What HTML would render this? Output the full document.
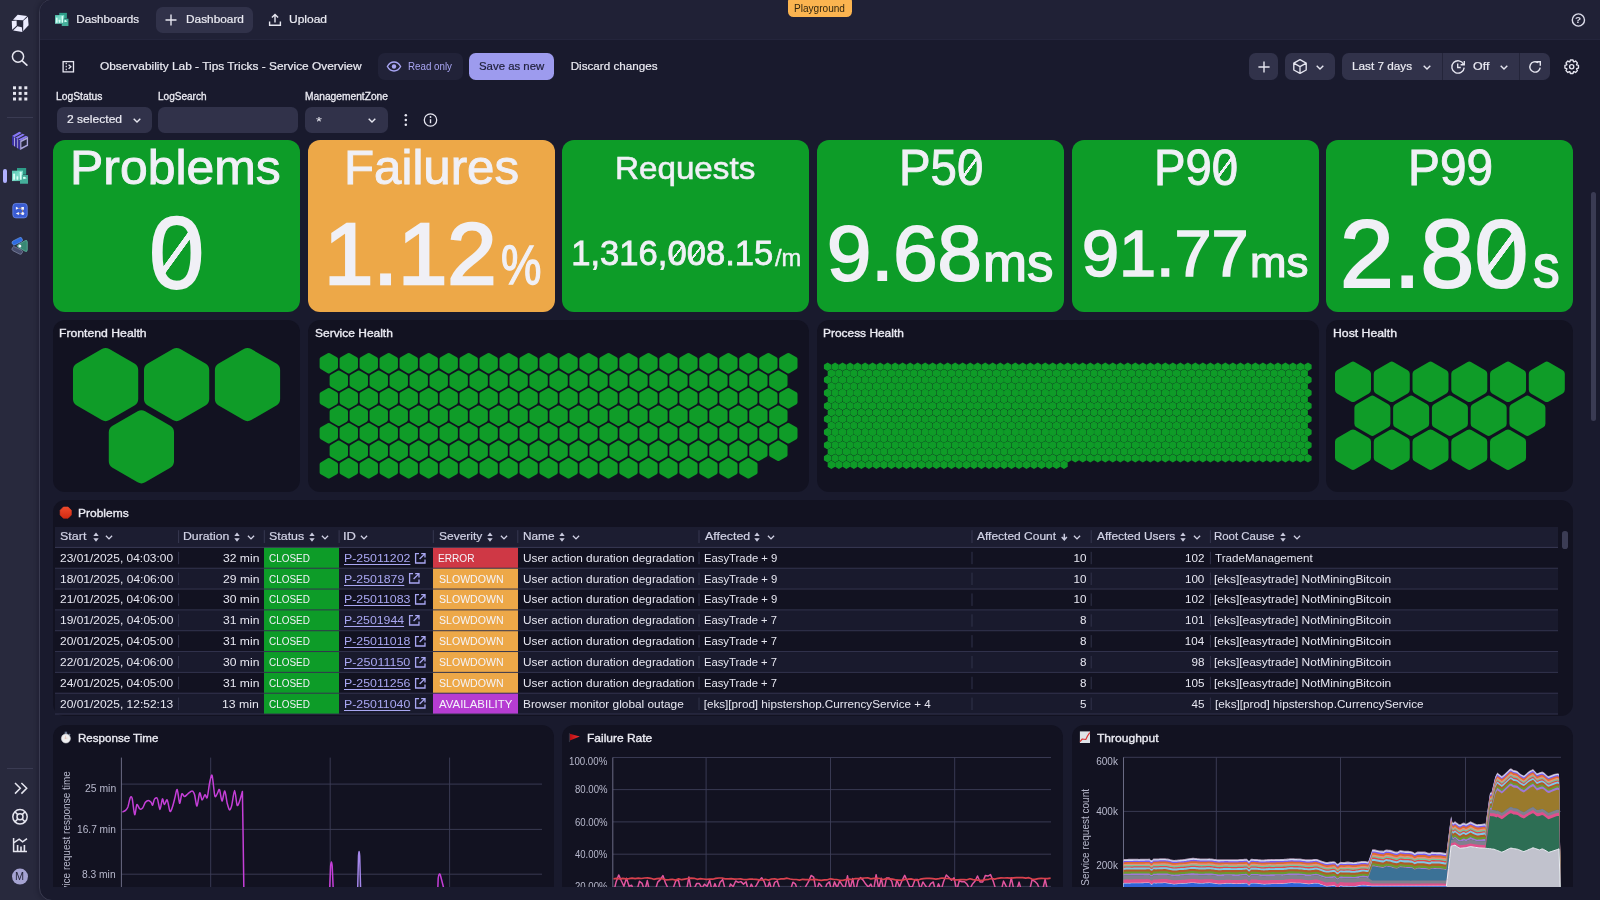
<!DOCTYPE html>
<html lang="en"><head><meta charset="utf-8"><title>Observability Lab - Tips Tricks - Service Overview</title>
<style>
html,body{margin:0;padding:0;}
body{width:1600px;height:900px;overflow:hidden;background:#28293d;font-family:"Liberation Sans", Arial, sans-serif;position:relative;}
#app div,#app svg,.t{position:absolute;}
#app{position:absolute;left:0;top:0;width:1600px;height:900px;overflow:hidden;will-change:transform;}
.t{white-space:pre;transform-origin:0 50%;display:block;text-decoration:none;}
.zs{background:linear-gradient(to bottom right,transparent 43.5%,currentColor 44.5%,currentColor 55.5%,transparent 56.5%);}
svg{overflow:visible;}
</style></head>
<body><div id="app">
<div style="left:39px;top:-1px;width:1570px;height:902px;box-sizing:border-box;border:1px solid #3a3b50;border-radius:13px 0 0 13px;background:#191a2d;overflow:hidden;box-shadow:-1px 0 5px 0 rgba(8,8,24,.30);"><div style="left:0;top:0;width:1570px;height:40px;background:#202136;border-bottom:1px solid #24253c;box-sizing:border-box;"></div></div>
<svg style="left:5.00px;top:8.00px;" width="30.00" height="30.00" viewBox="0 0 900 900"><polygon points="240,350 380,205 665,242 540,370" fill="#ececff" /><polygon points="548,385 688,262 708,520 545,692" fill="#ececff" /><polygon points="203,388 348,378 352,528 215,655" fill="#ececff" /><polygon points="245,672 370,545 505,575 522,718" fill="#ececff" /></svg>
<svg style="left:0.00px;top:40.00px;" width="40.00" height="40.00" viewBox="0 0 40 40"><circle cx="18" cy="16.6" r="5.6" fill="none" stroke="#e6e6f0" stroke-width="1.5"/><path d="M22.2 20.8L26.9 25.2" stroke="#e6e6f0" stroke-width="1.6" stroke-linecap="round"/></svg>
<svg style="left:0.00px;top:0.00px;" width="40.00" height="120.00" viewBox="0 0 40 120"><rect x="13.00" y="86.30" width="3" height="3" fill="#e6e6f0"/><rect x="13.00" y="91.90" width="3" height="3" fill="#e6e6f0"/><rect x="13.00" y="97.50" width="3" height="3" fill="#e6e6f0"/><rect x="18.65" y="86.30" width="3" height="3" fill="#e6e6f0"/><rect x="18.65" y="91.90" width="3" height="3" fill="#e6e6f0"/><rect x="18.65" y="97.50" width="3" height="3" fill="#e6e6f0"/><rect x="24.30" y="86.30" width="3" height="3" fill="#e6e6f0"/><rect x="24.30" y="91.90" width="3" height="3" fill="#e6e6f0"/><rect x="24.30" y="97.50" width="3" height="3" fill="#e6e6f0"/></svg>
<div style="left:7.00px;top:117.00px;width:26.00px;height:1.00px;background:#3a3b52;"></div>
<svg style="left:5.00px;top:126.00px;" width="30.00" height="30.00" viewBox="0 0 900 900"><polygon points="210,300 430,175 500,210 280,335" fill="#8878f6" /><polygon points="210,300 270,332 270,602 213,570" fill="#3b30a6" /><polygon points="270,335 300,350 300,620 270,602" fill="#aaa6da" /><polygon points="305,352 530,230 595,265 370,390" fill="#8878f6" /><polygon points="305,352 365,385 365,657 308,625" fill="#3b30a6" /><polygon points="365,388 398,405 398,675 365,657" fill="#aaa6da" /><polygon points="400,407 625,290 690,325 460,445" fill="#8878f6" /><polygon points="400,407 457,440 457,717 400,682" fill="#3b30a6" /><path d="M455 440L692 325L692 590L455 722Z M492 478L652 398L652 560L492 642Z" fill="#aaa6da" fill-rule="evenodd"/></svg>
<div style="left:3.00px;top:168.60px;width:4.00px;height:14.40px;background:#b0b0ff;border-radius:2px;"></div>
<svg style="left:0.00px;top:161.00px;" width="35.00" height="30.00" viewBox="0 0 1050 900"><defs><linearGradient id="dg" x1="0" y1="0" x2="1" y2="1"><stop offset="0" stop-color="#52c4ae"/><stop offset=".5" stop-color="#7fdccb"/><stop offset="1" stop-color="#3fae98"/></linearGradient></defs><rect x="510" y="210" width="275" height="200" fill="#2e9c88"/><rect x="360" y="290" width="330" height="312" fill="url(#dg)"/><rect x="600" y="420" width="240" height="262" fill="#45ae9a"/><rect x="395" y="375" width="55" height="190" rx="20" fill="#d8fff6"/><rect x="495" y="455" width="55" height="110" rx="20" fill="#d8fff6"/><rect x="595" y="320" width="55" height="245" rx="20" fill="#d8fff6"/><path d="M690 480Q700 465 740 470L800 520L700 548Z" fill="#d0fff4"/></svg>
<svg style="left:5.00px;top:196.00px;" width="30.00" height="65.00" viewBox="0 0 415 900"><rect x="108" y="103" width="200" height="200" rx="42" fill="#3a5cd2" stroke="#6f90f2" stroke-width="10"/><path d="M150 150L192 171L150 192Z" fill="#f4f4ff"/><rect x="226" y="152" width="36" height="38" fill="#f4f4ff"/><path d="M192 220L150 241L192 262Z" fill="#f4f4ff"/><circle cx="245" cy="241" r="21" fill="#f4f4ff"/><path d="M192 171H226M244 190V220M192 241H224" stroke="#f0a030" stroke-width="9" fill="none"/></svg>
<svg style="left:8.00px;top:232.00px;" width="24.00" height="26.00" viewBox="0 0 831 900"><rect x="130" y="245" width="380" height="150" rx="62" fill="#2f6ce0" stroke="#7fb2ff" stroke-width="16" transform="rotate(-27 320 320)"/><rect x="130" y="565" width="380" height="150" rx="62" fill="#474d6c" stroke="#a4acca" stroke-width="16" transform="rotate(27 320 640)"/><path d="M330 452L590 300Q665 262 668 345L668 620Q665 705 590 665L330 512Q290 482 330 452Z" fill="#388874" stroke="#72d2ba" stroke-width="20" stroke-linejoin="round"/><circle cx="410" cy="481" r="52" fill="#f4f4ff"/></svg>
<div style="left:7.00px;top:767.60px;width:26.00px;height:1.00px;background:#3a3b52;"></div>
<svg style="left:0.00px;top:770.00px;" width="40.00" height="130.00" viewBox="0 770 40 130"><path d="M15 783l5.3 5.3L15 793.6M21.4 783l5.3 5.3-5.3 5.3" fill="none" stroke="#e6e6f0" stroke-width="1.5"/><circle cx="20" cy="816.8" r="7.2" fill="none" stroke="#e6e6f0" stroke-width="1.5"/><circle cx="20" cy="816.8" r="3" fill="none" stroke="#e6e6f0" stroke-width="1.5"/><path d="M14.9 811.7l2.9 2.9M25.1 811.7l-2.9 2.9M14.9 821.9l2.9-2.9M25.1 821.9l-2.9-2.9" stroke="#e6e6f0" stroke-width="1.5"/><path d="M13.6 838v13.6H27" fill="none" stroke="#e6e6f0" stroke-width="1.5"/><path d="M14 842.6l5.2-3.4 3.4 2.6 4.4-3.2" fill="none" stroke="#e6e6f0" stroke-width="1.5"/><path d="M17.6 851v-6M21 851v-4.4M24.4 851v-6" stroke="#e6e6f0" stroke-width="1.6"/><circle cx="20" cy="876.6" r="8" fill="#a5a3d2"/></svg>
<span class="t" style="left:15.43px;top:872.40px;font-size:10px;line-height:10px;color:#26263c;transform:scaleX(1.0882);">M</span>
<svg style="left:44.95px;top:7.44px;" width="29.31" height="25.12" viewBox="0 0 1050 900"><defs><linearGradient id="dg2" x1="0" y1="0" x2="1" y2="1"><stop offset="0" stop-color="#52c4ae"/><stop offset=".5" stop-color="#7fdccb"/><stop offset="1" stop-color="#3fae98"/></linearGradient></defs><rect x="510" y="210" width="275" height="200" fill="#2e9c88"/><rect x="360" y="290" width="330" height="312" fill="url(#dg2)"/><rect x="600" y="420" width="240" height="262" fill="#45ae9a"/><rect x="395" y="375" width="55" height="190" rx="20" fill="#d8fff6"/><rect x="495" y="455" width="55" height="110" rx="20" fill="#d8fff6"/><rect x="595" y="320" width="55" height="245" rx="20" fill="#d8fff6"/><path d="M690 480Q700 465 740 470L800 520L700 548Z" fill="#d0fff4"/></svg>
<span class="t" style="left:76.30px;top:13.40px;font-size:11.67px;line-height:11.67px;color:#ebebf3;-webkit-text-stroke:0.2px currentColor;">Dashboards</span>
<div style="left:156.00px;top:6.80px;width:97.20px;height:26.60px;background:#31324a;border-radius:6.7px;"></div>
<svg style="left:164.00px;top:13.00px;" width="14.00" height="14.00" viewBox="0 0 14 14"><path d="M7 1.5v11M1.5 7h11" stroke="#e6e6f0" stroke-width="1.4" fill="none"/></svg>
<span class="t" style="left:185.69px;top:13.40px;font-size:11.67px;line-height:11.67px;color:#ebebf3;transform:scaleX(1.0163);-webkit-text-stroke:0.2px currentColor;">Dashboard</span>
<svg style="left:268.00px;top:12.00px;" width="14.00" height="16.00" viewBox="0 0 14 16"><path d="M7 10.6V2.6M3.9 5.6L7 2.5l3.1 3.1" fill="none" stroke="#e6e6f0" stroke-width="1.4"/><path d="M1.6 9.4v3.9h10.8V9.4" fill="none" stroke="#e6e6f0" stroke-width="1.4"/></svg>
<span class="t" style="left:289.27px;top:13.40px;font-size:11.67px;line-height:11.67px;color:#ebebf3;transform:scaleX(1.0286);-webkit-text-stroke:0.2px currentColor;">Upload</span>
<div style="left:788.00px;top:-4.00px;width:64.00px;height:21.00px;background:#fbb450;border-radius:5.5px;"></div>
<span class="t" style="left:794.39px;top:3.70px;font-size:10px;line-height:10px;color:#33270f;transform:scaleX(1.0075);">Playground</span>
<svg style="left:1570.00px;top:12.00px;" width="17.00" height="17.00" viewBox="0 0 17 17"><circle cx="8.4" cy="8" r="6.1" fill="none" stroke="#dcdcea" stroke-width="1.4"/></svg>
<span class="t" style="left:1575.48px;top:15.30px;font-size:9.5px;line-height:9.5px;color:#dcdcea;font-weight:700;transform:scaleX(1.0612);">?</span>
<svg style="left:61.00px;top:60.00px;" width="14.00" height="14.00" viewBox="0 0 14 14"><rect x="2.1" y="1.600" width="10.400" height="10.300" fill="none" stroke="#e6e6f0" stroke-width="1.3"/><path d="M5.250 2v9.600" stroke="#e6e6f0" stroke-width="1.200" stroke-dasharray="1.500 1.500" stroke-dashoffset="-0.800"/><path d="M7.600 4.700L9.900 6.750 7.600 8.800" fill="none" stroke="#e6e6f0" stroke-width="1.3"/></svg>
<span class="t" style="left:99.69px;top:60.20px;font-size:11.67px;line-height:11.67px;color:#ebebf3;transform:scaleX(1.0196);-webkit-text-stroke:0.2px currentColor;">Observability Lab - Tips Tricks - Service Overview</span>
<div style="left:378.00px;top:53.20px;width:84.50px;height:26.70px;background:#212238;border-radius:6.7px;"></div>
<svg style="left:386.00px;top:59.00px;" width="16.00" height="15.00" viewBox="0 0 16 15"><path d="M1.4 7.5C3 4.4 5.3 3 8 3s5 1.4 6.6 4.5C13 10.600 10.700 12 8 12S3 10.600 1.400 7.500Z" fill="none" stroke="#a9a6f4" stroke-width="1.4"/><circle cx="8" cy="7.500" r="2.2" fill="#a9a6f4"/></svg>
<span class="t" style="left:408.02px;top:62.00px;font-size:10px;line-height:10px;color:#a9a6f4;transform:scaleX(0.9767);">Read only</span>
<div style="left:469.00px;top:53.20px;width:85.00px;height:26.70px;background:#9d9bee;border-radius:6.7px;"></div>
<span class="t" style="left:479.11px;top:60.20px;font-size:11.67px;line-height:11.67px;color:#1e1f38;transform:scaleX(0.9777);-webkit-text-stroke:0.2px currentColor;">Save as new</span>
<span class="t" style="left:570.70px;top:60.20px;font-size:11.67px;line-height:11.67px;color:#ebebf3;-webkit-text-stroke:0.2px currentColor;">Discard changes</span>
<div style="left:1248.50px;top:53.20px;width:29.50px;height:26.70px;background:#31324a;border-radius:6.7px;"></div>
<svg style="left:1256.50px;top:59.70px;" width="14.00" height="14.00" viewBox="0 0 14 14"><path d="M7 1.4v11.2M1.4 7h11.2" stroke="#e6e6f0" stroke-width="1.4" fill="none"/></svg>
<div style="left:1285.00px;top:53.20px;width:50.00px;height:26.70px;background:#31324a;border-radius:6.7px;"></div>
<svg style="left:1292.00px;top:58.00px;" width="16.00" height="17.00" viewBox="0 0 16 17"><path d="M8 1.7L14.200 5.100V12L8 15.400 1.800 12V5.100Z M1.800 5.100L8 8.600L14.200 5.100M8 8.600V15.400" fill="none" stroke="#e6e6f0" stroke-width="1.35" stroke-linejoin="round"/></svg>
<svg style="left:1313.90px;top:60.80px;" width="12.00" height="12.00" viewBox="-6 -6 12 12"><path d="M-3.3 -1.3499999999999999L0 1.95L3.3 -1.3499999999999999" fill="none" stroke="#e6e6f0" stroke-width="1.4"/></svg>
<div style="left:1341.80px;top:53.20px;width:208.00px;height:26.70px;background:#31324a;border-radius:6.7px;"></div>
<div style="left:1441.80px;top:53.20px;width:1.00px;height:26.70px;background:#24253a;"></div>
<div style="left:1519.00px;top:53.20px;width:1.00px;height:26.70px;background:#24253a;"></div>
<span class="t" style="left:1351.69px;top:60.20px;font-size:11.67px;line-height:11.67px;color:#ebebf3;transform:scaleX(1.0078);-webkit-text-stroke:0.2px currentColor;">Last 7 days</span>
<svg style="left:1420.70px;top:60.80px;" width="12.00" height="12.00" viewBox="-6 -6 12 12"><path d="M-3.3 -1.3499999999999999L0 1.95L3.3 -1.3499999999999999" fill="none" stroke="#e6e6f0" stroke-width="1.4"/></svg>
<svg style="left:1450.00px;top:59.00px;" width="16.00" height="16.00" viewBox="0 0 16 16"><path d="M13.6 5.2A6.200 6.200 0 1 0 14.200 8.600" fill="none" stroke="#e6e6f0" stroke-width="1.35"/><path d="M14.300 2v3.700h-3.700" fill="none" stroke="#e6e6f0" stroke-width="1.35"/><path d="M7.700 4.600v3.900h3.100" fill="none" stroke="#e6e6f0" stroke-width="1.35"/></svg>
<span class="t" style="left:1472.57px;top:60.20px;font-size:11.67px;line-height:11.67px;color:#ebebf3;transform:scaleX(1.0666);-webkit-text-stroke:0.2px currentColor;">Off</span>
<svg style="left:1498.00px;top:60.80px;" width="12.00" height="12.00" viewBox="-6 -6 12 12"><path d="M-3.3 -1.3499999999999999L0 1.95L3.3 -1.3499999999999999" fill="none" stroke="#e6e6f0" stroke-width="1.4"/></svg>
<svg style="left:1528.00px;top:59.00px;" width="15.00" height="15.00" viewBox="0 0 15 15"><path d="M12.200 8.600A5.200 5.200 0 1 1 10.100 3.700" fill="none" stroke="#e6e6f0" stroke-width="1.4"/><path d="M8.300 2.700h4v4" fill="none" stroke="#e6e6f0" stroke-width="1.4"/></svg>
<svg style="left:1563.00px;top:58.00px;" width="18.00" height="18.00" viewBox="0 0 18 18"><path d="M7.40 1.97L10.00 1.97L10.52 3.77L10.94 3.94L12.57 3.04L14.41 4.88L13.51 6.51L13.68 6.93L15.48 7.45L15.48 10.05L13.68 10.57L13.51 10.99L14.41 12.62L12.57 14.46L10.94 13.56L10.52 13.73L10.00 15.53L7.40 15.53L6.88 13.73L6.46 13.56L4.83 14.46L2.99 12.62L3.89 10.99L3.72 10.57L1.92 10.05L1.92 7.45L3.72 6.93L3.89 6.51L2.99 4.88L4.83 3.04L6.46 3.94L6.88 3.77Z" fill="none" stroke="#e6e6f0" stroke-width="1.35" stroke-linejoin="round"/><circle cx="8.700" cy="8.750" r="2.100" fill="none" stroke="#e6e6f0" stroke-width="1.35"/></svg>
<span class="t" style="left:56.38px;top:92.40px;font-size:10px;line-height:10px;color:#ebebf3;transform:scaleX(1.0311);-webkit-text-stroke:0.3px currentColor;">LogStatus</span>
<span class="t" style="left:158.00px;top:92.40px;font-size:10px;line-height:10px;color:#ebebf3;transform:scaleX(1.0041);-webkit-text-stroke:0.3px currentColor;">LogSearch</span>
<span class="t" style="left:304.78px;top:92.40px;font-size:10px;line-height:10px;color:#ebebf3;transform:scaleX(1.0225);-webkit-text-stroke:0.3px currentColor;">ManagementZone</span>
<div style="left:57.00px;top:106.60px;width:94.60px;height:26.40px;background:#31324a;border-radius:6.7px;"></div>
<span class="t" style="left:67.08px;top:113.20px;font-size:11.67px;line-height:11.67px;color:#ebebf3;transform:scaleX(1.0365);-webkit-text-stroke:0.2px currentColor;">2 selected</span>
<svg style="left:130.60px;top:114.30px;" width="12.00" height="12.00" viewBox="-6 -6 12 12"><path d="M-3.3 -1.3499999999999999L0 1.95L3.3 -1.3499999999999999" fill="none" stroke="#e6e6f0" stroke-width="1.4"/></svg>
<div style="left:158.30px;top:106.60px;width:140.00px;height:26.40px;background:#31324a;border-radius:6.7px;"></div>
<div style="left:305.00px;top:106.60px;width:82.60px;height:26.40px;background:#31324a;border-radius:6.7px;"></div>
<span class="t" style="left:316.17px;top:115.30px;font-size:13px;line-height:13px;color:#ebebf3;transform:scaleX(1.1702);">*</span>
<svg style="left:366.20px;top:114.30px;" width="12.00" height="12.00" viewBox="-6 -6 12 12"><path d="M-3.3 -1.3499999999999999L0 1.95L3.3 -1.3499999999999999" fill="none" stroke="#e6e6f0" stroke-width="1.4"/></svg>
<svg style="left:400.00px;top:112.00px;" width="12.00" height="17.00" viewBox="0 0 12 17"><circle cx="5.800" cy="3.300" r="1.250" fill="#e6e6f0"/><circle cx="5.800" cy="8" r="1.250" fill="#e6e6f0"/><circle cx="5.800" cy="12.700" r="1.250" fill="#e6e6f0"/></svg>
<svg style="left:422.00px;top:112.00px;" width="17.00" height="17.00" viewBox="0 0 17 17"><circle cx="8.500" cy="8" r="6.200" fill="none" stroke="#e6e6f0" stroke-width="1.3"/><path d="M8.500 7.200v4" stroke="#e6e6f0" stroke-width="1.4"/><circle cx="8.500" cy="5" r=".9" fill="#e6e6f0"/></svg>
<div style="left:53.10px;top:139.80px;width:246.90px;height:172.00px;background:#0d9c28;border-radius:12px;"></div>
<div style="left:308.30px;top:139.80px;width:246.90px;height:172.00px;background:#eda848;border-radius:12px;"></div>
<div style="left:562.40px;top:139.80px;width:246.90px;height:172.00px;background:#0d9c28;border-radius:12px;"></div>
<div style="left:817.30px;top:139.80px;width:246.90px;height:172.00px;background:#0d9c28;border-radius:12px;"></div>
<div style="left:1072.30px;top:139.80px;width:246.90px;height:172.00px;background:#0d9c28;border-radius:12px;"></div>
<div style="left:1326.40px;top:139.80px;width:246.90px;height:172.00px;background:#0d9c28;border-radius:12px;"></div>
<span class="t" style="left:70.35px;top:144.40px;font-size:47.87px;line-height:47.87px;color:#f0f0f6;transform:scaleX(1.0424);-webkit-text-stroke:0.9px currentColor;">Problems</span>
<span class="t" style="left:148.79px;top:202.91px;font-size:101.57px;line-height:101.57px;color:#f0f0f6;transform:scaleX(0.9786);-webkit-text-stroke:1.8px currentColor;">0</span><div class="zs" style="left:161.52px;top:232.56px;width:29.82px;height:40.63px;color:#f0f0f6;"></div>
<span class="t" style="left:344.00px;top:144.11px;font-size:47.6px;line-height:47.6px;color:#f0f0f6;transform:scaleX(1.0342);-webkit-text-stroke:0.9px currentColor;">Failures</span>
<span class="t" style="left:323.96px;top:210.60px;font-size:86.9px;line-height:86.9px;color:#f0f0f6;transform:scaleX(1.0201);-webkit-text-stroke:2.4px currentColor;">1.12</span>
<span class="t" style="left:500.63px;top:236.87px;font-size:56.35px;line-height:56.35px;color:#f0f0f6;transform:scaleX(0.8079);-webkit-text-stroke:1.3px currentColor;">%</span>
<span class="t" style="left:615.41px;top:152.48px;font-size:32.11px;line-height:32.11px;color:#f0f0f6;transform:scaleX(1.0338);-webkit-text-stroke:0.6px currentColor;">Requests</span>
<span class="t" style="left:571.24px;top:236.43px;font-size:34.61px;line-height:34.61px;color:#f0f0f6;-webkit-text-stroke:0.8px currentColor;">1,316,008.15</span><div class="zs" style="left:671.73px;top:246.57px;width:10.37px;height:13.84px;color:#f0f0f6;"></div><div class="zs" style="left:690.95px;top:246.57px;width:10.37px;height:13.84px;color:#f0f0f6;"></div>
<span class="t" style="left:775.20px;top:245.73px;font-size:23.87px;line-height:23.87px;color:#f0f0f6;transform:scaleX(0.9947);-webkit-text-stroke:0.4px currentColor;">/m</span>
<span class="t" style="left:898.65px;top:142.58px;font-size:49.53px;line-height:49.53px;color:#f0f0f6;transform:scaleX(0.9563);-webkit-text-stroke:0.9px currentColor;">P50</span><div class="zs" style="left:962.65px;top:157.58px;width:14.21px;height:19.81px;color:#f0f0f6;"></div>
<span class="t" style="left:827.17px;top:214.38px;font-size:78.33px;line-height:78.33px;color:#f0f0f6;transform:scaleX(1.0151);-webkit-text-stroke:2px currentColor;">9.68</span>
<span class="t" style="left:983.40px;top:238.00px;font-size:51.38px;line-height:51.38px;color:#f0f0f6;transform:scaleX(1.0287);-webkit-text-stroke:1.4px currentColor;">ms</span>
<span class="t" style="left:1153.65px;top:142.58px;font-size:49.53px;line-height:49.53px;color:#f0f0f6;transform:scaleX(0.9551);-webkit-text-stroke:0.9px currentColor;">P90</span><div class="zs" style="left:1217.57px;top:157.58px;width:14.19px;height:19.81px;color:#f0f0f6;"></div>
<span class="t" style="left:1081.98px;top:222.09px;font-size:64.83px;line-height:64.83px;color:#f0f0f6;transform:scaleX(1.0270);-webkit-text-stroke:1.6px currentColor;">91.77</span>
<span class="t" style="left:1250.21px;top:241.69px;font-size:42.31px;line-height:42.31px;color:#f0f0f6;transform:scaleX(1.0356);-webkit-text-stroke:1.1px currentColor;">ms</span>
<span class="t" style="left:1407.61px;top:142.58px;font-size:49.53px;line-height:49.53px;color:#f0f0f6;transform:scaleX(0.9653);-webkit-text-stroke:0.9px currentColor;">P99</span>
<span class="t" style="left:1339.67px;top:205.60px;font-size:95.72px;line-height:95.72px;color:#f0f0f6;transform:scaleX(1.0099);-webkit-text-stroke:2.2px currentColor;">2.80</span><div class="zs" style="left:1486.42px;top:234.44px;width:29.00px;height:38.29px;color:#f0f0f6;"></div>
<span class="t" style="left:1533.17px;top:236.45px;font-size:60.8px;line-height:60.8px;color:#f0f0f6;transform:scaleX(0.8784);-webkit-text-stroke:1.6px currentColor;">s</span>
<div style="left:1591.00px;top:192.00px;width:5.00px;height:229.00px;background:#3a3b53;border-radius:2.5px;"></div>
<div style="left:53.10px;top:320.00px;width:246.90px;height:171.60px;background:#121221;border-radius:12px;"></div>
<div style="left:308.30px;top:320.00px;width:501.00px;height:171.60px;background:#121221;border-radius:12px;"></div>
<div style="left:817.30px;top:320.00px;width:502.00px;height:171.60px;background:#121221;border-radius:12px;"></div>
<div style="left:1326.40px;top:320.00px;width:246.90px;height:171.60px;background:#121221;border-radius:12px;"></div>
<span class="t" style="left:59.36px;top:326.90px;font-size:11.67px;line-height:11.67px;color:#ebebf3;transform:scaleX(1.0477);-webkit-text-stroke:0.35px currentColor;">Frontend Health</span>
<span class="t" style="left:314.79px;top:326.90px;font-size:11.67px;line-height:11.67px;color:#ebebf3;transform:scaleX(1.0269);-webkit-text-stroke:0.35px currentColor;">Service Health</span>
<span class="t" style="left:823.38px;top:326.90px;font-size:11.67px;line-height:11.67px;color:#ebebf3;transform:scaleX(1.0228);-webkit-text-stroke:0.35px currentColor;">Process Health</span>
<span class="t" style="left:1332.65px;top:326.90px;font-size:11.67px;line-height:11.67px;color:#ebebf3;transform:scaleX(1.0509);-webkit-text-stroke:0.35px currentColor;">Host Health</span>
<svg style="left:0.00px;top:0.00px;" width="1600.00" height="900.00" viewBox="0 0 1600 900"><defs><path id="hx1" d="M-3.77 -35.50A7.53 7.53 0 0 1 3.77 -35.50L28.86 -21.01A7.53 7.53 0 0 1 32.62 -14.49L32.62 14.49A7.53 7.53 0 0 1 28.86 21.01L3.77 35.50A7.53 7.53 0 0 1 -3.77 35.50L-28.86 21.01A7.53 7.53 0 0 1 -32.62 14.49L-32.62 -14.49A7.53 7.53 0 0 1 -28.86 -21.01Z"/></defs><g fill="#0f9c28"><use href="#hx1" x="105.60" y="384.60"/><use href="#hx1" x="176.60" y="384.60"/><use href="#hx1" x="247.50" y="384.60"/><use href="#hx1" x="141.40" y="446.80"/></g></svg>
<svg style="left:0.00px;top:0.00px;" width="1600.00" height="900.00" viewBox="0 0 1600 900"><defs><path id="hx2" d="M-1.06 -9.99A2.12 2.12 0 0 1 1.06 -9.99L8.12 -5.91A2.12 2.12 0 0 1 9.18 -4.08L9.18 4.08A2.12 2.12 0 0 1 8.12 5.91L1.06 9.99A2.12 2.12 0 0 1 -1.06 9.99L-8.12 5.91A2.12 2.12 0 0 1 -9.18 4.08L-9.18 -4.08A2.12 2.12 0 0 1 -8.12 -5.91Z"/></defs><g fill="#0f9c28"><use href="#hx2" x="328.80" y="363.20"/><use href="#hx2" x="348.78" y="363.20"/><use href="#hx2" x="368.76" y="363.20"/><use href="#hx2" x="388.74" y="363.20"/><use href="#hx2" x="408.72" y="363.20"/><use href="#hx2" x="428.70" y="363.20"/><use href="#hx2" x="448.68" y="363.20"/><use href="#hx2" x="468.66" y="363.20"/><use href="#hx2" x="488.64" y="363.20"/><use href="#hx2" x="508.62" y="363.20"/><use href="#hx2" x="528.60" y="363.20"/><use href="#hx2" x="548.58" y="363.20"/><use href="#hx2" x="568.56" y="363.20"/><use href="#hx2" x="588.54" y="363.20"/><use href="#hx2" x="608.52" y="363.20"/><use href="#hx2" x="628.50" y="363.20"/><use href="#hx2" x="648.48" y="363.20"/><use href="#hx2" x="668.46" y="363.20"/><use href="#hx2" x="688.44" y="363.20"/><use href="#hx2" x="708.42" y="363.20"/><use href="#hx2" x="728.40" y="363.20"/><use href="#hx2" x="748.38" y="363.20"/><use href="#hx2" x="768.36" y="363.20"/><use href="#hx2" x="788.34" y="363.20"/><use href="#hx2" x="338.80" y="380.72"/><use href="#hx2" x="358.78" y="380.72"/><use href="#hx2" x="378.76" y="380.72"/><use href="#hx2" x="398.74" y="380.72"/><use href="#hx2" x="418.72" y="380.72"/><use href="#hx2" x="438.70" y="380.72"/><use href="#hx2" x="458.68" y="380.72"/><use href="#hx2" x="478.66" y="380.72"/><use href="#hx2" x="498.64" y="380.72"/><use href="#hx2" x="518.62" y="380.72"/><use href="#hx2" x="538.60" y="380.72"/><use href="#hx2" x="558.58" y="380.72"/><use href="#hx2" x="578.56" y="380.72"/><use href="#hx2" x="598.54" y="380.72"/><use href="#hx2" x="618.52" y="380.72"/><use href="#hx2" x="638.50" y="380.72"/><use href="#hx2" x="658.48" y="380.72"/><use href="#hx2" x="678.46" y="380.72"/><use href="#hx2" x="698.44" y="380.72"/><use href="#hx2" x="718.42" y="380.72"/><use href="#hx2" x="738.40" y="380.72"/><use href="#hx2" x="758.38" y="380.72"/><use href="#hx2" x="778.36" y="380.72"/><use href="#hx2" x="328.80" y="398.24"/><use href="#hx2" x="348.78" y="398.24"/><use href="#hx2" x="368.76" y="398.24"/><use href="#hx2" x="388.74" y="398.24"/><use href="#hx2" x="408.72" y="398.24"/><use href="#hx2" x="428.70" y="398.24"/><use href="#hx2" x="448.68" y="398.24"/><use href="#hx2" x="468.66" y="398.24"/><use href="#hx2" x="488.64" y="398.24"/><use href="#hx2" x="508.62" y="398.24"/><use href="#hx2" x="528.60" y="398.24"/><use href="#hx2" x="548.58" y="398.24"/><use href="#hx2" x="568.56" y="398.24"/><use href="#hx2" x="588.54" y="398.24"/><use href="#hx2" x="608.52" y="398.24"/><use href="#hx2" x="628.50" y="398.24"/><use href="#hx2" x="648.48" y="398.24"/><use href="#hx2" x="668.46" y="398.24"/><use href="#hx2" x="688.44" y="398.24"/><use href="#hx2" x="708.42" y="398.24"/><use href="#hx2" x="728.40" y="398.24"/><use href="#hx2" x="748.38" y="398.24"/><use href="#hx2" x="768.36" y="398.24"/><use href="#hx2" x="788.34" y="398.24"/><use href="#hx2" x="338.80" y="415.76"/><use href="#hx2" x="358.78" y="415.76"/><use href="#hx2" x="378.76" y="415.76"/><use href="#hx2" x="398.74" y="415.76"/><use href="#hx2" x="418.72" y="415.76"/><use href="#hx2" x="438.70" y="415.76"/><use href="#hx2" x="458.68" y="415.76"/><use href="#hx2" x="478.66" y="415.76"/><use href="#hx2" x="498.64" y="415.76"/><use href="#hx2" x="518.62" y="415.76"/><use href="#hx2" x="538.60" y="415.76"/><use href="#hx2" x="558.58" y="415.76"/><use href="#hx2" x="578.56" y="415.76"/><use href="#hx2" x="598.54" y="415.76"/><use href="#hx2" x="618.52" y="415.76"/><use href="#hx2" x="638.50" y="415.76"/><use href="#hx2" x="658.48" y="415.76"/><use href="#hx2" x="678.46" y="415.76"/><use href="#hx2" x="698.44" y="415.76"/><use href="#hx2" x="718.42" y="415.76"/><use href="#hx2" x="738.40" y="415.76"/><use href="#hx2" x="758.38" y="415.76"/><use href="#hx2" x="778.36" y="415.76"/><use href="#hx2" x="328.80" y="433.28"/><use href="#hx2" x="348.78" y="433.28"/><use href="#hx2" x="368.76" y="433.28"/><use href="#hx2" x="388.74" y="433.28"/><use href="#hx2" x="408.72" y="433.28"/><use href="#hx2" x="428.70" y="433.28"/><use href="#hx2" x="448.68" y="433.28"/><use href="#hx2" x="468.66" y="433.28"/><use href="#hx2" x="488.64" y="433.28"/><use href="#hx2" x="508.62" y="433.28"/><use href="#hx2" x="528.60" y="433.28"/><use href="#hx2" x="548.58" y="433.28"/><use href="#hx2" x="568.56" y="433.28"/><use href="#hx2" x="588.54" y="433.28"/><use href="#hx2" x="608.52" y="433.28"/><use href="#hx2" x="628.50" y="433.28"/><use href="#hx2" x="648.48" y="433.28"/><use href="#hx2" x="668.46" y="433.28"/><use href="#hx2" x="688.44" y="433.28"/><use href="#hx2" x="708.42" y="433.28"/><use href="#hx2" x="728.40" y="433.28"/><use href="#hx2" x="748.38" y="433.28"/><use href="#hx2" x="768.36" y="433.28"/><use href="#hx2" x="788.34" y="433.28"/><use href="#hx2" x="338.80" y="450.80"/><use href="#hx2" x="358.78" y="450.80"/><use href="#hx2" x="378.76" y="450.80"/><use href="#hx2" x="398.74" y="450.80"/><use href="#hx2" x="418.72" y="450.80"/><use href="#hx2" x="438.70" y="450.80"/><use href="#hx2" x="458.68" y="450.80"/><use href="#hx2" x="478.66" y="450.80"/><use href="#hx2" x="498.64" y="450.80"/><use href="#hx2" x="518.62" y="450.80"/><use href="#hx2" x="538.60" y="450.80"/><use href="#hx2" x="558.58" y="450.80"/><use href="#hx2" x="578.56" y="450.80"/><use href="#hx2" x="598.54" y="450.80"/><use href="#hx2" x="618.52" y="450.80"/><use href="#hx2" x="638.50" y="450.80"/><use href="#hx2" x="658.48" y="450.80"/><use href="#hx2" x="678.46" y="450.80"/><use href="#hx2" x="698.44" y="450.80"/><use href="#hx2" x="718.42" y="450.80"/><use href="#hx2" x="738.40" y="450.80"/><use href="#hx2" x="758.38" y="450.80"/><use href="#hx2" x="778.36" y="450.80"/><use href="#hx2" x="328.80" y="468.32"/><use href="#hx2" x="348.78" y="468.32"/><use href="#hx2" x="368.76" y="468.32"/><use href="#hx2" x="388.74" y="468.32"/><use href="#hx2" x="408.72" y="468.32"/><use href="#hx2" x="428.70" y="468.32"/><use href="#hx2" x="448.68" y="468.32"/><use href="#hx2" x="468.66" y="468.32"/><use href="#hx2" x="488.64" y="468.32"/><use href="#hx2" x="508.62" y="468.32"/><use href="#hx2" x="528.60" y="468.32"/><use href="#hx2" x="548.58" y="468.32"/><use href="#hx2" x="568.56" y="468.32"/><use href="#hx2" x="588.54" y="468.32"/><use href="#hx2" x="608.52" y="468.32"/><use href="#hx2" x="628.50" y="468.32"/><use href="#hx2" x="648.48" y="468.32"/><use href="#hx2" x="668.46" y="468.32"/><use href="#hx2" x="688.44" y="468.32"/><use href="#hx2" x="708.42" y="468.32"/><use href="#hx2" x="728.40" y="468.32"/><use href="#hx2" x="748.38" y="468.32"/></g></svg>
<svg style="left:0.00px;top:0.00px;" width="1600.00" height="900.00" viewBox="0 0 1600 900"><defs><path id="hx3" d="M0.00 -3.37L2.92 -1.69L2.92 1.69L0.00 3.37L-2.92 1.69L-2.92 -1.69Z" stroke-width="1.53" stroke-linejoin="round"/></defs><g fill="#0f9c28" stroke="#0f9c28"><use href="#hx3" x="827.60" y="366.75"/><use href="#hx3" x="835.11" y="366.75"/><use href="#hx3" x="842.61" y="366.75"/><use href="#hx3" x="850.12" y="366.75"/><use href="#hx3" x="857.62" y="366.75"/><use href="#hx3" x="865.12" y="366.75"/><use href="#hx3" x="872.63" y="366.75"/><use href="#hx3" x="880.13" y="366.75"/><use href="#hx3" x="887.64" y="366.75"/><use href="#hx3" x="895.14" y="366.75"/><use href="#hx3" x="902.65" y="366.75"/><use href="#hx3" x="910.15" y="366.75"/><use href="#hx3" x="917.66" y="366.75"/><use href="#hx3" x="925.16" y="366.75"/><use href="#hx3" x="932.67" y="366.75"/><use href="#hx3" x="940.18" y="366.75"/><use href="#hx3" x="947.68" y="366.75"/><use href="#hx3" x="955.19" y="366.75"/><use href="#hx3" x="962.69" y="366.75"/><use href="#hx3" x="970.20" y="366.75"/><use href="#hx3" x="977.70" y="366.75"/><use href="#hx3" x="985.21" y="366.75"/><use href="#hx3" x="992.71" y="366.75"/><use href="#hx3" x="1000.22" y="366.75"/><use href="#hx3" x="1007.72" y="366.75"/><use href="#hx3" x="1015.23" y="366.75"/><use href="#hx3" x="1022.73" y="366.75"/><use href="#hx3" x="1030.24" y="366.75"/><use href="#hx3" x="1037.74" y="366.75"/><use href="#hx3" x="1045.25" y="366.75"/><use href="#hx3" x="1052.75" y="366.75"/><use href="#hx3" x="1060.26" y="366.75"/><use href="#hx3" x="1067.76" y="366.75"/><use href="#hx3" x="1075.27" y="366.75"/><use href="#hx3" x="1082.77" y="366.75"/><use href="#hx3" x="1090.28" y="366.75"/><use href="#hx3" x="1097.78" y="366.75"/><use href="#hx3" x="1105.29" y="366.75"/><use href="#hx3" x="1112.79" y="366.75"/><use href="#hx3" x="1120.30" y="366.75"/><use href="#hx3" x="1127.80" y="366.75"/><use href="#hx3" x="1135.31" y="366.75"/><use href="#hx3" x="1142.81" y="366.75"/><use href="#hx3" x="1150.32" y="366.75"/><use href="#hx3" x="1157.82" y="366.75"/><use href="#hx3" x="1165.33" y="366.75"/><use href="#hx3" x="1172.83" y="366.75"/><use href="#hx3" x="1180.34" y="366.75"/><use href="#hx3" x="1187.84" y="366.75"/><use href="#hx3" x="1195.35" y="366.75"/><use href="#hx3" x="1202.85" y="366.75"/><use href="#hx3" x="1210.36" y="366.75"/><use href="#hx3" x="1217.86" y="366.75"/><use href="#hx3" x="1225.37" y="366.75"/><use href="#hx3" x="1232.87" y="366.75"/><use href="#hx3" x="1240.38" y="366.75"/><use href="#hx3" x="1247.88" y="366.75"/><use href="#hx3" x="1255.38" y="366.75"/><use href="#hx3" x="1262.89" y="366.75"/><use href="#hx3" x="1270.39" y="366.75"/><use href="#hx3" x="1277.90" y="366.75"/><use href="#hx3" x="1285.40" y="366.75"/><use href="#hx3" x="1292.91" y="366.75"/><use href="#hx3" x="1300.41" y="366.75"/><use href="#hx3" x="1307.92" y="366.75"/><use href="#hx3" x="831.35" y="373.29"/><use href="#hx3" x="838.86" y="373.29"/><use href="#hx3" x="846.36" y="373.29"/><use href="#hx3" x="853.87" y="373.29"/><use href="#hx3" x="861.37" y="373.29"/><use href="#hx3" x="868.88" y="373.29"/><use href="#hx3" x="876.38" y="373.29"/><use href="#hx3" x="883.88" y="373.29"/><use href="#hx3" x="891.39" y="373.29"/><use href="#hx3" x="898.89" y="373.29"/><use href="#hx3" x="906.40" y="373.29"/><use href="#hx3" x="913.90" y="373.29"/><use href="#hx3" x="921.41" y="373.29"/><use href="#hx3" x="928.91" y="373.29"/><use href="#hx3" x="936.42" y="373.29"/><use href="#hx3" x="943.93" y="373.29"/><use href="#hx3" x="951.43" y="373.29"/><use href="#hx3" x="958.94" y="373.29"/><use href="#hx3" x="966.44" y="373.29"/><use href="#hx3" x="973.95" y="373.29"/><use href="#hx3" x="981.45" y="373.29"/><use href="#hx3" x="988.96" y="373.29"/><use href="#hx3" x="996.46" y="373.29"/><use href="#hx3" x="1003.97" y="373.29"/><use href="#hx3" x="1011.47" y="373.29"/><use href="#hx3" x="1018.98" y="373.29"/><use href="#hx3" x="1026.48" y="373.29"/><use href="#hx3" x="1033.99" y="373.29"/><use href="#hx3" x="1041.49" y="373.29"/><use href="#hx3" x="1049.00" y="373.29"/><use href="#hx3" x="1056.50" y="373.29"/><use href="#hx3" x="1064.01" y="373.29"/><use href="#hx3" x="1071.51" y="373.29"/><use href="#hx3" x="1079.02" y="373.29"/><use href="#hx3" x="1086.52" y="373.29"/><use href="#hx3" x="1094.03" y="373.29"/><use href="#hx3" x="1101.53" y="373.29"/><use href="#hx3" x="1109.04" y="373.29"/><use href="#hx3" x="1116.54" y="373.29"/><use href="#hx3" x="1124.05" y="373.29"/><use href="#hx3" x="1131.55" y="373.29"/><use href="#hx3" x="1139.06" y="373.29"/><use href="#hx3" x="1146.56" y="373.29"/><use href="#hx3" x="1154.07" y="373.29"/><use href="#hx3" x="1161.57" y="373.29"/><use href="#hx3" x="1169.08" y="373.29"/><use href="#hx3" x="1176.58" y="373.29"/><use href="#hx3" x="1184.09" y="373.29"/><use href="#hx3" x="1191.59" y="373.29"/><use href="#hx3" x="1199.10" y="373.29"/><use href="#hx3" x="1206.60" y="373.29"/><use href="#hx3" x="1214.11" y="373.29"/><use href="#hx3" x="1221.61" y="373.29"/><use href="#hx3" x="1229.12" y="373.29"/><use href="#hx3" x="1236.62" y="373.29"/><use href="#hx3" x="1244.12" y="373.29"/><use href="#hx3" x="1251.63" y="373.29"/><use href="#hx3" x="1259.13" y="373.29"/><use href="#hx3" x="1266.64" y="373.29"/><use href="#hx3" x="1274.14" y="373.29"/><use href="#hx3" x="1281.65" y="373.29"/><use href="#hx3" x="1289.15" y="373.29"/><use href="#hx3" x="1296.66" y="373.29"/><use href="#hx3" x="1304.16" y="373.29"/><use href="#hx3" x="827.60" y="379.82"/><use href="#hx3" x="835.11" y="379.82"/><use href="#hx3" x="842.61" y="379.82"/><use href="#hx3" x="850.12" y="379.82"/><use href="#hx3" x="857.62" y="379.82"/><use href="#hx3" x="865.12" y="379.82"/><use href="#hx3" x="872.63" y="379.82"/><use href="#hx3" x="880.13" y="379.82"/><use href="#hx3" x="887.64" y="379.82"/><use href="#hx3" x="895.14" y="379.82"/><use href="#hx3" x="902.65" y="379.82"/><use href="#hx3" x="910.15" y="379.82"/><use href="#hx3" x="917.66" y="379.82"/><use href="#hx3" x="925.16" y="379.82"/><use href="#hx3" x="932.67" y="379.82"/><use href="#hx3" x="940.18" y="379.82"/><use href="#hx3" x="947.68" y="379.82"/><use href="#hx3" x="955.19" y="379.82"/><use href="#hx3" x="962.69" y="379.82"/><use href="#hx3" x="970.20" y="379.82"/><use href="#hx3" x="977.70" y="379.82"/><use href="#hx3" x="985.21" y="379.82"/><use href="#hx3" x="992.71" y="379.82"/><use href="#hx3" x="1000.22" y="379.82"/><use href="#hx3" x="1007.72" y="379.82"/><use href="#hx3" x="1015.23" y="379.82"/><use href="#hx3" x="1022.73" y="379.82"/><use href="#hx3" x="1030.24" y="379.82"/><use href="#hx3" x="1037.74" y="379.82"/><use href="#hx3" x="1045.25" y="379.82"/><use href="#hx3" x="1052.75" y="379.82"/><use href="#hx3" x="1060.26" y="379.82"/><use href="#hx3" x="1067.76" y="379.82"/><use href="#hx3" x="1075.27" y="379.82"/><use href="#hx3" x="1082.77" y="379.82"/><use href="#hx3" x="1090.28" y="379.82"/><use href="#hx3" x="1097.78" y="379.82"/><use href="#hx3" x="1105.29" y="379.82"/><use href="#hx3" x="1112.79" y="379.82"/><use href="#hx3" x="1120.30" y="379.82"/><use href="#hx3" x="1127.80" y="379.82"/><use href="#hx3" x="1135.31" y="379.82"/><use href="#hx3" x="1142.81" y="379.82"/><use href="#hx3" x="1150.32" y="379.82"/><use href="#hx3" x="1157.82" y="379.82"/><use href="#hx3" x="1165.33" y="379.82"/><use href="#hx3" x="1172.83" y="379.82"/><use href="#hx3" x="1180.34" y="379.82"/><use href="#hx3" x="1187.84" y="379.82"/><use href="#hx3" x="1195.35" y="379.82"/><use href="#hx3" x="1202.85" y="379.82"/><use href="#hx3" x="1210.36" y="379.82"/><use href="#hx3" x="1217.86" y="379.82"/><use href="#hx3" x="1225.37" y="379.82"/><use href="#hx3" x="1232.87" y="379.82"/><use href="#hx3" x="1240.38" y="379.82"/><use href="#hx3" x="1247.88" y="379.82"/><use href="#hx3" x="1255.38" y="379.82"/><use href="#hx3" x="1262.89" y="379.82"/><use href="#hx3" x="1270.39" y="379.82"/><use href="#hx3" x="1277.90" y="379.82"/><use href="#hx3" x="1285.40" y="379.82"/><use href="#hx3" x="1292.91" y="379.82"/><use href="#hx3" x="1300.41" y="379.82"/><use href="#hx3" x="1307.92" y="379.82"/><use href="#hx3" x="831.35" y="386.36"/><use href="#hx3" x="838.86" y="386.36"/><use href="#hx3" x="846.36" y="386.36"/><use href="#hx3" x="853.87" y="386.36"/><use href="#hx3" x="861.37" y="386.36"/><use href="#hx3" x="868.88" y="386.36"/><use href="#hx3" x="876.38" y="386.36"/><use href="#hx3" x="883.88" y="386.36"/><use href="#hx3" x="891.39" y="386.36"/><use href="#hx3" x="898.89" y="386.36"/><use href="#hx3" x="906.40" y="386.36"/><use href="#hx3" x="913.90" y="386.36"/><use href="#hx3" x="921.41" y="386.36"/><use href="#hx3" x="928.91" y="386.36"/><use href="#hx3" x="936.42" y="386.36"/><use href="#hx3" x="943.93" y="386.36"/><use href="#hx3" x="951.43" y="386.36"/><use href="#hx3" x="958.94" y="386.36"/><use href="#hx3" x="966.44" y="386.36"/><use href="#hx3" x="973.95" y="386.36"/><use href="#hx3" x="981.45" y="386.36"/><use href="#hx3" x="988.96" y="386.36"/><use href="#hx3" x="996.46" y="386.36"/><use href="#hx3" x="1003.97" y="386.36"/><use href="#hx3" x="1011.47" y="386.36"/><use href="#hx3" x="1018.98" y="386.36"/><use href="#hx3" x="1026.48" y="386.36"/><use href="#hx3" x="1033.99" y="386.36"/><use href="#hx3" x="1041.49" y="386.36"/><use href="#hx3" x="1049.00" y="386.36"/><use href="#hx3" x="1056.50" y="386.36"/><use href="#hx3" x="1064.01" y="386.36"/><use href="#hx3" x="1071.51" y="386.36"/><use href="#hx3" x="1079.02" y="386.36"/><use href="#hx3" x="1086.52" y="386.36"/><use href="#hx3" x="1094.03" y="386.36"/><use href="#hx3" x="1101.53" y="386.36"/><use href="#hx3" x="1109.04" y="386.36"/><use href="#hx3" x="1116.54" y="386.36"/><use href="#hx3" x="1124.05" y="386.36"/><use href="#hx3" x="1131.55" y="386.36"/><use href="#hx3" x="1139.06" y="386.36"/><use href="#hx3" x="1146.56" y="386.36"/><use href="#hx3" x="1154.07" y="386.36"/><use href="#hx3" x="1161.57" y="386.36"/><use href="#hx3" x="1169.08" y="386.36"/><use href="#hx3" x="1176.58" y="386.36"/><use href="#hx3" x="1184.09" y="386.36"/><use href="#hx3" x="1191.59" y="386.36"/><use href="#hx3" x="1199.10" y="386.36"/><use href="#hx3" x="1206.60" y="386.36"/><use href="#hx3" x="1214.11" y="386.36"/><use href="#hx3" x="1221.61" y="386.36"/><use href="#hx3" x="1229.12" y="386.36"/><use href="#hx3" x="1236.62" y="386.36"/><use href="#hx3" x="1244.12" y="386.36"/><use href="#hx3" x="1251.63" y="386.36"/><use href="#hx3" x="1259.13" y="386.36"/><use href="#hx3" x="1266.64" y="386.36"/><use href="#hx3" x="1274.14" y="386.36"/><use href="#hx3" x="1281.65" y="386.36"/><use href="#hx3" x="1289.15" y="386.36"/><use href="#hx3" x="1296.66" y="386.36"/><use href="#hx3" x="1304.16" y="386.36"/><use href="#hx3" x="827.60" y="392.89"/><use href="#hx3" x="835.11" y="392.89"/><use href="#hx3" x="842.61" y="392.89"/><use href="#hx3" x="850.12" y="392.89"/><use href="#hx3" x="857.62" y="392.89"/><use href="#hx3" x="865.12" y="392.89"/><use href="#hx3" x="872.63" y="392.89"/><use href="#hx3" x="880.13" y="392.89"/><use href="#hx3" x="887.64" y="392.89"/><use href="#hx3" x="895.14" y="392.89"/><use href="#hx3" x="902.65" y="392.89"/><use href="#hx3" x="910.15" y="392.89"/><use href="#hx3" x="917.66" y="392.89"/><use href="#hx3" x="925.16" y="392.89"/><use href="#hx3" x="932.67" y="392.89"/><use href="#hx3" x="940.18" y="392.89"/><use href="#hx3" x="947.68" y="392.89"/><use href="#hx3" x="955.19" y="392.89"/><use href="#hx3" x="962.69" y="392.89"/><use href="#hx3" x="970.20" y="392.89"/><use href="#hx3" x="977.70" y="392.89"/><use href="#hx3" x="985.21" y="392.89"/><use href="#hx3" x="992.71" y="392.89"/><use href="#hx3" x="1000.22" y="392.89"/><use href="#hx3" x="1007.72" y="392.89"/><use href="#hx3" x="1015.23" y="392.89"/><use href="#hx3" x="1022.73" y="392.89"/><use href="#hx3" x="1030.24" y="392.89"/><use href="#hx3" x="1037.74" y="392.89"/><use href="#hx3" x="1045.25" y="392.89"/><use href="#hx3" x="1052.75" y="392.89"/><use href="#hx3" x="1060.26" y="392.89"/><use href="#hx3" x="1067.76" y="392.89"/><use href="#hx3" x="1075.27" y="392.89"/><use href="#hx3" x="1082.77" y="392.89"/><use href="#hx3" x="1090.28" y="392.89"/><use href="#hx3" x="1097.78" y="392.89"/><use href="#hx3" x="1105.29" y="392.89"/><use href="#hx3" x="1112.79" y="392.89"/><use href="#hx3" x="1120.30" y="392.89"/><use href="#hx3" x="1127.80" y="392.89"/><use href="#hx3" x="1135.31" y="392.89"/><use href="#hx3" x="1142.81" y="392.89"/><use href="#hx3" x="1150.32" y="392.89"/><use href="#hx3" x="1157.82" y="392.89"/><use href="#hx3" x="1165.33" y="392.89"/><use href="#hx3" x="1172.83" y="392.89"/><use href="#hx3" x="1180.34" y="392.89"/><use href="#hx3" x="1187.84" y="392.89"/><use href="#hx3" x="1195.35" y="392.89"/><use href="#hx3" x="1202.85" y="392.89"/><use href="#hx3" x="1210.36" y="392.89"/><use href="#hx3" x="1217.86" y="392.89"/><use href="#hx3" x="1225.37" y="392.89"/><use href="#hx3" x="1232.87" y="392.89"/><use href="#hx3" x="1240.38" y="392.89"/><use href="#hx3" x="1247.88" y="392.89"/><use href="#hx3" x="1255.38" y="392.89"/><use href="#hx3" x="1262.89" y="392.89"/><use href="#hx3" x="1270.39" y="392.89"/><use href="#hx3" x="1277.90" y="392.89"/><use href="#hx3" x="1285.40" y="392.89"/><use href="#hx3" x="1292.91" y="392.89"/><use href="#hx3" x="1300.41" y="392.89"/><use href="#hx3" x="1307.92" y="392.89"/><use href="#hx3" x="831.35" y="399.43"/><use href="#hx3" x="838.86" y="399.43"/><use href="#hx3" x="846.36" y="399.43"/><use href="#hx3" x="853.87" y="399.43"/><use href="#hx3" x="861.37" y="399.43"/><use href="#hx3" x="868.88" y="399.43"/><use href="#hx3" x="876.38" y="399.43"/><use href="#hx3" x="883.88" y="399.43"/><use href="#hx3" x="891.39" y="399.43"/><use href="#hx3" x="898.89" y="399.43"/><use href="#hx3" x="906.40" y="399.43"/><use href="#hx3" x="913.90" y="399.43"/><use href="#hx3" x="921.41" y="399.43"/><use href="#hx3" x="928.91" y="399.43"/><use href="#hx3" x="936.42" y="399.43"/><use href="#hx3" x="943.93" y="399.43"/><use href="#hx3" x="951.43" y="399.43"/><use href="#hx3" x="958.94" y="399.43"/><use href="#hx3" x="966.44" y="399.43"/><use href="#hx3" x="973.95" y="399.43"/><use href="#hx3" x="981.45" y="399.43"/><use href="#hx3" x="988.96" y="399.43"/><use href="#hx3" x="996.46" y="399.43"/><use href="#hx3" x="1003.97" y="399.43"/><use href="#hx3" x="1011.47" y="399.43"/><use href="#hx3" x="1018.98" y="399.43"/><use href="#hx3" x="1026.48" y="399.43"/><use href="#hx3" x="1033.99" y="399.43"/><use href="#hx3" x="1041.49" y="399.43"/><use href="#hx3" x="1049.00" y="399.43"/><use href="#hx3" x="1056.50" y="399.43"/><use href="#hx3" x="1064.01" y="399.43"/><use href="#hx3" x="1071.51" y="399.43"/><use href="#hx3" x="1079.02" y="399.43"/><use href="#hx3" x="1086.52" y="399.43"/><use href="#hx3" x="1094.03" y="399.43"/><use href="#hx3" x="1101.53" y="399.43"/><use href="#hx3" x="1109.04" y="399.43"/><use href="#hx3" x="1116.54" y="399.43"/><use href="#hx3" x="1124.05" y="399.43"/><use href="#hx3" x="1131.55" y="399.43"/><use href="#hx3" x="1139.06" y="399.43"/><use href="#hx3" x="1146.56" y="399.43"/><use href="#hx3" x="1154.07" y="399.43"/><use href="#hx3" x="1161.57" y="399.43"/><use href="#hx3" x="1169.08" y="399.43"/><use href="#hx3" x="1176.58" y="399.43"/><use href="#hx3" x="1184.09" y="399.43"/><use href="#hx3" x="1191.59" y="399.43"/><use href="#hx3" x="1199.10" y="399.43"/><use href="#hx3" x="1206.60" y="399.43"/><use href="#hx3" x="1214.11" y="399.43"/><use href="#hx3" x="1221.61" y="399.43"/><use href="#hx3" x="1229.12" y="399.43"/><use href="#hx3" x="1236.62" y="399.43"/><use href="#hx3" x="1244.12" y="399.43"/><use href="#hx3" x="1251.63" y="399.43"/><use href="#hx3" x="1259.13" y="399.43"/><use href="#hx3" x="1266.64" y="399.43"/><use href="#hx3" x="1274.14" y="399.43"/><use href="#hx3" x="1281.65" y="399.43"/><use href="#hx3" x="1289.15" y="399.43"/><use href="#hx3" x="1296.66" y="399.43"/><use href="#hx3" x="1304.16" y="399.43"/><use href="#hx3" x="827.60" y="405.96"/><use href="#hx3" x="835.11" y="405.96"/><use href="#hx3" x="842.61" y="405.96"/><use href="#hx3" x="850.12" y="405.96"/><use href="#hx3" x="857.62" y="405.96"/><use href="#hx3" x="865.12" y="405.96"/><use href="#hx3" x="872.63" y="405.96"/><use href="#hx3" x="880.13" y="405.96"/><use href="#hx3" x="887.64" y="405.96"/><use href="#hx3" x="895.14" y="405.96"/><use href="#hx3" x="902.65" y="405.96"/><use href="#hx3" x="910.15" y="405.96"/><use href="#hx3" x="917.66" y="405.96"/><use href="#hx3" x="925.16" y="405.96"/><use href="#hx3" x="932.67" y="405.96"/><use href="#hx3" x="940.18" y="405.96"/><use href="#hx3" x="947.68" y="405.96"/><use href="#hx3" x="955.19" y="405.96"/><use href="#hx3" x="962.69" y="405.96"/><use href="#hx3" x="970.20" y="405.96"/><use href="#hx3" x="977.70" y="405.96"/><use href="#hx3" x="985.21" y="405.96"/><use href="#hx3" x="992.71" y="405.96"/><use href="#hx3" x="1000.22" y="405.96"/><use href="#hx3" x="1007.72" y="405.96"/><use href="#hx3" x="1015.23" y="405.96"/><use href="#hx3" x="1022.73" y="405.96"/><use href="#hx3" x="1030.24" y="405.96"/><use href="#hx3" x="1037.74" y="405.96"/><use href="#hx3" x="1045.25" y="405.96"/><use href="#hx3" x="1052.75" y="405.96"/><use href="#hx3" x="1060.26" y="405.96"/><use href="#hx3" x="1067.76" y="405.96"/><use href="#hx3" x="1075.27" y="405.96"/><use href="#hx3" x="1082.77" y="405.96"/><use href="#hx3" x="1090.28" y="405.96"/><use href="#hx3" x="1097.78" y="405.96"/><use href="#hx3" x="1105.29" y="405.96"/><use href="#hx3" x="1112.79" y="405.96"/><use href="#hx3" x="1120.30" y="405.96"/><use href="#hx3" x="1127.80" y="405.96"/><use href="#hx3" x="1135.31" y="405.96"/><use href="#hx3" x="1142.81" y="405.96"/><use href="#hx3" x="1150.32" y="405.96"/><use href="#hx3" x="1157.82" y="405.96"/><use href="#hx3" x="1165.33" y="405.96"/><use href="#hx3" x="1172.83" y="405.96"/><use href="#hx3" x="1180.34" y="405.96"/><use href="#hx3" x="1187.84" y="405.96"/><use href="#hx3" x="1195.35" y="405.96"/><use href="#hx3" x="1202.85" y="405.96"/><use href="#hx3" x="1210.36" y="405.96"/><use href="#hx3" x="1217.86" y="405.96"/><use href="#hx3" x="1225.37" y="405.96"/><use href="#hx3" x="1232.87" y="405.96"/><use href="#hx3" x="1240.38" y="405.96"/><use href="#hx3" x="1247.88" y="405.96"/><use href="#hx3" x="1255.38" y="405.96"/><use href="#hx3" x="1262.89" y="405.96"/><use href="#hx3" x="1270.39" y="405.96"/><use href="#hx3" x="1277.90" y="405.96"/><use href="#hx3" x="1285.40" y="405.96"/><use href="#hx3" x="1292.91" y="405.96"/><use href="#hx3" x="1300.41" y="405.96"/><use href="#hx3" x="1307.92" y="405.96"/><use href="#hx3" x="831.35" y="412.50"/><use href="#hx3" x="838.86" y="412.50"/><use href="#hx3" x="846.36" y="412.50"/><use href="#hx3" x="853.87" y="412.50"/><use href="#hx3" x="861.37" y="412.50"/><use href="#hx3" x="868.88" y="412.50"/><use href="#hx3" x="876.38" y="412.50"/><use href="#hx3" x="883.88" y="412.50"/><use href="#hx3" x="891.39" y="412.50"/><use href="#hx3" x="898.89" y="412.50"/><use href="#hx3" x="906.40" y="412.50"/><use href="#hx3" x="913.90" y="412.50"/><use href="#hx3" x="921.41" y="412.50"/><use href="#hx3" x="928.91" y="412.50"/><use href="#hx3" x="936.42" y="412.50"/><use href="#hx3" x="943.93" y="412.50"/><use href="#hx3" x="951.43" y="412.50"/><use href="#hx3" x="958.94" y="412.50"/><use href="#hx3" x="966.44" y="412.50"/><use href="#hx3" x="973.95" y="412.50"/><use href="#hx3" x="981.45" y="412.50"/><use href="#hx3" x="988.96" y="412.50"/><use href="#hx3" x="996.46" y="412.50"/><use href="#hx3" x="1003.97" y="412.50"/><use href="#hx3" x="1011.47" y="412.50"/><use href="#hx3" x="1018.98" y="412.50"/><use href="#hx3" x="1026.48" y="412.50"/><use href="#hx3" x="1033.99" y="412.50"/><use href="#hx3" x="1041.49" y="412.50"/><use href="#hx3" x="1049.00" y="412.50"/><use href="#hx3" x="1056.50" y="412.50"/><use href="#hx3" x="1064.01" y="412.50"/><use href="#hx3" x="1071.51" y="412.50"/><use href="#hx3" x="1079.02" y="412.50"/><use href="#hx3" x="1086.52" y="412.50"/><use href="#hx3" x="1094.03" y="412.50"/><use href="#hx3" x="1101.53" y="412.50"/><use href="#hx3" x="1109.04" y="412.50"/><use href="#hx3" x="1116.54" y="412.50"/><use href="#hx3" x="1124.05" y="412.50"/><use href="#hx3" x="1131.55" y="412.50"/><use href="#hx3" x="1139.06" y="412.50"/><use href="#hx3" x="1146.56" y="412.50"/><use href="#hx3" x="1154.07" y="412.50"/><use href="#hx3" x="1161.57" y="412.50"/><use href="#hx3" x="1169.08" y="412.50"/><use href="#hx3" x="1176.58" y="412.50"/><use href="#hx3" x="1184.09" y="412.50"/><use href="#hx3" x="1191.59" y="412.50"/><use href="#hx3" x="1199.10" y="412.50"/><use href="#hx3" x="1206.60" y="412.50"/><use href="#hx3" x="1214.11" y="412.50"/><use href="#hx3" x="1221.61" y="412.50"/><use href="#hx3" x="1229.12" y="412.50"/><use href="#hx3" x="1236.62" y="412.50"/><use href="#hx3" x="1244.12" y="412.50"/><use href="#hx3" x="1251.63" y="412.50"/><use href="#hx3" x="1259.13" y="412.50"/><use href="#hx3" x="1266.64" y="412.50"/><use href="#hx3" x="1274.14" y="412.50"/><use href="#hx3" x="1281.65" y="412.50"/><use href="#hx3" x="1289.15" y="412.50"/><use href="#hx3" x="1296.66" y="412.50"/><use href="#hx3" x="1304.16" y="412.50"/><use href="#hx3" x="827.60" y="419.03"/><use href="#hx3" x="835.11" y="419.03"/><use href="#hx3" x="842.61" y="419.03"/><use href="#hx3" x="850.12" y="419.03"/><use href="#hx3" x="857.62" y="419.03"/><use href="#hx3" x="865.12" y="419.03"/><use href="#hx3" x="872.63" y="419.03"/><use href="#hx3" x="880.13" y="419.03"/><use href="#hx3" x="887.64" y="419.03"/><use href="#hx3" x="895.14" y="419.03"/><use href="#hx3" x="902.65" y="419.03"/><use href="#hx3" x="910.15" y="419.03"/><use href="#hx3" x="917.66" y="419.03"/><use href="#hx3" x="925.16" y="419.03"/><use href="#hx3" x="932.67" y="419.03"/><use href="#hx3" x="940.18" y="419.03"/><use href="#hx3" x="947.68" y="419.03"/><use href="#hx3" x="955.19" y="419.03"/><use href="#hx3" x="962.69" y="419.03"/><use href="#hx3" x="970.20" y="419.03"/><use href="#hx3" x="977.70" y="419.03"/><use href="#hx3" x="985.21" y="419.03"/><use href="#hx3" x="992.71" y="419.03"/><use href="#hx3" x="1000.22" y="419.03"/><use href="#hx3" x="1007.72" y="419.03"/><use href="#hx3" x="1015.23" y="419.03"/><use href="#hx3" x="1022.73" y="419.03"/><use href="#hx3" x="1030.24" y="419.03"/><use href="#hx3" x="1037.74" y="419.03"/><use href="#hx3" x="1045.25" y="419.03"/><use href="#hx3" x="1052.75" y="419.03"/><use href="#hx3" x="1060.26" y="419.03"/><use href="#hx3" x="1067.76" y="419.03"/><use href="#hx3" x="1075.27" y="419.03"/><use href="#hx3" x="1082.77" y="419.03"/><use href="#hx3" x="1090.28" y="419.03"/><use href="#hx3" x="1097.78" y="419.03"/><use href="#hx3" x="1105.29" y="419.03"/><use href="#hx3" x="1112.79" y="419.03"/><use href="#hx3" x="1120.30" y="419.03"/><use href="#hx3" x="1127.80" y="419.03"/><use href="#hx3" x="1135.31" y="419.03"/><use href="#hx3" x="1142.81" y="419.03"/><use href="#hx3" x="1150.32" y="419.03"/><use href="#hx3" x="1157.82" y="419.03"/><use href="#hx3" x="1165.33" y="419.03"/><use href="#hx3" x="1172.83" y="419.03"/><use href="#hx3" x="1180.34" y="419.03"/><use href="#hx3" x="1187.84" y="419.03"/><use href="#hx3" x="1195.35" y="419.03"/><use href="#hx3" x="1202.85" y="419.03"/><use href="#hx3" x="1210.36" y="419.03"/><use href="#hx3" x="1217.86" y="419.03"/><use href="#hx3" x="1225.37" y="419.03"/><use href="#hx3" x="1232.87" y="419.03"/><use href="#hx3" x="1240.38" y="419.03"/><use href="#hx3" x="1247.88" y="419.03"/><use href="#hx3" x="1255.38" y="419.03"/><use href="#hx3" x="1262.89" y="419.03"/><use href="#hx3" x="1270.39" y="419.03"/><use href="#hx3" x="1277.90" y="419.03"/><use href="#hx3" x="1285.40" y="419.03"/><use href="#hx3" x="1292.91" y="419.03"/><use href="#hx3" x="1300.41" y="419.03"/><use href="#hx3" x="1307.92" y="419.03"/><use href="#hx3" x="831.35" y="425.56"/><use href="#hx3" x="838.86" y="425.56"/><use href="#hx3" x="846.36" y="425.56"/><use href="#hx3" x="853.87" y="425.56"/><use href="#hx3" x="861.37" y="425.56"/><use href="#hx3" x="868.88" y="425.56"/><use href="#hx3" x="876.38" y="425.56"/><use href="#hx3" x="883.88" y="425.56"/><use href="#hx3" x="891.39" y="425.56"/><use href="#hx3" x="898.89" y="425.56"/><use href="#hx3" x="906.40" y="425.56"/><use href="#hx3" x="913.90" y="425.56"/><use href="#hx3" x="921.41" y="425.56"/><use href="#hx3" x="928.91" y="425.56"/><use href="#hx3" x="936.42" y="425.56"/><use href="#hx3" x="943.93" y="425.56"/><use href="#hx3" x="951.43" y="425.56"/><use href="#hx3" x="958.94" y="425.56"/><use href="#hx3" x="966.44" y="425.56"/><use href="#hx3" x="973.95" y="425.56"/><use href="#hx3" x="981.45" y="425.56"/><use href="#hx3" x="988.96" y="425.56"/><use href="#hx3" x="996.46" y="425.56"/><use href="#hx3" x="1003.97" y="425.56"/><use href="#hx3" x="1011.47" y="425.56"/><use href="#hx3" x="1018.98" y="425.56"/><use href="#hx3" x="1026.48" y="425.56"/><use href="#hx3" x="1033.99" y="425.56"/><use href="#hx3" x="1041.49" y="425.56"/><use href="#hx3" x="1049.00" y="425.56"/><use href="#hx3" x="1056.50" y="425.56"/><use href="#hx3" x="1064.01" y="425.56"/><use href="#hx3" x="1071.51" y="425.56"/><use href="#hx3" x="1079.02" y="425.56"/><use href="#hx3" x="1086.52" y="425.56"/><use href="#hx3" x="1094.03" y="425.56"/><use href="#hx3" x="1101.53" y="425.56"/><use href="#hx3" x="1109.04" y="425.56"/><use href="#hx3" x="1116.54" y="425.56"/><use href="#hx3" x="1124.05" y="425.56"/><use href="#hx3" x="1131.55" y="425.56"/><use href="#hx3" x="1139.06" y="425.56"/><use href="#hx3" x="1146.56" y="425.56"/><use href="#hx3" x="1154.07" y="425.56"/><use href="#hx3" x="1161.57" y="425.56"/><use href="#hx3" x="1169.08" y="425.56"/><use href="#hx3" x="1176.58" y="425.56"/><use href="#hx3" x="1184.09" y="425.56"/><use href="#hx3" x="1191.59" y="425.56"/><use href="#hx3" x="1199.10" y="425.56"/><use href="#hx3" x="1206.60" y="425.56"/><use href="#hx3" x="1214.11" y="425.56"/><use href="#hx3" x="1221.61" y="425.56"/><use href="#hx3" x="1229.12" y="425.56"/><use href="#hx3" x="1236.62" y="425.56"/><use href="#hx3" x="1244.12" y="425.56"/><use href="#hx3" x="1251.63" y="425.56"/><use href="#hx3" x="1259.13" y="425.56"/><use href="#hx3" x="1266.64" y="425.56"/><use href="#hx3" x="1274.14" y="425.56"/><use href="#hx3" x="1281.65" y="425.56"/><use href="#hx3" x="1289.15" y="425.56"/><use href="#hx3" x="1296.66" y="425.56"/><use href="#hx3" x="1304.16" y="425.56"/><use href="#hx3" x="827.60" y="432.10"/><use href="#hx3" x="835.11" y="432.10"/><use href="#hx3" x="842.61" y="432.10"/><use href="#hx3" x="850.12" y="432.10"/><use href="#hx3" x="857.62" y="432.10"/><use href="#hx3" x="865.12" y="432.10"/><use href="#hx3" x="872.63" y="432.10"/><use href="#hx3" x="880.13" y="432.10"/><use href="#hx3" x="887.64" y="432.10"/><use href="#hx3" x="895.14" y="432.10"/><use href="#hx3" x="902.65" y="432.10"/><use href="#hx3" x="910.15" y="432.10"/><use href="#hx3" x="917.66" y="432.10"/><use href="#hx3" x="925.16" y="432.10"/><use href="#hx3" x="932.67" y="432.10"/><use href="#hx3" x="940.18" y="432.10"/><use href="#hx3" x="947.68" y="432.10"/><use href="#hx3" x="955.19" y="432.10"/><use href="#hx3" x="962.69" y="432.10"/><use href="#hx3" x="970.20" y="432.10"/><use href="#hx3" x="977.70" y="432.10"/><use href="#hx3" x="985.21" y="432.10"/><use href="#hx3" x="992.71" y="432.10"/><use href="#hx3" x="1000.22" y="432.10"/><use href="#hx3" x="1007.72" y="432.10"/><use href="#hx3" x="1015.23" y="432.10"/><use href="#hx3" x="1022.73" y="432.10"/><use href="#hx3" x="1030.24" y="432.10"/><use href="#hx3" x="1037.74" y="432.10"/><use href="#hx3" x="1045.25" y="432.10"/><use href="#hx3" x="1052.75" y="432.10"/><use href="#hx3" x="1060.26" y="432.10"/><use href="#hx3" x="1067.76" y="432.10"/><use href="#hx3" x="1075.27" y="432.10"/><use href="#hx3" x="1082.77" y="432.10"/><use href="#hx3" x="1090.28" y="432.10"/><use href="#hx3" x="1097.78" y="432.10"/><use href="#hx3" x="1105.29" y="432.10"/><use href="#hx3" x="1112.79" y="432.10"/><use href="#hx3" x="1120.30" y="432.10"/><use href="#hx3" x="1127.80" y="432.10"/><use href="#hx3" x="1135.31" y="432.10"/><use href="#hx3" x="1142.81" y="432.10"/><use href="#hx3" x="1150.32" y="432.10"/><use href="#hx3" x="1157.82" y="432.10"/><use href="#hx3" x="1165.33" y="432.10"/><use href="#hx3" x="1172.83" y="432.10"/><use href="#hx3" x="1180.34" y="432.10"/><use href="#hx3" x="1187.84" y="432.10"/><use href="#hx3" x="1195.35" y="432.10"/><use href="#hx3" x="1202.85" y="432.10"/><use href="#hx3" x="1210.36" y="432.10"/><use href="#hx3" x="1217.86" y="432.10"/><use href="#hx3" x="1225.37" y="432.10"/><use href="#hx3" x="1232.87" y="432.10"/><use href="#hx3" x="1240.38" y="432.10"/><use href="#hx3" x="1247.88" y="432.10"/><use href="#hx3" x="1255.38" y="432.10"/><use href="#hx3" x="1262.89" y="432.10"/><use href="#hx3" x="1270.39" y="432.10"/><use href="#hx3" x="1277.90" y="432.10"/><use href="#hx3" x="1285.40" y="432.10"/><use href="#hx3" x="1292.91" y="432.10"/><use href="#hx3" x="1300.41" y="432.10"/><use href="#hx3" x="1307.92" y="432.10"/><use href="#hx3" x="831.35" y="438.63"/><use href="#hx3" x="838.86" y="438.63"/><use href="#hx3" x="846.36" y="438.63"/><use href="#hx3" x="853.87" y="438.63"/><use href="#hx3" x="861.37" y="438.63"/><use href="#hx3" x="868.88" y="438.63"/><use href="#hx3" x="876.38" y="438.63"/><use href="#hx3" x="883.88" y="438.63"/><use href="#hx3" x="891.39" y="438.63"/><use href="#hx3" x="898.89" y="438.63"/><use href="#hx3" x="906.40" y="438.63"/><use href="#hx3" x="913.90" y="438.63"/><use href="#hx3" x="921.41" y="438.63"/><use href="#hx3" x="928.91" y="438.63"/><use href="#hx3" x="936.42" y="438.63"/><use href="#hx3" x="943.93" y="438.63"/><use href="#hx3" x="951.43" y="438.63"/><use href="#hx3" x="958.94" y="438.63"/><use href="#hx3" x="966.44" y="438.63"/><use href="#hx3" x="973.95" y="438.63"/><use href="#hx3" x="981.45" y="438.63"/><use href="#hx3" x="988.96" y="438.63"/><use href="#hx3" x="996.46" y="438.63"/><use href="#hx3" x="1003.97" y="438.63"/><use href="#hx3" x="1011.47" y="438.63"/><use href="#hx3" x="1018.98" y="438.63"/><use href="#hx3" x="1026.48" y="438.63"/><use href="#hx3" x="1033.99" y="438.63"/><use href="#hx3" x="1041.49" y="438.63"/><use href="#hx3" x="1049.00" y="438.63"/><use href="#hx3" x="1056.50" y="438.63"/><use href="#hx3" x="1064.01" y="438.63"/><use href="#hx3" x="1071.51" y="438.63"/><use href="#hx3" x="1079.02" y="438.63"/><use href="#hx3" x="1086.52" y="438.63"/><use href="#hx3" x="1094.03" y="438.63"/><use href="#hx3" x="1101.53" y="438.63"/><use href="#hx3" x="1109.04" y="438.63"/><use href="#hx3" x="1116.54" y="438.63"/><use href="#hx3" x="1124.05" y="438.63"/><use href="#hx3" x="1131.55" y="438.63"/><use href="#hx3" x="1139.06" y="438.63"/><use href="#hx3" x="1146.56" y="438.63"/><use href="#hx3" x="1154.07" y="438.63"/><use href="#hx3" x="1161.57" y="438.63"/><use href="#hx3" x="1169.08" y="438.63"/><use href="#hx3" x="1176.58" y="438.63"/><use href="#hx3" x="1184.09" y="438.63"/><use href="#hx3" x="1191.59" y="438.63"/><use href="#hx3" x="1199.10" y="438.63"/><use href="#hx3" x="1206.60" y="438.63"/><use href="#hx3" x="1214.11" y="438.63"/><use href="#hx3" x="1221.61" y="438.63"/><use href="#hx3" x="1229.12" y="438.63"/><use href="#hx3" x="1236.62" y="438.63"/><use href="#hx3" x="1244.12" y="438.63"/><use href="#hx3" x="1251.63" y="438.63"/><use href="#hx3" x="1259.13" y="438.63"/><use href="#hx3" x="1266.64" y="438.63"/><use href="#hx3" x="1274.14" y="438.63"/><use href="#hx3" x="1281.65" y="438.63"/><use href="#hx3" x="1289.15" y="438.63"/><use href="#hx3" x="1296.66" y="438.63"/><use href="#hx3" x="1304.16" y="438.63"/><use href="#hx3" x="827.60" y="445.17"/><use href="#hx3" x="835.11" y="445.17"/><use href="#hx3" x="842.61" y="445.17"/><use href="#hx3" x="850.12" y="445.17"/><use href="#hx3" x="857.62" y="445.17"/><use href="#hx3" x="865.12" y="445.17"/><use href="#hx3" x="872.63" y="445.17"/><use href="#hx3" x="880.13" y="445.17"/><use href="#hx3" x="887.64" y="445.17"/><use href="#hx3" x="895.14" y="445.17"/><use href="#hx3" x="902.65" y="445.17"/><use href="#hx3" x="910.15" y="445.17"/><use href="#hx3" x="917.66" y="445.17"/><use href="#hx3" x="925.16" y="445.17"/><use href="#hx3" x="932.67" y="445.17"/><use href="#hx3" x="940.18" y="445.17"/><use href="#hx3" x="947.68" y="445.17"/><use href="#hx3" x="955.19" y="445.17"/><use href="#hx3" x="962.69" y="445.17"/><use href="#hx3" x="970.20" y="445.17"/><use href="#hx3" x="977.70" y="445.17"/><use href="#hx3" x="985.21" y="445.17"/><use href="#hx3" x="992.71" y="445.17"/><use href="#hx3" x="1000.22" y="445.17"/><use href="#hx3" x="1007.72" y="445.17"/><use href="#hx3" x="1015.23" y="445.17"/><use href="#hx3" x="1022.73" y="445.17"/><use href="#hx3" x="1030.24" y="445.17"/><use href="#hx3" x="1037.74" y="445.17"/><use href="#hx3" x="1045.25" y="445.17"/><use href="#hx3" x="1052.75" y="445.17"/><use href="#hx3" x="1060.26" y="445.17"/><use href="#hx3" x="1067.76" y="445.17"/><use href="#hx3" x="1075.27" y="445.17"/><use href="#hx3" x="1082.77" y="445.17"/><use href="#hx3" x="1090.28" y="445.17"/><use href="#hx3" x="1097.78" y="445.17"/><use href="#hx3" x="1105.29" y="445.17"/><use href="#hx3" x="1112.79" y="445.17"/><use href="#hx3" x="1120.30" y="445.17"/><use href="#hx3" x="1127.80" y="445.17"/><use href="#hx3" x="1135.31" y="445.17"/><use href="#hx3" x="1142.81" y="445.17"/><use href="#hx3" x="1150.32" y="445.17"/><use href="#hx3" x="1157.82" y="445.17"/><use href="#hx3" x="1165.33" y="445.17"/><use href="#hx3" x="1172.83" y="445.17"/><use href="#hx3" x="1180.34" y="445.17"/><use href="#hx3" x="1187.84" y="445.17"/><use href="#hx3" x="1195.35" y="445.17"/><use href="#hx3" x="1202.85" y="445.17"/><use href="#hx3" x="1210.36" y="445.17"/><use href="#hx3" x="1217.86" y="445.17"/><use href="#hx3" x="1225.37" y="445.17"/><use href="#hx3" x="1232.87" y="445.17"/><use href="#hx3" x="1240.38" y="445.17"/><use href="#hx3" x="1247.88" y="445.17"/><use href="#hx3" x="1255.38" y="445.17"/><use href="#hx3" x="1262.89" y="445.17"/><use href="#hx3" x="1270.39" y="445.17"/><use href="#hx3" x="1277.90" y="445.17"/><use href="#hx3" x="1285.40" y="445.17"/><use href="#hx3" x="1292.91" y="445.17"/><use href="#hx3" x="1300.41" y="445.17"/><use href="#hx3" x="1307.92" y="445.17"/><use href="#hx3" x="831.35" y="451.70"/><use href="#hx3" x="838.86" y="451.70"/><use href="#hx3" x="846.36" y="451.70"/><use href="#hx3" x="853.87" y="451.70"/><use href="#hx3" x="861.37" y="451.70"/><use href="#hx3" x="868.88" y="451.70"/><use href="#hx3" x="876.38" y="451.70"/><use href="#hx3" x="883.88" y="451.70"/><use href="#hx3" x="891.39" y="451.70"/><use href="#hx3" x="898.89" y="451.70"/><use href="#hx3" x="906.40" y="451.70"/><use href="#hx3" x="913.90" y="451.70"/><use href="#hx3" x="921.41" y="451.70"/><use href="#hx3" x="928.91" y="451.70"/><use href="#hx3" x="936.42" y="451.70"/><use href="#hx3" x="943.93" y="451.70"/><use href="#hx3" x="951.43" y="451.70"/><use href="#hx3" x="958.94" y="451.70"/><use href="#hx3" x="966.44" y="451.70"/><use href="#hx3" x="973.95" y="451.70"/><use href="#hx3" x="981.45" y="451.70"/><use href="#hx3" x="988.96" y="451.70"/><use href="#hx3" x="996.46" y="451.70"/><use href="#hx3" x="1003.97" y="451.70"/><use href="#hx3" x="1011.47" y="451.70"/><use href="#hx3" x="1018.98" y="451.70"/><use href="#hx3" x="1026.48" y="451.70"/><use href="#hx3" x="1033.99" y="451.70"/><use href="#hx3" x="1041.49" y="451.70"/><use href="#hx3" x="1049.00" y="451.70"/><use href="#hx3" x="1056.50" y="451.70"/><use href="#hx3" x="1064.01" y="451.70"/><use href="#hx3" x="1071.51" y="451.70"/><use href="#hx3" x="1079.02" y="451.70"/><use href="#hx3" x="1086.52" y="451.70"/><use href="#hx3" x="1094.03" y="451.70"/><use href="#hx3" x="1101.53" y="451.70"/><use href="#hx3" x="1109.04" y="451.70"/><use href="#hx3" x="1116.54" y="451.70"/><use href="#hx3" x="1124.05" y="451.70"/><use href="#hx3" x="1131.55" y="451.70"/><use href="#hx3" x="1139.06" y="451.70"/><use href="#hx3" x="1146.56" y="451.70"/><use href="#hx3" x="1154.07" y="451.70"/><use href="#hx3" x="1161.57" y="451.70"/><use href="#hx3" x="1169.08" y="451.70"/><use href="#hx3" x="1176.58" y="451.70"/><use href="#hx3" x="1184.09" y="451.70"/><use href="#hx3" x="1191.59" y="451.70"/><use href="#hx3" x="1199.10" y="451.70"/><use href="#hx3" x="1206.60" y="451.70"/><use href="#hx3" x="1214.11" y="451.70"/><use href="#hx3" x="1221.61" y="451.70"/><use href="#hx3" x="1229.12" y="451.70"/><use href="#hx3" x="1236.62" y="451.70"/><use href="#hx3" x="1244.12" y="451.70"/><use href="#hx3" x="1251.63" y="451.70"/><use href="#hx3" x="1259.13" y="451.70"/><use href="#hx3" x="1266.64" y="451.70"/><use href="#hx3" x="1274.14" y="451.70"/><use href="#hx3" x="1281.65" y="451.70"/><use href="#hx3" x="1289.15" y="451.70"/><use href="#hx3" x="1296.66" y="451.70"/><use href="#hx3" x="1304.16" y="451.70"/><use href="#hx3" x="827.60" y="458.24"/><use href="#hx3" x="835.11" y="458.24"/><use href="#hx3" x="842.61" y="458.24"/><use href="#hx3" x="850.12" y="458.24"/><use href="#hx3" x="857.62" y="458.24"/><use href="#hx3" x="865.12" y="458.24"/><use href="#hx3" x="872.63" y="458.24"/><use href="#hx3" x="880.13" y="458.24"/><use href="#hx3" x="887.64" y="458.24"/><use href="#hx3" x="895.14" y="458.24"/><use href="#hx3" x="902.65" y="458.24"/><use href="#hx3" x="910.15" y="458.24"/><use href="#hx3" x="917.66" y="458.24"/><use href="#hx3" x="925.16" y="458.24"/><use href="#hx3" x="932.67" y="458.24"/><use href="#hx3" x="940.18" y="458.24"/><use href="#hx3" x="947.68" y="458.24"/><use href="#hx3" x="955.19" y="458.24"/><use href="#hx3" x="962.69" y="458.24"/><use href="#hx3" x="970.20" y="458.24"/><use href="#hx3" x="977.70" y="458.24"/><use href="#hx3" x="985.21" y="458.24"/><use href="#hx3" x="992.71" y="458.24"/><use href="#hx3" x="1000.22" y="458.24"/><use href="#hx3" x="1007.72" y="458.24"/><use href="#hx3" x="1015.23" y="458.24"/><use href="#hx3" x="1022.73" y="458.24"/><use href="#hx3" x="1030.24" y="458.24"/><use href="#hx3" x="1037.74" y="458.24"/><use href="#hx3" x="1045.25" y="458.24"/><use href="#hx3" x="1052.75" y="458.24"/><use href="#hx3" x="1060.26" y="458.24"/><use href="#hx3" x="1067.76" y="458.24"/><use href="#hx3" x="1075.27" y="458.24"/><use href="#hx3" x="1082.77" y="458.24"/><use href="#hx3" x="1090.28" y="458.24"/><use href="#hx3" x="1097.78" y="458.24"/><use href="#hx3" x="1105.29" y="458.24"/><use href="#hx3" x="1112.79" y="458.24"/><use href="#hx3" x="1120.30" y="458.24"/><use href="#hx3" x="1127.80" y="458.24"/><use href="#hx3" x="1135.31" y="458.24"/><use href="#hx3" x="1142.81" y="458.24"/><use href="#hx3" x="1150.32" y="458.24"/><use href="#hx3" x="1157.82" y="458.24"/><use href="#hx3" x="1165.33" y="458.24"/><use href="#hx3" x="1172.83" y="458.24"/><use href="#hx3" x="1180.34" y="458.24"/><use href="#hx3" x="1187.84" y="458.24"/><use href="#hx3" x="1195.35" y="458.24"/><use href="#hx3" x="1202.85" y="458.24"/><use href="#hx3" x="1210.36" y="458.24"/><use href="#hx3" x="1217.86" y="458.24"/><use href="#hx3" x="1225.37" y="458.24"/><use href="#hx3" x="1232.87" y="458.24"/><use href="#hx3" x="1240.38" y="458.24"/><use href="#hx3" x="1247.88" y="458.24"/><use href="#hx3" x="1255.38" y="458.24"/><use href="#hx3" x="1262.89" y="458.24"/><use href="#hx3" x="1270.39" y="458.24"/><use href="#hx3" x="1277.90" y="458.24"/><use href="#hx3" x="1285.40" y="458.24"/><use href="#hx3" x="1292.91" y="458.24"/><use href="#hx3" x="1300.41" y="458.24"/><use href="#hx3" x="1307.92" y="458.24"/><use href="#hx3" x="831.35" y="464.77"/><use href="#hx3" x="838.86" y="464.77"/><use href="#hx3" x="846.36" y="464.77"/><use href="#hx3" x="853.87" y="464.77"/><use href="#hx3" x="861.37" y="464.77"/><use href="#hx3" x="868.88" y="464.77"/><use href="#hx3" x="876.38" y="464.77"/><use href="#hx3" x="883.88" y="464.77"/><use href="#hx3" x="891.39" y="464.77"/><use href="#hx3" x="898.89" y="464.77"/><use href="#hx3" x="906.40" y="464.77"/><use href="#hx3" x="913.90" y="464.77"/><use href="#hx3" x="921.41" y="464.77"/><use href="#hx3" x="928.91" y="464.77"/><use href="#hx3" x="936.42" y="464.77"/><use href="#hx3" x="943.93" y="464.77"/><use href="#hx3" x="951.43" y="464.77"/><use href="#hx3" x="958.94" y="464.77"/><use href="#hx3" x="966.44" y="464.77"/><use href="#hx3" x="973.95" y="464.77"/><use href="#hx3" x="981.45" y="464.77"/><use href="#hx3" x="988.96" y="464.77"/><use href="#hx3" x="996.46" y="464.77"/><use href="#hx3" x="1003.97" y="464.77"/><use href="#hx3" x="1011.47" y="464.77"/><use href="#hx3" x="1018.98" y="464.77"/><use href="#hx3" x="1026.48" y="464.77"/><use href="#hx3" x="1033.99" y="464.77"/><use href="#hx3" x="1041.49" y="464.77"/><use href="#hx3" x="1049.00" y="464.77"/><use href="#hx3" x="1056.50" y="464.77"/><use href="#hx3" x="1064.01" y="464.77"/></g></svg>
<svg style="left:0.00px;top:0.00px;" width="1600.00" height="900.00" viewBox="0 0 1600 900"><defs><path id="hx4" d="M-2.08 -19.60A4.16 4.16 0 0 1 2.08 -19.60L15.93 -11.60A4.16 4.16 0 0 1 18.01 -8.00L18.01 8.00A4.16 4.16 0 0 1 15.93 11.60L2.08 19.60A4.16 4.16 0 0 1 -2.08 19.60L-15.93 11.60A4.16 4.16 0 0 1 -18.01 8.00L-18.01 -8.00A4.16 4.16 0 0 1 -15.93 -11.60Z"/></defs><g fill="#0f9c28"><use href="#hx4" x="1353.00" y="381.80"/><use href="#hx4" x="1391.76" y="381.80"/><use href="#hx4" x="1430.52" y="381.80"/><use href="#hx4" x="1469.28" y="381.80"/><use href="#hx4" x="1508.04" y="381.80"/><use href="#hx4" x="1546.80" y="381.80"/><use href="#hx4" x="1372.38" y="415.75"/><use href="#hx4" x="1411.14" y="415.75"/><use href="#hx4" x="1449.90" y="415.75"/><use href="#hx4" x="1488.66" y="415.75"/><use href="#hx4" x="1527.42" y="415.75"/><use href="#hx4" x="1353.00" y="449.70"/><use href="#hx4" x="1391.76" y="449.70"/><use href="#hx4" x="1430.52" y="449.70"/><use href="#hx4" x="1469.28" y="449.70"/><use href="#hx4" x="1508.04" y="449.70"/></g></svg>
<div style="left:53.10px;top:499.80px;width:1520.20px;height:216.60px;background:#121221;border-radius:12px;"></div>
<svg style="left:59.00px;top:506.00px;" width="14.00" height="14.00" viewBox="0 0 14 14"><defs><linearGradient id="og" x1="0" y1="0" x2="0" y2="1"><stop offset="0" stop-color="#ee4a2c"/><stop offset="1" stop-color="#d22a12"/></linearGradient></defs><polygon points="12.3857,8.98437 9.08437,12.2857 4.41563,12.2857 1.11433,8.98437 1.11433,4.31563 4.41563,1.01433 9.08437,1.01433 12.3857,4.31563" fill="url(#og)" stroke="url(#og)" stroke-width="0.6" stroke-linejoin="round"/></svg>
<span class="t" style="left:77.57px;top:506.70px;font-size:11.67px;line-height:11.67px;color:#ebebf3;transform:scaleX(1.0302);-webkit-text-stroke:0.35px currentColor;">Problems</span>
<div style="left:55.00px;top:526.60px;width:1503.00px;height:20.60px;background:#1c1d31;"></div>
<span class="t" style="left:60.06px;top:530.20px;font-size:11.67px;line-height:11.67px;color:#d2d3e6;transform:scaleX(1.0705);-webkit-text-stroke:0.2px currentColor;">Start</span>
<svg style="left:91.90px;top:531.00px;" width="8.00" height="12.00" viewBox="-4 -6 8 12"><path d="M-2.700 -1.100L0 -4.500L2.700 -1.100Z M-2.700 1.300L0 4.700L2.700 1.300Z" fill="#c9cade"/></svg>
<svg style="left:102.90px;top:530.80px;" width="12.00" height="12.00" viewBox="-6 -6 12 12"><path d="M-3.1 -1.25L0 1.85L3.1 -1.25" fill="none" stroke="#d2d3e6" stroke-width="1.3"/></svg>
<span class="t" style="left:182.75px;top:530.20px;font-size:11.67px;line-height:11.67px;color:#d2d3e6;transform:scaleX(1.0537);-webkit-text-stroke:0.2px currentColor;">Duration</span>
<svg style="left:233.30px;top:531.00px;" width="8.00" height="12.00" viewBox="-4 -6 8 12"><path d="M-2.700 -1.100L0 -4.500L2.700 -1.100Z M-2.700 1.300L0 4.700L2.700 1.300Z" fill="#c9cade"/></svg>
<svg style="left:244.60px;top:530.80px;" width="12.00" height="12.00" viewBox="-6 -6 12 12"><path d="M-3.1 -1.25L0 1.85L3.1 -1.25" fill="none" stroke="#d2d3e6" stroke-width="1.3"/></svg>
<span class="t" style="left:268.97px;top:530.20px;font-size:11.67px;line-height:11.67px;color:#d2d3e6;transform:scaleX(1.0668);-webkit-text-stroke:0.2px currentColor;">Status</span>
<svg style="left:308.30px;top:531.00px;" width="8.00" height="12.00" viewBox="-4 -6 8 12"><path d="M-2.700 -1.100L0 -4.500L2.700 -1.100Z M-2.700 1.300L0 4.700L2.700 1.300Z" fill="#c9cade"/></svg>
<svg style="left:319.30px;top:530.80px;" width="12.00" height="12.00" viewBox="-6 -6 12 12"><path d="M-3.1 -1.25L0 1.85L3.1 -1.25" fill="none" stroke="#d2d3e6" stroke-width="1.3"/></svg>
<span class="t" style="left:343.49px;top:530.20px;font-size:11.67px;line-height:11.67px;color:#d2d3e6;transform:scaleX(1.1142);-webkit-text-stroke:0.2px currentColor;">ID</span>
<svg style="left:358.30px;top:530.80px;" width="12.00" height="12.00" viewBox="-6 -6 12 12"><path d="M-3.1 -1.25L0 1.85L3.1 -1.25" fill="none" stroke="#d2d3e6" stroke-width="1.3"/></svg>
<span class="t" style="left:438.59px;top:530.20px;font-size:11.67px;line-height:11.67px;color:#d2d3e6;transform:scaleX(1.0284);-webkit-text-stroke:0.2px currentColor;">Severity</span>
<svg style="left:486.40px;top:531.00px;" width="8.00" height="12.00" viewBox="-4 -6 8 12"><path d="M-2.700 -1.100L0 -4.500L2.700 -1.100Z M-2.700 1.300L0 4.700L2.700 1.300Z" fill="#c9cade"/></svg>
<svg style="left:498.10px;top:530.80px;" width="12.00" height="12.00" viewBox="-6 -6 12 12"><path d="M-3.1 -1.25L0 1.85L3.1 -1.25" fill="none" stroke="#d2d3e6" stroke-width="1.3"/></svg>
<span class="t" style="left:522.59px;top:530.20px;font-size:11.67px;line-height:11.67px;color:#d2d3e6;transform:scaleX(1.0122);-webkit-text-stroke:0.2px currentColor;">Name</span>
<svg style="left:558.40px;top:531.00px;" width="8.00" height="12.00" viewBox="-4 -6 8 12"><path d="M-2.700 -1.100L0 -4.500L2.700 -1.100Z M-2.700 1.300L0 4.700L2.700 1.300Z" fill="#c9cade"/></svg>
<svg style="left:569.70px;top:530.80px;" width="12.00" height="12.00" viewBox="-6 -6 12 12"><path d="M-3.1 -1.25L0 1.85L3.1 -1.25" fill="none" stroke="#d2d3e6" stroke-width="1.3"/></svg>
<span class="t" style="left:704.50px;top:530.20px;font-size:11.67px;line-height:11.67px;color:#d2d3e6;transform:scaleX(1.0618);-webkit-text-stroke:0.2px currentColor;">Affected</span>
<svg style="left:753.40px;top:531.00px;" width="8.00" height="12.00" viewBox="-4 -6 8 12"><path d="M-2.700 -1.100L0 -4.500L2.700 -1.100Z M-2.700 1.300L0 4.700L2.700 1.300Z" fill="#c9cade"/></svg>
<svg style="left:764.70px;top:530.80px;" width="12.00" height="12.00" viewBox="-6 -6 12 12"><path d="M-3.1 -1.25L0 1.85L3.1 -1.25" fill="none" stroke="#d2d3e6" stroke-width="1.3"/></svg>
<span class="t" style="left:976.90px;top:530.20px;font-size:11.67px;line-height:11.67px;color:#d2d3e6;transform:scaleX(1.0281);-webkit-text-stroke:0.2px currentColor;">Affected Count</span>
<svg style="left:1060.00px;top:531.00px;" width="9.00" height="11.00" viewBox="0 0 9 11"><path d="M4.300 2.800v5.800M1.700 6.100L4.300 8.800 6.900 6.100" fill="none" stroke="#c9cade" stroke-width="1.500"/></svg>
<svg style="left:1071.20px;top:530.80px;" width="12.00" height="12.00" viewBox="-6 -6 12 12"><path d="M-3.1 -1.25L0 1.85L3.1 -1.25" fill="none" stroke="#d2d3e6" stroke-width="1.3"/></svg>
<span class="t" style="left:1096.50px;top:530.20px;font-size:11.67px;line-height:11.67px;color:#d2d3e6;transform:scaleX(1.0253);-webkit-text-stroke:0.2px currentColor;">Affected Users</span>
<svg style="left:1179.20px;top:531.00px;" width="8.00" height="12.00" viewBox="-4 -6 8 12"><path d="M-2.700 -1.100L0 -4.500L2.700 -1.100Z M-2.700 1.300L0 4.700L2.700 1.300Z" fill="#c9cade"/></svg>
<svg style="left:1190.80px;top:530.80px;" width="12.00" height="12.00" viewBox="-6 -6 12 12"><path d="M-3.1 -1.25L0 1.85L3.1 -1.25" fill="none" stroke="#d2d3e6" stroke-width="1.3"/></svg>
<span class="t" style="left:1214.42px;top:530.20px;font-size:11.67px;line-height:11.67px;color:#d2d3e6;transform:scaleX(0.9812);-webkit-text-stroke:0.2px currentColor;">Root Cause</span>
<svg style="left:1279.20px;top:531.00px;" width="8.00" height="12.00" viewBox="-4 -6 8 12"><path d="M-2.700 -1.100L0 -4.500L2.700 -1.100Z M-2.700 1.300L0 4.700L2.700 1.300Z" fill="#c9cade"/></svg>
<svg style="left:1290.80px;top:530.80px;" width="12.00" height="12.00" viewBox="-6 -6 12 12"><path d="M-3.1 -1.25L0 1.85L3.1 -1.25" fill="none" stroke="#d2d3e6" stroke-width="1.3"/></svg>
<div style="left:264.40px;top:547.40px;width:74.80px;height:20.83px;background:#0d9c28;"></div>
<div style="left:433.30px;top:547.40px;width:84.30px;height:20.83px;background:#cf3845;"></div>
<span class="t" style="left:60.19px;top:551.75px;font-size:11.67px;line-height:11.67px;color:#e7e7f1;transform:scaleX(1.0264);">23/01/2025, 04:03:00</span>
<span class="t" style="left:222.68px;top:551.75px;font-size:11.67px;line-height:11.67px;color:#e7e7f1;transform:scaleX(1.0403);">32 min</span>
<span class="t" style="left:269.27px;top:551.75px;font-size:11.67px;line-height:11.67px;color:#f0f0f6;transform:scaleX(0.8539);">CLOSED</span>
<a class="t" style="left:343.65px;top:551.75px;font-size:11.67px;line-height:11.67px;color:#a9a7f2;transform:scaleX(1.0598);text-decoration:underline;text-decoration-thickness:1px;text-underline-offset:1.5px;">P-25011202</a>
<svg style="left:413.90px;top:551.60px;" width="12.50" height="12.50" viewBox="0 0 12.5 12.5"><path d="M5 1.600H1.600V11H11V7.600" fill="none" stroke="#a9a7f2" stroke-width="1.3"/><path d="M7.200 1.600H11V5.400M11 1.600L5.600 7" fill="none" stroke="#a9a7f2" stroke-width="1.3"/></svg>
<span class="t" style="left:438.32px;top:551.75px;font-size:11.67px;line-height:11.67px;color:#f4f4fa;transform:scaleX(0.8670);">ERROR</span>
<span class="t" style="left:522.59px;top:551.75px;font-size:11.67px;line-height:11.67px;color:#e7e7f1;transform:scaleX(1.0148);">User action duration degradation</span>
<span class="t" style="left:703.63px;top:551.75px;font-size:11.67px;line-height:11.67px;color:#e7e7f1;transform:scaleX(0.9692);">EasyTrade + 9</span>
<span class="t" style="left:1073.41px;top:551.75px;font-size:11.67px;line-height:11.67px;color:#e7e7f1;">10</span>
<span class="t" style="left:1185.02px;top:551.75px;font-size:11.67px;line-height:11.67px;color:#e7e7f1;">102</span>
<span class="t" style="left:1215.10px;top:551.75px;font-size:11.67px;line-height:11.67px;color:#e7e7f1;transform:scaleX(0.9957);">TradeManagement</span>
<div style="left:55.00px;top:568.23px;width:1503.00px;height:20.83px;background:#191a2d;"></div>
<div style="left:264.40px;top:568.23px;width:74.80px;height:20.83px;background:#0d9c28;"></div>
<div style="left:433.30px;top:568.23px;width:84.30px;height:20.83px;background:#eda848;"></div>
<span class="t" style="left:59.88px;top:572.58px;font-size:11.67px;line-height:11.67px;color:#e7e7f1;transform:scaleX(1.0292);">18/01/2025, 04:06:00</span>
<span class="t" style="left:222.58px;top:572.58px;font-size:11.67px;line-height:11.67px;color:#e7e7f1;transform:scaleX(1.0433);">29 min</span>
<span class="t" style="left:269.27px;top:572.58px;font-size:11.67px;line-height:11.67px;color:#f0f0f6;transform:scaleX(0.8539);">CLOSED</span>
<a class="t" style="left:343.65px;top:572.58px;font-size:11.67px;line-height:11.67px;color:#a9a7f2;transform:scaleX(1.0573);text-decoration:underline;text-decoration-thickness:1px;text-underline-offset:1.5px;">P-2501879</a>
<svg style="left:407.80px;top:572.43px;" width="12.50" height="12.50" viewBox="0 0 12.5 12.5"><path d="M5 1.600H1.600V11H11V7.600" fill="none" stroke="#a9a7f2" stroke-width="1.3"/><path d="M7.200 1.600H11V5.400M11 1.600L5.600 7" fill="none" stroke="#a9a7f2" stroke-width="1.3"/></svg>
<span class="t" style="left:438.65px;top:572.58px;font-size:11.67px;line-height:11.67px;color:#f4f4fa;transform:scaleX(0.9059);">SLOWDOWN</span>
<span class="t" style="left:522.59px;top:572.58px;font-size:11.67px;line-height:11.67px;color:#e7e7f1;transform:scaleX(1.0148);">User action duration degradation</span>
<span class="t" style="left:703.63px;top:572.58px;font-size:11.67px;line-height:11.67px;color:#e7e7f1;transform:scaleX(0.9692);">EasyTrade + 9</span>
<span class="t" style="left:1073.41px;top:572.58px;font-size:11.67px;line-height:11.67px;color:#e7e7f1;">10</span>
<span class="t" style="left:1184.92px;top:572.58px;font-size:11.67px;line-height:11.67px;color:#e7e7f1;">100</span>
<span class="t" style="left:1214.48px;top:572.58px;font-size:11.67px;line-height:11.67px;color:#e7e7f1;transform:scaleX(1.0246);">[eks][easytrade] NotMiningBitcoin</span>
<div style="left:264.40px;top:589.06px;width:74.80px;height:20.83px;background:#0d9c28;"></div>
<div style="left:433.30px;top:589.06px;width:84.30px;height:20.83px;background:#eda848;"></div>
<span class="t" style="left:60.19px;top:593.41px;font-size:11.67px;line-height:11.67px;color:#e7e7f1;transform:scaleX(1.0264);">21/01/2025, 04:06:00</span>
<span class="t" style="left:222.68px;top:593.41px;font-size:11.67px;line-height:11.67px;color:#e7e7f1;transform:scaleX(1.0403);">30 min</span>
<span class="t" style="left:269.27px;top:593.41px;font-size:11.67px;line-height:11.67px;color:#f0f0f6;transform:scaleX(0.8539);">CLOSED</span>
<a class="t" style="left:343.65px;top:593.41px;font-size:11.67px;line-height:11.67px;color:#a9a7f2;transform:scaleX(1.0598);text-decoration:underline;text-decoration-thickness:1px;text-underline-offset:1.5px;">P-25011083</a>
<svg style="left:413.90px;top:593.26px;" width="12.50" height="12.50" viewBox="0 0 12.5 12.5"><path d="M5 1.600H1.600V11H11V7.600" fill="none" stroke="#a9a7f2" stroke-width="1.3"/><path d="M7.200 1.600H11V5.400M11 1.600L5.600 7" fill="none" stroke="#a9a7f2" stroke-width="1.3"/></svg>
<span class="t" style="left:438.65px;top:593.41px;font-size:11.67px;line-height:11.67px;color:#f4f4fa;transform:scaleX(0.9059);">SLOWDOWN</span>
<span class="t" style="left:522.59px;top:593.41px;font-size:11.67px;line-height:11.67px;color:#e7e7f1;transform:scaleX(1.0148);">User action duration degradation</span>
<span class="t" style="left:703.63px;top:593.41px;font-size:11.67px;line-height:11.67px;color:#e7e7f1;transform:scaleX(0.9692);">EasyTrade + 9</span>
<span class="t" style="left:1073.41px;top:593.41px;font-size:11.67px;line-height:11.67px;color:#e7e7f1;">10</span>
<span class="t" style="left:1185.02px;top:593.41px;font-size:11.67px;line-height:11.67px;color:#e7e7f1;">102</span>
<span class="t" style="left:1214.48px;top:593.41px;font-size:11.67px;line-height:11.67px;color:#e7e7f1;transform:scaleX(1.0246);">[eks][easytrade] NotMiningBitcoin</span>
<div style="left:55.00px;top:609.89px;width:1503.00px;height:20.83px;background:#191a2d;"></div>
<div style="left:264.40px;top:609.89px;width:74.80px;height:20.83px;background:#0d9c28;"></div>
<div style="left:433.30px;top:609.89px;width:84.30px;height:20.83px;background:#eda848;"></div>
<span class="t" style="left:59.88px;top:614.24px;font-size:11.67px;line-height:11.67px;color:#e7e7f1;transform:scaleX(1.0292);">19/01/2025, 04:05:00</span>
<span class="t" style="left:222.68px;top:614.24px;font-size:11.67px;line-height:11.67px;color:#e7e7f1;transform:scaleX(1.0403);">31 min</span>
<span class="t" style="left:269.27px;top:614.24px;font-size:11.67px;line-height:11.67px;color:#f0f0f6;transform:scaleX(0.8539);">CLOSED</span>
<a class="t" style="left:343.65px;top:614.24px;font-size:11.67px;line-height:11.67px;color:#a9a7f2;transform:scaleX(1.0535);text-decoration:underline;text-decoration-thickness:1px;text-underline-offset:1.5px;">P-2501944</a>
<svg style="left:407.80px;top:614.09px;" width="12.50" height="12.50" viewBox="0 0 12.5 12.5"><path d="M5 1.600H1.600V11H11V7.600" fill="none" stroke="#a9a7f2" stroke-width="1.3"/><path d="M7.200 1.600H11V5.400M11 1.600L5.600 7" fill="none" stroke="#a9a7f2" stroke-width="1.3"/></svg>
<span class="t" style="left:438.65px;top:614.24px;font-size:11.67px;line-height:11.67px;color:#f4f4fa;transform:scaleX(0.9059);">SLOWDOWN</span>
<span class="t" style="left:522.59px;top:614.24px;font-size:11.67px;line-height:11.67px;color:#e7e7f1;transform:scaleX(1.0148);">User action duration degradation</span>
<span class="t" style="left:703.63px;top:614.24px;font-size:11.67px;line-height:11.67px;color:#e7e7f1;transform:scaleX(0.9639);">EasyTrade + 7</span>
<span class="t" style="left:1080.00px;top:614.24px;font-size:11.67px;line-height:11.67px;color:#e7e7f1;">8</span>
<span class="t" style="left:1185.02px;top:614.24px;font-size:11.67px;line-height:11.67px;color:#e7e7f1;">101</span>
<span class="t" style="left:1214.48px;top:614.24px;font-size:11.67px;line-height:11.67px;color:#e7e7f1;transform:scaleX(1.0246);">[eks][easytrade] NotMiningBitcoin</span>
<div style="left:264.40px;top:630.72px;width:74.80px;height:20.83px;background:#0d9c28;"></div>
<div style="left:433.30px;top:630.72px;width:84.30px;height:20.83px;background:#eda848;"></div>
<span class="t" style="left:60.19px;top:635.07px;font-size:11.67px;line-height:11.67px;color:#e7e7f1;transform:scaleX(1.0264);">20/01/2025, 04:05:00</span>
<span class="t" style="left:222.68px;top:635.07px;font-size:11.67px;line-height:11.67px;color:#e7e7f1;transform:scaleX(1.0403);">31 min</span>
<span class="t" style="left:269.27px;top:635.07px;font-size:11.67px;line-height:11.67px;color:#f0f0f6;transform:scaleX(0.8539);">CLOSED</span>
<a class="t" style="left:343.65px;top:635.07px;font-size:11.67px;line-height:11.67px;color:#a9a7f2;transform:scaleX(1.0598);text-decoration:underline;text-decoration-thickness:1px;text-underline-offset:1.5px;">P-25011018</a>
<svg style="left:413.90px;top:634.92px;" width="12.50" height="12.50" viewBox="0 0 12.5 12.5"><path d="M5 1.600H1.600V11H11V7.600" fill="none" stroke="#a9a7f2" stroke-width="1.3"/><path d="M7.200 1.600H11V5.400M11 1.600L5.600 7" fill="none" stroke="#a9a7f2" stroke-width="1.3"/></svg>
<span class="t" style="left:438.65px;top:635.07px;font-size:11.67px;line-height:11.67px;color:#f4f4fa;transform:scaleX(0.9059);">SLOWDOWN</span>
<span class="t" style="left:522.59px;top:635.07px;font-size:11.67px;line-height:11.67px;color:#e7e7f1;transform:scaleX(1.0148);">User action duration degradation</span>
<span class="t" style="left:703.63px;top:635.07px;font-size:11.67px;line-height:11.67px;color:#e7e7f1;transform:scaleX(0.9639);">EasyTrade + 7</span>
<span class="t" style="left:1080.00px;top:635.07px;font-size:11.67px;line-height:11.67px;color:#e7e7f1;">8</span>
<span class="t" style="left:1184.82px;top:635.07px;font-size:11.67px;line-height:11.67px;color:#e7e7f1;">104</span>
<span class="t" style="left:1214.48px;top:635.07px;font-size:11.67px;line-height:11.67px;color:#e7e7f1;transform:scaleX(1.0246);">[eks][easytrade] NotMiningBitcoin</span>
<div style="left:55.00px;top:651.55px;width:1503.00px;height:20.83px;background:#191a2d;"></div>
<div style="left:264.40px;top:651.55px;width:74.80px;height:20.83px;background:#0d9c28;"></div>
<div style="left:433.30px;top:651.55px;width:84.30px;height:20.83px;background:#eda848;"></div>
<span class="t" style="left:60.19px;top:655.90px;font-size:11.67px;line-height:11.67px;color:#e7e7f1;transform:scaleX(1.0264);">22/01/2025, 04:06:00</span>
<span class="t" style="left:222.68px;top:655.90px;font-size:11.67px;line-height:11.67px;color:#e7e7f1;transform:scaleX(1.0403);">30 min</span>
<span class="t" style="left:269.27px;top:655.90px;font-size:11.67px;line-height:11.67px;color:#f0f0f6;transform:scaleX(0.8539);">CLOSED</span>
<a class="t" style="left:343.63px;top:655.90px;font-size:11.67px;line-height:11.67px;color:#a9a7f2;transform:scaleX(1.0733);text-decoration:underline;text-decoration-thickness:1px;text-underline-offset:1.5px;">P-25011150</a>
<svg style="left:413.90px;top:655.75px;" width="12.50" height="12.50" viewBox="0 0 12.5 12.5"><path d="M5 1.600H1.600V11H11V7.600" fill="none" stroke="#a9a7f2" stroke-width="1.3"/><path d="M7.200 1.600H11V5.400M11 1.600L5.600 7" fill="none" stroke="#a9a7f2" stroke-width="1.3"/></svg>
<span class="t" style="left:438.65px;top:655.90px;font-size:11.67px;line-height:11.67px;color:#f4f4fa;transform:scaleX(0.9059);">SLOWDOWN</span>
<span class="t" style="left:522.59px;top:655.90px;font-size:11.67px;line-height:11.67px;color:#e7e7f1;transform:scaleX(1.0148);">User action duration degradation</span>
<span class="t" style="left:703.63px;top:655.90px;font-size:11.67px;line-height:11.67px;color:#e7e7f1;transform:scaleX(0.9639);">EasyTrade + 7</span>
<span class="t" style="left:1080.00px;top:655.90px;font-size:11.67px;line-height:11.67px;color:#e7e7f1;">8</span>
<span class="t" style="left:1191.51px;top:655.90px;font-size:11.67px;line-height:11.67px;color:#e7e7f1;">98</span>
<span class="t" style="left:1214.48px;top:655.90px;font-size:11.67px;line-height:11.67px;color:#e7e7f1;transform:scaleX(1.0246);">[eks][easytrade] NotMiningBitcoin</span>
<div style="left:264.40px;top:672.38px;width:74.80px;height:20.83px;background:#0d9c28;"></div>
<div style="left:433.30px;top:672.38px;width:84.30px;height:20.83px;background:#eda848;"></div>
<span class="t" style="left:60.19px;top:676.73px;font-size:11.67px;line-height:11.67px;color:#e7e7f1;transform:scaleX(1.0264);">24/01/2025, 04:05:00</span>
<span class="t" style="left:222.68px;top:676.73px;font-size:11.67px;line-height:11.67px;color:#e7e7f1;transform:scaleX(1.0403);">31 min</span>
<span class="t" style="left:269.27px;top:676.73px;font-size:11.67px;line-height:11.67px;color:#f0f0f6;transform:scaleX(0.8539);">CLOSED</span>
<a class="t" style="left:343.65px;top:676.73px;font-size:11.67px;line-height:11.67px;color:#a9a7f2;transform:scaleX(1.0598);text-decoration:underline;text-decoration-thickness:1px;text-underline-offset:1.5px;">P-25011256</a>
<svg style="left:413.90px;top:676.58px;" width="12.50" height="12.50" viewBox="0 0 12.5 12.5"><path d="M5 1.600H1.600V11H11V7.600" fill="none" stroke="#a9a7f2" stroke-width="1.3"/><path d="M7.200 1.600H11V5.400M11 1.600L5.600 7" fill="none" stroke="#a9a7f2" stroke-width="1.3"/></svg>
<span class="t" style="left:438.65px;top:676.73px;font-size:11.67px;line-height:11.67px;color:#f4f4fa;transform:scaleX(0.9059);">SLOWDOWN</span>
<span class="t" style="left:522.59px;top:676.73px;font-size:11.67px;line-height:11.67px;color:#e7e7f1;transform:scaleX(1.0148);">User action duration degradation</span>
<span class="t" style="left:703.63px;top:676.73px;font-size:11.67px;line-height:11.67px;color:#e7e7f1;transform:scaleX(0.9639);">EasyTrade + 7</span>
<span class="t" style="left:1080.00px;top:676.73px;font-size:11.67px;line-height:11.67px;color:#e7e7f1;">8</span>
<span class="t" style="left:1185.02px;top:676.73px;font-size:11.67px;line-height:11.67px;color:#e7e7f1;">105</span>
<span class="t" style="left:1214.48px;top:676.73px;font-size:11.67px;line-height:11.67px;color:#e7e7f1;transform:scaleX(1.0246);">[eks][easytrade] NotMiningBitcoin</span>
<div style="left:55.00px;top:693.21px;width:1503.00px;height:20.83px;background:#191a2d;"></div>
<div style="left:264.40px;top:693.21px;width:74.80px;height:20.83px;background:#0d9c28;"></div>
<div style="left:433.30px;top:693.21px;width:84.30px;height:20.83px;background:#b63cd2;"></div>
<span class="t" style="left:60.19px;top:697.56px;font-size:11.67px;line-height:11.67px;color:#e7e7f1;transform:scaleX(1.0273);">20/01/2025, 12:52:13</span>
<span class="t" style="left:222.26px;top:697.56px;font-size:11.67px;line-height:11.67px;color:#e7e7f1;transform:scaleX(1.0527);">13 min</span>
<span class="t" style="left:269.27px;top:697.56px;font-size:11.67px;line-height:11.67px;color:#f0f0f6;transform:scaleX(0.8539);">CLOSED</span>
<a class="t" style="left:343.65px;top:697.56px;font-size:11.67px;line-height:11.67px;color:#a9a7f2;transform:scaleX(1.0581);text-decoration:underline;text-decoration-thickness:1px;text-underline-offset:1.5px;">P-25011040</a>
<svg style="left:413.90px;top:697.41px;" width="12.50" height="12.50" viewBox="0 0 12.5 12.5"><path d="M5 1.600H1.600V11H11V7.600" fill="none" stroke="#a9a7f2" stroke-width="1.3"/><path d="M7.200 1.600H11V5.400M11 1.600L5.600 7" fill="none" stroke="#a9a7f2" stroke-width="1.3"/></svg>
<span class="t" style="left:439.10px;top:697.56px;font-size:11.67px;line-height:11.67px;color:#f4f4fa;transform:scaleX(0.9810);">AVAILABILITY</span>
<span class="t" style="left:522.58px;top:697.56px;font-size:11.67px;line-height:11.67px;color:#e7e7f1;transform:scaleX(1.0167);">Browser monitor global outage</span>
<span class="t" style="left:703.70px;top:697.56px;font-size:11.67px;line-height:11.67px;color:#e7e7f1;">[eks][prod] hipstershop.CurrencyService + 4</span>
<span class="t" style="left:1080.00px;top:697.56px;font-size:11.67px;line-height:11.67px;color:#e7e7f1;">5</span>
<span class="t" style="left:1191.51px;top:697.56px;font-size:11.67px;line-height:11.67px;color:#e7e7f1;">45</span>
<span class="t" style="left:1214.50px;top:697.56px;font-size:11.67px;line-height:11.67px;color:#e7e7f1;transform:scaleX(1.0061);">[eks][prod] hipstershop.CurrencyService</span>
<svg style="left:0.00px;top:0.00px;" width="1600.00" height="900.00" viewBox="0 0 1600 900"><path d="M55.0 547.4H1558.0" stroke="#3a3b55" stroke-width="1"/><path d="M178.6 530.2V543" stroke="#3a3b55" stroke-width="0.9"/><path d="M264.3 530.2V543" stroke="#3a3b55" stroke-width="0.9"/><path d="M339.1 530.2V543" stroke="#3a3b55" stroke-width="0.9"/><path d="M433.3 530.2V543" stroke="#3a3b55" stroke-width="0.9"/><path d="M517.8 530.2V543" stroke="#3a3b55" stroke-width="0.9"/><path d="M699 530.2V543" stroke="#3a3b55" stroke-width="0.9"/><path d="M972 530.2V543" stroke="#3a3b55" stroke-width="0.9"/><path d="M1091.2 530.2V543" stroke="#3a3b55" stroke-width="0.9"/><path d="M1210.4 530.2V543" stroke="#3a3b55" stroke-width="0.9"/><path d="M55.0 568.23H1558.0" stroke="#33344e" stroke-width="1"/><path d="M178.6 551.80V564.20" stroke="#34354e" stroke-width="0.9"/><path d="M699 551.80V564.20" stroke="#34354e" stroke-width="0.9"/><path d="M972 551.80V564.20" stroke="#34354e" stroke-width="0.9"/><path d="M1091.2 551.80V564.20" stroke="#34354e" stroke-width="0.9"/><path d="M1210.4 551.80V564.20" stroke="#34354e" stroke-width="0.9"/><path d="M55.0 589.06H1558.0" stroke="#33344e" stroke-width="1"/><path d="M178.6 572.63V585.03" stroke="#34354e" stroke-width="0.9"/><path d="M699 572.63V585.03" stroke="#34354e" stroke-width="0.9"/><path d="M972 572.63V585.03" stroke="#34354e" stroke-width="0.9"/><path d="M1091.2 572.63V585.03" stroke="#34354e" stroke-width="0.9"/><path d="M1210.4 572.63V585.03" stroke="#34354e" stroke-width="0.9"/><path d="M55.0 609.89H1558.0" stroke="#33344e" stroke-width="1"/><path d="M178.6 593.46V605.86" stroke="#34354e" stroke-width="0.9"/><path d="M699 593.46V605.86" stroke="#34354e" stroke-width="0.9"/><path d="M972 593.46V605.86" stroke="#34354e" stroke-width="0.9"/><path d="M1091.2 593.46V605.86" stroke="#34354e" stroke-width="0.9"/><path d="M1210.4 593.46V605.86" stroke="#34354e" stroke-width="0.9"/><path d="M55.0 630.72H1558.0" stroke="#33344e" stroke-width="1"/><path d="M178.6 614.29V626.69" stroke="#34354e" stroke-width="0.9"/><path d="M699 614.29V626.69" stroke="#34354e" stroke-width="0.9"/><path d="M972 614.29V626.69" stroke="#34354e" stroke-width="0.9"/><path d="M1091.2 614.29V626.69" stroke="#34354e" stroke-width="0.9"/><path d="M1210.4 614.29V626.69" stroke="#34354e" stroke-width="0.9"/><path d="M55.0 651.55H1558.0" stroke="#33344e" stroke-width="1"/><path d="M178.6 635.12V647.52" stroke="#34354e" stroke-width="0.9"/><path d="M699 635.12V647.52" stroke="#34354e" stroke-width="0.9"/><path d="M972 635.12V647.52" stroke="#34354e" stroke-width="0.9"/><path d="M1091.2 635.12V647.52" stroke="#34354e" stroke-width="0.9"/><path d="M1210.4 635.12V647.52" stroke="#34354e" stroke-width="0.9"/><path d="M55.0 672.38H1558.0" stroke="#33344e" stroke-width="1"/><path d="M178.6 655.95V668.35" stroke="#34354e" stroke-width="0.9"/><path d="M699 655.95V668.35" stroke="#34354e" stroke-width="0.9"/><path d="M972 655.95V668.35" stroke="#34354e" stroke-width="0.9"/><path d="M1091.2 655.95V668.35" stroke="#34354e" stroke-width="0.9"/><path d="M1210.4 655.95V668.35" stroke="#34354e" stroke-width="0.9"/><path d="M55.0 693.21H1558.0" stroke="#33344e" stroke-width="1"/><path d="M178.6 676.78V689.18" stroke="#34354e" stroke-width="0.9"/><path d="M699 676.78V689.18" stroke="#34354e" stroke-width="0.9"/><path d="M972 676.78V689.18" stroke="#34354e" stroke-width="0.9"/><path d="M1091.2 676.78V689.18" stroke="#34354e" stroke-width="0.9"/><path d="M1210.4 676.78V689.18" stroke="#34354e" stroke-width="0.9"/><path d="M55.0 714.04H1558.0" stroke="#33344e" stroke-width="1"/><path d="M178.6 697.61V710.01" stroke="#34354e" stroke-width="0.9"/><path d="M699 697.61V710.01" stroke="#34354e" stroke-width="0.9"/><path d="M972 697.61V710.01" stroke="#34354e" stroke-width="0.9"/><path d="M1091.2 697.61V710.01" stroke="#34354e" stroke-width="0.9"/><path d="M1210.4 697.61V710.01" stroke="#34354e" stroke-width="0.9"/></svg>
<div style="left:1562.00px;top:531.00px;width:5.60px;height:18.00px;background:#3b3c54;border-radius:2.8px;"></div>
<div style="left:0;top:0;width:1600px;height:886.6px;overflow:hidden;">
<div style="left:53.10px;top:724.90px;width:500.90px;height:200.00px;background:#121221;border-radius:12px;"></div>
<div style="left:562.40px;top:724.90px;width:500.90px;height:200.00px;background:#121221;border-radius:12px;"></div>
<div style="left:1072.40px;top:724.90px;width:500.90px;height:200.00px;background:#121221;border-radius:12px;"></div>
<span class="t" style="left:77.51px;top:731.90px;font-size:11.67px;line-height:11.67px;color:#ebebf3;transform:scaleX(0.9926);-webkit-text-stroke:0.35px currentColor;">Response Time</span>
<span class="t" style="left:586.57px;top:731.90px;font-size:11.67px;line-height:11.67px;color:#ebebf3;transform:scaleX(1.0279);-webkit-text-stroke:0.35px currentColor;">Failure Rate</span>
<span class="t" style="left:1096.89px;top:731.90px;font-size:11.67px;line-height:11.67px;color:#ebebf3;transform:scaleX(1.0330);-webkit-text-stroke:0.35px currentColor;">Throughput</span>
<svg style="left:60.00px;top:730.00px;" width="12.00" height="14.00" viewBox="0 0 12 14"><rect x="4.700" y="1.700" width="2.400" height="2.400" fill="#66748c"/><path d="M8.900 3.900l1.300 1.100" stroke="#7888a0" stroke-width="1.100"/><circle cx="5.900" cy="8.500" r="4.500" fill="#f0f0f1" stroke="#d2d4da" stroke-width="0.600"/><path d="M5.500 5.600v3.400M4.400 8.200h3" stroke="#e0b0a0" stroke-width="0.500" fill="none"/></svg>
<svg style="left:568.00px;top:732.00px;" width="13.00" height="12.00" viewBox="0 0 13 12"><defs><linearGradient id="fg" x1="0" y1="0" x2="1" y2="0"><stop offset="0" stop-color="#b80c10"/><stop offset="1" stop-color="#ee3434"/></linearGradient></defs><path d="M1.400 1.200v8.900" stroke="#343c4c" stroke-width="0.900"/><path d="M1.900 1.750L11.800 4.400 1.900 8.500Z" fill="url(#fg)"/></svg>
<svg style="left:1079.00px;top:731.00px;" width="12.00" height="13.00" viewBox="0 0 12 13"><rect x="0.900" y="0.400" width="10.100" height="11.600" fill="#dfe4e8"/><path d="M1 10.600l2.300-2.600 3.500 0.500 1.700-3.500 2.300-3.300" fill="none" stroke="#d93434" stroke-width="1.200" stroke-linejoin="round"/></svg>
<svg style="left:0.00px;top:0.00px;" width="1600.00" height="900.00" viewBox="0 0 1600 900"><path d="M121.4 784.1H542" stroke="#3d3e58" stroke-width="0.9"/><path d="M121.4 829.4H542" stroke="#3d3e58" stroke-width="0.9"/><path d="M121.4 874.2H542" stroke="#3d3e58" stroke-width="0.9"/><path d="M210.7 757.6V900" stroke="#3d3e58" stroke-width="0.9"/><path d="M330.2 757.6V900" stroke="#3d3e58" stroke-width="0.9"/><path d="M449.6 757.6V900" stroke="#3d3e58" stroke-width="0.9"/><path d="M121.4 757.6V900" stroke="#74758e" stroke-width="0.9"/></svg>
<span class="t" style="left:84.58px;top:783.70px;font-size:10px;line-height:10px;color:#b7b8cc;transform:scaleX(1.0396);">25 min</span>
<span class="t" style="left:76.79px;top:825.30px;font-size:10px;line-height:10px;color:#b7b8cc;transform:scaleX(1.0164);">16.7 min</span>
<span class="t" style="left:82.19px;top:869.70px;font-size:10px;line-height:10px;color:#b7b8cc;transform:scaleX(1.0241);">8.3 min</span>
<svg style="left:0.00px;top:0.00px;" width="1600.00" height="900.00" viewBox="0 0 1600 900"><path d="M122.4 812.1C122.8 811.9 124.8 811.1 125.6 810.4C126.4 809.7 127.2 808.8 127.9 807.0C128.5 805.2 129.7 798.8 130.3 797.6C130.9 796.4 131.6 796.1 132.2 798.5C132.8 800.9 134.0 813.7 134.7 814.6C135.3 815.4 136.2 805.4 136.9 804.6C137.6 803.8 139.0 808.4 139.8 808.9C140.6 809.4 141.8 808.9 142.6 808.0C143.4 807.1 144.6 803.4 145.4 802.3C146.2 801.3 147.5 800.4 148.3 800.4C149.1 800.4 150.5 801.6 151.1 802.3C151.7 803.0 152.1 805.6 152.6 805.1C153.1 804.7 153.8 800.0 154.5 799.1C155.2 798.2 156.6 797.1 157.3 798.5C158.1 800.0 159.3 809.4 160.0 809.5C160.7 809.5 161.8 799.6 162.4 798.9C163.0 798.2 163.7 804.4 164.3 804.6C165.0 804.7 166.4 799.1 167.2 800.0C168.0 801.0 169.3 810.4 170.0 811.4C170.7 812.4 171.8 808.8 172.4 807.0C173.1 805.2 174.1 801.0 174.7 798.5C175.4 796.1 176.5 789.0 177.2 789.6C177.9 790.3 179.0 802.7 179.6 803.3C180.3 803.8 181.2 794.7 181.9 793.8C182.6 792.9 183.7 796.6 184.5 796.6C185.4 796.6 186.9 794.6 187.9 793.8C189.0 793.0 191.2 790.8 192.1 791.0C193.0 791.1 193.9 792.6 194.6 794.8C195.2 796.9 196.3 806.4 197.0 806.1C197.7 805.8 198.9 793.7 199.7 792.9C200.4 792.0 201.4 799.8 202.1 800.0C202.9 800.3 204.2 795.1 205.0 794.8C205.7 794.4 206.6 799.3 207.2 797.6C207.9 795.9 209.0 785.6 209.7 782.5C210.4 779.4 211.4 773.6 212.1 775.5C212.8 777.3 214.1 793.1 214.8 795.7C215.5 798.3 216.6 794.7 217.2 793.8C217.9 793.0 218.8 788.6 219.5 789.6C220.2 790.7 221.2 800.8 222.0 801.0C222.7 801.2 224.1 790.7 224.8 791.0C225.5 791.3 226.6 800.6 227.2 803.3C227.9 805.9 228.9 809.6 229.5 809.9C230.2 810.1 231.1 807.9 231.8 805.1C232.5 802.4 233.9 790.4 234.6 790.4C235.4 790.4 236.4 803.6 237.1 805.1C237.8 806.7 238.8 803.3 239.5 801.4C240.3 799.5 242.0 792.9 242.4 791.5L243.1 835.4L243.9 892.1L244.3 929.9" fill="none" stroke="#c53fd8" stroke-width="1.500" stroke-linejoin="round"/><path d="M329.200 900L330.600 866Q331.500 858 332.200 866L333.700 900" fill="none" stroke="#c53fd8" stroke-width="1.500"/><path d="M357.400 900L358.500 856Q359.100 847 359.700 856L360.900 900" fill="none" stroke="#a487ea" stroke-width="1.500"/><path d="M437.400 900L438.200 878Q439.200 871 440.600 876L444.200 890" fill="none" stroke="#c53fd8" stroke-width="1.500"/></svg>
<div style="left:69.700px;top:1020px;width:0;height:0;transform:rotate(-90deg);">
<span class="t" style="left:113.80px;top:-8.00px;font-size:10px;line-height:10px;color:#b7b8cc;">Service request response time</span>
</div>
<svg style="left:0.00px;top:0.00px;" width="1600.00" height="900.00" viewBox="0 0 1600 900"><path d="M612.8 757.5H1051" stroke="#3d3e58" stroke-width="0.9"/><path d="M612.8 789.6H1051" stroke="#3d3e58" stroke-width="0.9"/><path d="M612.8 821.9H1051" stroke="#3d3e58" stroke-width="0.9"/><path d="M612.8 854.2H1051" stroke="#3d3e58" stroke-width="0.9"/><path d="M612.8 886.4H1051" stroke="#3d3e58" stroke-width="0.9"/><path d="M706.1 757.5V900" stroke="#3d3e58" stroke-width="0.9"/><path d="M830.5 757.5V900" stroke="#3d3e58" stroke-width="0.9"/><path d="M954.7 757.5V900" stroke="#3d3e58" stroke-width="0.9"/><path d="M612.8 757.5V900" stroke="#74758e" stroke-width="0.9"/></svg>
<span class="t" style="left:568.92px;top:757.30px;font-size:10px;line-height:10px;color:#b7b8cc;transform:scaleX(0.9692);">100.00%</span>
<span class="t" style="left:574.72px;top:785.20px;font-size:10px;line-height:10px;color:#b7b8cc;transform:scaleX(0.9571);">80.00%</span>
<span class="t" style="left:574.62px;top:817.50px;font-size:10px;line-height:10px;color:#b7b8cc;transform:scaleX(0.9600);">60.00%</span>
<span class="t" style="left:574.91px;top:849.80px;font-size:10px;line-height:10px;color:#b7b8cc;transform:scaleX(0.9514);">40.00%</span>
<span class="t" style="left:574.62px;top:882.00px;font-size:10px;line-height:10px;color:#b7b8cc;transform:scaleX(0.9600);">20.00%</span>
<svg style="left:0.00px;top:0.00px;" width="1600.00" height="900.00" viewBox="0 0 1600 900"><path d="M613.5 892.9L616.1 881.9L618.7 874.9L621.3 880.8L623.9 886.3L626.5 878.3L629.1 886.2L631.7 885.2L634.3 892.8L636.9 890.6L639.5 881.3L642.1 883.4L644.7 891.2L647.3 880.6L649.9 892.9L652.5 891.4L655.1 890.9L657.7 882.1L660.3 879.6L662.9 875.6L665.5 883.0L668.1 888.6L670.7 892.9L673.3 887.9L675.9 880.6L678.5 880.5L681.1 892.2L683.7 888.8L686.3 891.4L688.9 877.1L691.5 891.3L694.1 888.8L696.7 883.4L699.3 883.5L701.9 888.2L704.5 884.2L707.1 886.4L709.7 880.3L712.3 891.5L714.9 883.6L717.5 890.3L720.1 882.2L722.7 879.6L725.3 890.2L727.9 892.5L730.5 883.9L733.1 886.7L735.7 881.0L738.3 882.4L740.9 881.6L743.5 884.1L746.1 881.8L748.7 892.2L751.3 884.1L753.9 889.3L756.5 885.1L759.1 880.4L761.7 877.7L764.3 881.9L766.9 889.5L769.5 882.1L772.1 891.3L774.7 882.3L777.3 880.9L779.9 889.1L782.5 891.1L785.1 888.5L787.7 889.0L790.3 890.5L792.9 882.2L795.5 884.2L798.1 892.0L800.7 887.1L803.3 892.5L805.9 886.1L808.5 881.7L811.1 875.5L813.7 877.2L816.3 892.2L818.9 883.1L821.5 886.1L824.1 892.7L826.7 884.3L829.3 881.9L831.9 891.7L834.5 881.7L837.1 887.7L839.7 881.1L842.3 885.2L844.9 888.5L847.5 875.8L850.1 889.1L852.7 878.4L855.3 892.8L857.9 880.8L860.5 877.6L863.1 880.1L865.7 884.1L868.3 887.1L870.9 884.1L873.5 890.6L876.1 874.7L878.7 888.4L881.3 878.3L883.9 891.4L886.5 877.9L889.1 878.0L891.7 881.2L894.3 892.4L896.9 880.1L899.5 886.9L902.1 880.3L904.7 875.3L907.3 881.0L909.9 887.3L912.5 886.4L915.1 879.6L917.7 879.6L920.3 889.4L922.9 881.9L925.5 885.9L928.1 888.5L930.7 883.7L933.3 882.0L935.9 892.9L938.5 883.7L941.1 890.1L943.7 881.2L946.3 875.0L948.9 877.5L951.5 880.3L954.1 877.9L956.7 890.4L959.3 880.7L961.9 881.8L964.5 881.7L967.1 884.3L969.7 889.4L972.3 884.3L974.9 881.3L977.5 876.0L980.1 882.0L982.7 882.0L985.3 875.6L987.9 876.1L990.5 874.6L993.1 880.7L995.7 889.2L998.3 890.3L1000.9 892.0L1003.5 881.1L1006.1 886.2L1008.7 890.1L1011.3 877.8L1013.9 890.0L1016.5 891.5L1019.1 882.1L1021.7 891.7L1024.3 891.6L1026.9 892.1L1029.5 890.5L1032.1 879.7L1034.7 881.3L1037.3 883.7L1039.9 890.0L1042.5 890.4L1045.1 879.5L1047.7 891.0L1050.3 889.3" fill="none" stroke="#e1559f" stroke-width="1.500" stroke-linejoin="round"/><path d="M613.5 878.9L616.6 878.4L619.7 879.0L622.8 878.3L625.9 878.8L629.0 878.7L632.1 878.1L635.2 878.6L638.3 878.1L641.4 878.5L644.5 878.0L647.6 877.8L650.7 878.3L653.8 879.3L656.9 878.6L660.0 878.4L663.1 879.0L666.2 879.9L669.3 879.7L672.4 879.3L675.5 880.1L678.6 878.9L681.7 879.7L684.8 879.1L687.9 878.5L691.0 878.1L694.1 878.3L697.2 879.3L700.3 878.7L703.4 879.0L706.5 879.4L709.6 879.1L712.7 879.2L715.8 878.4L718.9 878.0L722.0 878.0L725.1 878.9L728.2 878.9L731.3 878.7L734.4 879.1L737.5 879.0L740.6 878.8L743.7 879.5L746.8 879.7L749.9 879.0L753.0 879.2L756.1 879.3L759.2 879.9L762.3 880.0L765.4 879.3L768.5 880.1L771.6 879.0L774.7 878.9L777.8 879.5L780.9 878.8L784.0 878.9L787.1 878.2L790.2 879.0L793.3 879.5L796.4 879.5L799.5 880.1L802.6 879.3L805.7 879.6L808.8 879.6L811.9 879.6L815.0 879.3L818.1 879.9L821.2 880.4L824.3 879.8L827.4 879.8L830.5 878.8L833.6 879.3L836.7 879.5L839.8 880.3L842.9 880.4L846.0 879.5L849.1 879.1L852.2 879.5L855.3 878.5L858.4 878.7L861.5 878.3L864.6 878.0L867.7 877.8L870.8 878.9L873.9 878.4L877.0 878.3L880.1 878.5L883.2 879.5L886.3 878.6L889.4 878.8L892.5 879.1L895.6 879.8L898.7 880.1L901.8 880.4L904.9 879.4L908.0 879.2L911.1 878.9L914.2 879.7L917.3 880.3L920.4 879.2L923.5 878.6L926.6 878.4L929.7 878.3L932.8 878.7L935.9 879.1L939.0 878.7L942.1 878.0L945.2 878.4L948.3 878.5L951.4 879.0L954.5 879.9L957.6 879.9L960.7 879.6L963.8 879.6L966.9 879.8L970.0 878.7L973.1 879.6L976.2 879.9L979.3 880.3L982.4 880.3L985.5 879.6L988.6 879.3L991.7 878.5L994.8 879.1L997.9 878.3L1001.0 877.9L1004.1 878.0L1007.2 877.9L1010.3 878.2L1013.4 877.9L1016.5 877.6L1019.6 877.7L1022.7 877.6L1025.8 878.1L1028.9 877.7L1032.0 879.1L1035.1 879.3L1038.2 878.6L1041.3 878.4L1044.4 878.5L1047.5 878.6L1050.6 878.2" fill="none" stroke="#d9414e" stroke-width="1.700" stroke-linejoin="round"/></svg>
<svg style="left:0.00px;top:0.00px;" width="1600.00" height="900.00" viewBox="0 0 1600 900"><path d="M1123.5 757.3H1561" stroke="#3d3e58" stroke-width="0.9"/><path d="M1123.5 811.4H1561" stroke="#3d3e58" stroke-width="0.9"/><path d="M1123.5 865.5H1561" stroke="#3d3e58" stroke-width="0.9"/><path d="M1216.3 757.3V900" stroke="#3d3e58" stroke-width="0.9"/><path d="M1340.5 757.3V900" stroke="#3d3e58" stroke-width="0.9"/><path d="M1465.5 757.3V900" stroke="#3d3e58" stroke-width="0.9"/><path d="M1123.5 757.3V900" stroke="#74758e" stroke-width="0.9"/></svg>
<span class="t" style="left:1096.22px;top:756.90px;font-size:10px;line-height:10px;color:#b7b8cc;">600k</span>
<span class="t" style="left:1096.22px;top:807.10px;font-size:10px;line-height:10px;color:#b7b8cc;">400k</span>
<span class="t" style="left:1096.22px;top:861.20px;font-size:10px;line-height:10px;color:#b7b8cc;">200k</span>
<div style="left:1088.600px;top:1000px;width:0;height:0;transform:rotate(-90deg);">
<span class="t" style="left:114.26px;top:-8.00px;font-size:10px;line-height:10px;color:#b7b8cc;">Service request count</span>
</div>
<svg style="left:0.00px;top:0.00px;" width="1600.00" height="900.00" viewBox="0 0 1600 900"><path d="M1123.5 895L1123.5 859.1L1124.8 859.1L1126.1 859.0L1127.4 858.9L1128.7 858.8L1130 858.8L1131.3 858.8L1132.6 858.8L1133.9 858.8L1135.2 858.8L1136.5 858.8L1137.8 858.8L1139.1 858.9L1140.4 858.8L1141.7 858.8L1143 858.8L1144.3 858.7L1145.6 858.7L1146.9 858.7L1148.2 858.7L1149.5 858.6L1150.8 859.9L1152.1 859.9L1153.4 858.4L1154.7 858.4L1156 858.5L1157.3 858.5L1158.6 858.4L1159.9 858.3L1161.2 858.2L1162.5 858.2L1163.8 858.3L1165.1 858.3L1166.4 858.4L1167.7 858.5L1169 858.8L1170.3 859.2L1171.6 859.5L1172.9 859.8L1174.2 859.9L1175.5 859.8L1176.8 859.7L1178.1 859.5L1179.4 859.4L1180.7 859.3L1182 859.2L1183.3 859.1L1184.6 859.0L1185.9 858.8L1187.2 858.5L1188.5 858.3L1189.8 858.1L1191.1 857.9L1192.4 857.8L1193.7 857.8L1195 857.9L1196.3 858.0L1197.6 858.2L1198.9 858.3L1200.2 858.5L1201.5 858.6L1202.8 858.6L1204.1 858.6L1205.4 858.5L1206.7 858.4L1208 858.4L1209.3 858.3L1210.6 858.4L1211.9 858.5L1213.2 858.7L1214.5 858.9L1215.8 859.1L1217.1 859.2L1218.4 859.3L1219.7 859.3L1221 859.3L1222.3 859.2L1223.6 859.2L1224.9 859.2L1226.2 859.2L1227.5 859.2L1228.8 859.2L1230.1 859.3L1231.4 859.3L1232.7 859.3L1234 859.3L1235.3 859.3L1236.6 859.2L1237.9 859.2L1239.2 859.1L1240.5 859.0L1241.8 858.9L1243.1 858.9L1244.4 858.8L1245.7 858.8L1247 858.7L1248.3 860.4L1249.6 860.6L1250.9 858.8L1252.2 858.8L1253.5 858.9L1254.8 858.9L1256.1 859.0L1257.4 859.1L1258.7 859.2L1260 859.3L1261.3 859.4L1262.6 859.4L1263.9 859.4L1265.2 859.3L1266.5 859.2L1267.8 859.1L1269.1 859.1L1270.4 859.0L1271.7 859.0L1273 859.1L1274.3 859.1L1275.6 859.1L1276.9 859.0L1278.2 859.0L1279.5 858.9L1280.8 858.9L1282.1 858.9L1283.4 858.9L1284.7 858.8L1286 858.7L1287.3 858.6L1288.6 858.5L1289.9 858.3L1291.2 858.3L1292.5 858.3L1293.8 858.3L1295.1 858.4L1296.4 858.4L1297.7 858.5L1299 858.5L1300.3 858.6L1301.6 858.7L1302.9 859.0L1304.2 859.1L1305.5 859.3L1306.8 859.3L1308.1 859.3L1309.4 859.3L1310.7 859.3L1312 859.2L1313.3 859.1L1314.6 859.0L1315.9 858.9L1317.2 859.1L1318.5 859.5L1319.8 860.0L1321.1 860.4L1322.4 860.9L1323.7 861.3L1325 861.7L1326.3 862.1L1327.6 862.0L1328.9 861.8L1330.2 861.6L1331.5 861.4L1332.8 861.2L1334.1 861.2L1335.4 861.7L1336.7 863.3L1338 863.8L1339.3 862.5L1340.6 861.8L1341.9 861.9L1343.2 861.9L1344.5 861.9L1345.8 861.8L1347.1 861.6L1348.4 861.6L1349.7 861.7L1351 861.9L1352.3 862.1L1353.6 862.2L1354.9 862.1L1356.2 861.9L1357.5 861.6L1358.8 861.4L1360.1 861.3L1361.4 861.1L1362.7 861.0L1364 861.0L1365.3 861.1L1366.6 861.2L1367.9 861.4L1368.3 861.4L1369.2 858.7L1370.5 854.9L1371.8 851.1L1372.2 849.3L1373.1 849.3L1374.4 849.3L1375.7 849.6L1377 849.9L1378.3 850.2L1379.6 850.4L1380.9 850.5L1382.2 850.6L1383.5 850.8L1384.8 850.0L1386.1 849.4L1387.4 849.6L1388.7 849.7L1390 849.8L1391.3 850.1L1392.6 850.6L1393.9 851.1L1395.2 851.4L1396.5 851.6L1397.8 851.4L1399.1 850.6L1400.4 850.1L1401.7 850.3L1403 850.5L1404.3 850.7L1405.6 850.8L1406.9 850.8L1408.2 850.8L1409.5 850.9L1410.8 851.1L1412.1 851.4L1413.4 852.1L1414.7 852.9L1416 852.2L1417.3 851.6L1418.6 851.4L1419.9 851.4L1421.2 851.4L1422.5 851.4L1423.8 851.4L1425.1 851.6L1426.4 852.0L1427.7 852.4L1429 852.7L1430.3 852.7L1431.6 851.8L1432.9 851.8L1434.2 851.9L1435.5 852.0L1436.8 852.1L1438.1 852.1L1439.4 852.0L1440.7 852.1L1442 852.3L1443.3 852.6L1444.6 852.8L1445.9 853.0L1446.4 853.0L1447.2 846.7L1448.5 836.2L1449.8 825.7L1451.1 816.0L1452.4 822.2L1453.7 822.5L1455 821.1L1456.3 822.2L1457.6 823.1L1458.9 824.0L1460.2 824.3L1461.5 823.6L1462.8 822.8L1464.1 822.6L1465.4 823.5L1466.7 823.4L1468 822.7L1469.3 822.0L1470.6 821.3L1471.9 821.9L1473.2 822.5L1474.5 823.2L1475.8 823.8L1477.1 824.2L1478.4 824.1L1479.7 824.0L1481 823.9L1482.3 823.7L1483.6 823.5L1484.9 823.3L1485.5 825.0L1486.2 819.8L1487.5 810.4L1488.8 801.1L1489.4 796.7L1490.1 792.4L1491.4 792.5L1491.7 791.5L1492.7 787.2L1494 781.6L1495.3 776.4L1496.6 773.9L1497.2 772.6L1497.9 773.0L1499.2 774.0L1500.5 775.0L1501.8 776.0L1503.1 775.0L1504.4 773.9L1505.7 772.7L1507 771.4L1508.3 770.2L1509.6 768.9L1510.9 768.2L1512.2 769.1L1513.5 770.0L1514.8 770.1L1516.1 770.4L1517.4 771.0L1518.7 772.3L1520 773.4L1521.3 774.2L1522.6 774.9L1523.9 775.5L1525.2 774.4L1526.5 773.3L1527.8 772.0L1529.1 771.0L1530.4 770.3L1531.7 769.7L1533 769.1L1534.3 770.4L1535.6 771.8L1536.9 773.2L1538.2 772.9L1539.5 772.3L1540.8 771.9L1542.1 771.5L1543.4 772.0L1544.7 773.0L1546 774.2L1547.3 775.4L1548.6 776.0L1549.9 775.6L1551.2 775.1L1552.5 774.6L1553.8 774.1L1555.1 773.7L1556.4 773.4L1557.7 773.2L1559 773.8L1560.3 860.4L1561.2 895.0L1561.6 895.0L1561.6 895Z" fill="#a890a8"/><path d="M1123.5 895L1123.5 859.8L1124.8 859.8L1126.1 859.7L1127.4 859.6L1128.7 859.6L1130 859.6L1131.3 859.6L1132.6 859.5L1133.9 859.5L1135.2 859.5L1136.5 859.5L1137.8 859.5L1139.1 859.6L1140.4 859.5L1141.7 859.5L1143 859.4L1144.3 859.4L1145.6 859.4L1146.9 859.4L1148.2 859.4L1149.5 859.4L1150.8 860.6L1152.1 860.7L1153.4 859.3L1154.7 859.3L1156 859.3L1157.3 859.3L1158.6 859.2L1159.9 859.1L1161.2 859.1L1162.5 859.0L1163.8 859.1L1165.1 859.1L1166.4 859.2L1167.7 859.4L1169 859.6L1170.3 859.9L1171.6 860.3L1172.9 860.5L1174.2 860.5L1175.5 860.5L1176.8 860.4L1178.1 860.2L1179.4 860.1L1180.7 860.0L1182 860.0L1183.3 859.9L1184.6 859.8L1185.9 859.6L1187.2 859.3L1188.5 859.1L1189.8 858.9L1191.1 858.7L1192.4 858.6L1193.7 858.6L1195 858.7L1196.3 858.8L1197.6 859.0L1198.9 859.1L1200.2 859.2L1201.5 859.3L1202.8 859.3L1204.1 859.3L1205.4 859.2L1206.7 859.2L1208 859.1L1209.3 859.1L1210.6 859.2L1211.9 859.3L1213.2 859.5L1214.5 859.7L1215.8 859.8L1217.1 859.9L1218.4 860.0L1219.7 860.1L1221 860.0L1222.3 859.9L1223.6 859.9L1224.9 859.9L1226.2 859.9L1227.5 859.9L1228.8 860.0L1230.1 860.0L1231.4 860.0L1232.7 860.0L1234 860.0L1235.3 860.0L1236.6 860.0L1237.9 860.0L1239.2 859.9L1240.5 859.8L1241.8 859.8L1243.1 859.7L1244.4 859.6L1245.7 859.5L1247 859.5L1248.3 861.1L1249.6 861.3L1250.9 859.5L1252.2 859.6L1253.5 859.6L1254.8 859.7L1256.1 859.8L1257.4 859.9L1258.7 860.0L1260 860.1L1261.3 860.2L1262.6 860.2L1263.9 860.2L1265.2 860.1L1266.5 860.0L1267.8 859.9L1269.1 859.9L1270.4 859.9L1271.7 859.8L1273 859.9L1274.3 859.9L1275.6 859.8L1276.9 859.8L1278.2 859.7L1279.5 859.7L1280.8 859.6L1282.1 859.6L1283.4 859.6L1284.7 859.6L1286 859.5L1287.3 859.4L1288.6 859.2L1289.9 859.1L1291.2 859.0L1292.5 859.0L1293.8 859.0L1295.1 859.1L1296.4 859.1L1297.7 859.2L1299 859.2L1300.3 859.3L1301.6 859.5L1302.9 859.7L1304.2 859.9L1305.5 860.0L1306.8 860.1L1308.1 860.1L1309.4 860.1L1310.7 860.0L1312 859.9L1313.3 859.8L1314.6 859.6L1315.9 859.5L1317.2 859.8L1318.5 860.2L1319.8 860.7L1321.1 861.2L1322.4 861.7L1323.7 862.1L1325 862.5L1326.3 862.8L1327.6 862.7L1328.9 862.5L1330.2 862.3L1331.5 862.1L1332.8 862.0L1334.1 861.9L1335.4 862.4L1336.7 864.0L1338 864.5L1339.3 863.2L1340.6 862.5L1341.9 862.6L1343.2 862.7L1344.5 862.7L1345.8 862.6L1347.1 862.5L1348.4 862.4L1349.7 862.5L1351 862.6L1352.3 862.8L1353.6 862.9L1354.9 862.8L1356.2 862.6L1357.5 862.4L1358.8 862.2L1360.1 862.0L1361.4 861.8L1362.7 861.7L1364 861.7L1365.3 861.8L1366.6 862.0L1367.9 862.2L1368.3 862.1L1369.2 859.5L1370.5 855.7L1371.8 851.9L1372.2 850.1L1373.1 850.0L1374.4 850.1L1375.7 850.4L1377 850.7L1378.3 851.0L1379.6 851.2L1380.9 851.4L1382.2 851.5L1383.5 851.7L1384.8 850.8L1386.1 850.3L1387.4 850.4L1388.7 850.5L1390 850.6L1391.3 851.0L1392.6 851.4L1393.9 851.9L1395.2 852.3L1396.5 852.5L1397.8 852.2L1399.1 851.5L1400.4 850.9L1401.7 851.1L1403 851.3L1404.3 851.4L1405.6 851.5L1406.9 851.5L1408.2 851.5L1409.5 851.7L1410.8 851.9L1412.1 852.1L1413.4 852.8L1414.7 853.7L1416 853.1L1417.3 852.4L1418.6 852.3L1419.9 852.3L1421.2 852.3L1422.5 852.2L1423.8 852.3L1425.1 852.4L1426.4 852.8L1427.7 853.2L1429 853.5L1430.3 853.5L1431.6 852.6L1432.9 852.6L1434.2 852.7L1435.5 852.8L1436.8 852.9L1438.1 852.8L1439.4 852.8L1440.7 852.9L1442 853.1L1443.3 853.4L1444.6 853.6L1445.9 853.7L1446.4 853.8L1447.2 847.4L1448.5 836.9L1449.8 826.4L1451.1 816.7L1452.4 823.0L1453.7 823.3L1455 822.0L1456.3 823.0L1457.6 823.9L1458.9 824.9L1460.2 825.2L1461.5 824.4L1462.8 823.7L1464.1 823.5L1465.4 824.3L1466.7 824.2L1468 823.5L1469.3 822.8L1470.6 822.2L1471.9 822.8L1473.2 823.4L1474.5 824.0L1475.8 824.5L1477.1 825.0L1478.4 824.8L1479.7 824.7L1481 824.6L1482.3 824.4L1483.6 824.3L1484.9 824.1L1485.5 825.8L1486.2 820.6L1487.5 811.3L1488.8 801.9L1489.4 797.6L1490.1 793.2L1491.4 793.3L1491.7 792.3L1492.7 788.0L1494 782.4L1495.3 777.2L1496.6 774.6L1497.2 773.3L1497.9 773.8L1499.2 774.7L1500.5 775.7L1501.8 776.8L1503.1 775.9L1504.4 774.7L1505.7 773.5L1507 772.2L1508.3 770.9L1509.6 769.6L1510.9 769.0L1512.2 769.9L1513.5 770.8L1514.8 770.9L1516.1 771.1L1517.4 771.7L1518.7 773.0L1520 774.1L1521.3 774.9L1522.6 775.6L1523.9 776.2L1525.2 775.1L1526.5 774.0L1527.8 772.8L1529.1 771.7L1530.4 771.0L1531.7 770.4L1533 769.7L1534.3 771.0L1535.6 772.5L1536.9 773.9L1538.2 773.6L1539.5 773.1L1540.8 772.6L1542.1 772.3L1543.4 772.8L1544.7 773.8L1546 774.9L1547.3 776.2L1548.6 776.7L1549.9 776.3L1551.2 775.8L1552.5 775.3L1553.8 774.8L1555.1 774.3L1556.4 774.1L1557.7 773.9L1559 774.5L1560.3 860.7L1561.2 895.0L1561.6 895.0L1561.6 895Z" fill="#d0d8f0"/><path d="M1123.5 895L1123.5 861.0L1124.8 861.0L1126.1 860.9L1127.4 860.9L1128.7 860.9L1130 860.9L1131.3 860.9L1132.6 860.9L1133.9 860.8L1135.2 860.8L1136.5 860.8L1137.8 860.8L1139.1 860.9L1140.4 860.8L1141.7 860.8L1143 860.7L1144.3 860.7L1145.6 860.6L1146.9 860.6L1148.2 860.6L1149.5 860.6L1150.8 861.9L1152.1 862.0L1153.4 860.5L1154.7 860.5L1156 860.5L1157.3 860.5L1158.6 860.4L1159.9 860.3L1161.2 860.2L1162.5 860.2L1163.8 860.2L1165.1 860.3L1166.4 860.4L1167.7 860.5L1169 860.8L1170.3 861.1L1171.6 861.5L1172.9 861.7L1174.2 861.8L1175.5 861.8L1176.8 861.7L1178.1 861.6L1179.4 861.4L1180.7 861.4L1182 861.3L1183.3 861.2L1184.6 861.1L1185.9 860.9L1187.2 860.6L1188.5 860.4L1189.8 860.2L1191.1 860.0L1192.4 859.9L1193.7 859.8L1195 859.9L1196.3 860.0L1197.6 860.2L1198.9 860.3L1200.2 860.4L1201.5 860.5L1202.8 860.5L1204.1 860.5L1205.4 860.5L1206.7 860.5L1208 860.4L1209.3 860.4L1210.6 860.5L1211.9 860.6L1213.2 860.8L1214.5 861.0L1215.8 861.1L1217.1 861.3L1218.4 861.4L1219.7 861.4L1221 861.3L1222.3 861.2L1223.6 861.2L1224.9 861.1L1226.2 861.1L1227.5 861.1L1228.8 861.2L1230.1 861.2L1231.4 861.3L1232.7 861.3L1234 861.3L1235.3 861.3L1236.6 861.3L1237.9 861.2L1239.2 861.1L1240.5 861.1L1241.8 861.0L1243.1 860.9L1244.4 860.8L1245.7 860.7L1247 860.7L1248.3 862.4L1249.6 862.5L1250.9 860.8L1252.2 860.8L1253.5 860.8L1254.8 860.9L1256.1 861.0L1257.4 861.1L1258.7 861.3L1260 861.4L1261.3 861.5L1262.6 861.5L1263.9 861.5L1265.2 861.4L1266.5 861.3L1267.8 861.2L1269.1 861.2L1270.4 861.1L1271.7 861.1L1273 861.1L1274.3 861.1L1275.6 861.1L1276.9 861.0L1278.2 861.0L1279.5 861.0L1280.8 861.0L1282.1 861.0L1283.4 860.9L1284.7 860.8L1286 860.8L1287.3 860.7L1288.6 860.5L1289.9 860.4L1291.2 860.3L1292.5 860.3L1293.8 860.4L1295.1 860.4L1296.4 860.4L1297.7 860.5L1299 860.5L1300.3 860.6L1301.6 860.7L1302.9 860.9L1304.2 861.1L1305.5 861.3L1306.8 861.4L1308.1 861.4L1309.4 861.4L1310.7 861.3L1312 861.2L1313.3 861.0L1314.6 860.9L1315.9 860.8L1317.2 861.0L1318.5 861.4L1319.8 861.9L1321.1 862.4L1322.4 862.8L1323.7 863.3L1325 863.7L1326.3 864.0L1327.6 863.9L1328.9 863.8L1330.2 863.6L1331.5 863.4L1332.8 863.3L1334.1 863.2L1335.4 863.6L1336.7 865.2L1338 865.7L1339.3 864.4L1340.6 863.7L1341.9 863.8L1343.2 863.9L1344.5 863.9L1345.8 863.9L1347.1 863.7L1348.4 863.7L1349.7 863.7L1351 863.8L1352.3 864.0L1353.6 864.1L1354.9 864.1L1356.2 863.9L1357.5 863.6L1358.8 863.4L1360.1 863.2L1361.4 863.1L1362.7 863.0L1364 862.9L1365.3 863.0L1366.6 863.2L1367.9 863.4L1368.3 863.4L1369.2 860.8L1370.5 857.1L1371.8 853.4L1372.2 851.5L1373.1 851.4L1374.4 851.5L1375.7 851.7L1377 852.0L1378.3 852.3L1379.6 852.6L1380.9 852.7L1382.2 852.8L1383.5 853.0L1384.8 852.2L1386.1 851.6L1387.4 851.7L1388.7 851.8L1390 852.0L1391.3 852.3L1392.6 852.8L1393.9 853.3L1395.2 853.6L1396.5 853.8L1397.8 853.6L1399.1 852.8L1400.4 852.2L1401.7 852.4L1403 852.6L1404.3 852.8L1405.6 852.9L1406.9 852.9L1408.2 852.9L1409.5 853.0L1410.8 853.2L1412.1 853.5L1413.4 854.2L1414.7 855.0L1416 854.4L1417.3 853.8L1418.6 853.7L1419.9 853.7L1421.2 853.7L1422.5 853.7L1423.8 853.6L1425.1 853.7L1426.4 854.0L1427.7 854.4L1429 854.8L1430.3 854.7L1431.6 853.9L1432.9 853.9L1434.2 854.0L1435.5 854.1L1436.8 854.2L1438.1 854.2L1439.4 854.2L1440.7 854.3L1442 854.5L1443.3 854.8L1444.6 855.0L1445.9 855.1L1446.4 855.2L1447.2 848.8L1448.5 838.3L1449.8 827.7L1451.1 818.0L1452.4 824.2L1453.7 824.5L1455 823.2L1456.3 824.3L1457.6 825.2L1458.9 826.2L1460.2 826.4L1461.5 825.7L1462.8 824.9L1464.1 824.8L1465.4 825.6L1466.7 825.5L1468 824.8L1469.3 824.1L1470.6 823.4L1471.9 824.0L1473.2 824.7L1474.5 825.3L1475.8 825.9L1477.1 826.3L1478.4 826.2L1479.7 826.1L1481 826.0L1482.3 825.8L1483.6 825.6L1484.9 825.5L1485.5 827.1L1486.2 822.0L1487.5 812.6L1488.8 803.2L1489.4 798.9L1490.1 794.5L1491.4 794.6L1491.7 793.6L1492.7 789.3L1494 783.7L1495.3 778.5L1496.6 775.9L1497.2 774.6L1497.9 775.0L1499.2 775.9L1500.5 776.9L1501.8 777.9L1503.1 777.0L1504.4 775.9L1505.7 774.7L1507 773.4L1508.3 772.2L1509.6 770.9L1510.9 770.3L1512.2 771.2L1513.5 772.1L1514.8 772.2L1516.1 772.4L1517.4 772.9L1518.7 774.2L1520 775.3L1521.3 776.1L1522.6 776.8L1523.9 777.4L1525.2 776.5L1526.5 775.3L1527.8 774.1L1529.1 773.0L1530.4 772.3L1531.7 771.6L1533 771.0L1534.3 772.3L1535.6 773.8L1536.9 775.2L1538.2 774.8L1539.5 774.3L1540.8 773.8L1542.1 773.5L1543.4 774.0L1544.7 775.0L1546 776.1L1547.3 777.3L1548.6 777.9L1549.9 777.5L1551.2 777.0L1552.5 776.5L1553.8 776.0L1555.1 775.5L1556.4 775.2L1557.7 775.1L1559 775.7L1560.3 861.2L1561.2 895.0L1561.6 895.0L1561.6 895Z" fill="#7a5cf0"/><path d="M1123.5 895L1123.5 862.2L1124.8 862.2L1126.1 862.1L1127.4 862.1L1128.7 862.0L1130 862.1L1131.3 862.1L1132.6 862.0L1133.9 862.0L1135.2 862.0L1136.5 862.0L1137.8 862.1L1139.1 862.1L1140.4 862.1L1141.7 862.1L1143 862.0L1144.3 862.0L1145.6 862.0L1146.9 861.9L1148.2 861.9L1149.5 861.9L1150.8 863.2L1152.1 863.3L1153.4 861.8L1154.7 861.8L1156 861.7L1157.3 861.7L1158.6 861.6L1159.9 861.5L1161.2 861.5L1162.5 861.5L1163.8 861.5L1165.1 861.5L1166.4 861.6L1167.7 861.7L1169 862.0L1170.3 862.3L1171.6 862.7L1172.9 862.9L1174.2 863.0L1175.5 863.0L1176.8 862.9L1178.1 862.7L1179.4 862.6L1180.7 862.5L1182 862.5L1183.3 862.4L1184.6 862.3L1185.9 862.2L1187.2 862.0L1188.5 861.7L1189.8 861.5L1191.1 861.3L1192.4 861.2L1193.7 861.2L1195 861.2L1196.3 861.3L1197.6 861.5L1198.9 861.6L1200.2 861.7L1201.5 861.8L1202.8 861.8L1204.1 861.8L1205.4 861.8L1206.7 861.7L1208 861.6L1209.3 861.6L1210.6 861.7L1211.9 861.8L1213.2 862.0L1214.5 862.2L1215.8 862.4L1217.1 862.5L1218.4 862.6L1219.7 862.7L1221 862.6L1222.3 862.5L1223.6 862.4L1224.9 862.4L1226.2 862.4L1227.5 862.4L1228.8 862.5L1230.1 862.5L1231.4 862.6L1232.7 862.6L1234 862.6L1235.3 862.6L1236.6 862.5L1237.9 862.4L1239.2 862.3L1240.5 862.3L1241.8 862.3L1243.1 862.2L1244.4 862.1L1245.7 862.0L1247 862.0L1248.3 863.6L1249.6 863.8L1250.9 862.0L1252.2 862.0L1253.5 862.1L1254.8 862.1L1256.1 862.2L1257.4 862.3L1258.7 862.5L1260 862.6L1261.3 862.7L1262.6 862.8L1263.9 862.7L1265.2 862.6L1266.5 862.5L1267.8 862.4L1269.1 862.4L1270.4 862.4L1271.7 862.4L1273 862.4L1274.3 862.4L1275.6 862.4L1276.9 862.3L1278.2 862.3L1279.5 862.3L1280.8 862.3L1282.1 862.2L1283.4 862.2L1284.7 862.1L1286 862.0L1287.3 861.9L1288.6 861.8L1289.9 861.7L1291.2 861.6L1292.5 861.6L1293.8 861.7L1295.1 861.7L1296.4 861.7L1297.7 861.7L1299 861.8L1300.3 861.9L1301.6 862.0L1302.9 862.2L1304.2 862.4L1305.5 862.6L1306.8 862.7L1308.1 862.7L1309.4 862.7L1310.7 862.6L1312 862.4L1313.3 862.3L1314.6 862.1L1315.9 862.0L1317.2 862.3L1318.5 862.7L1319.8 863.1L1321.1 863.6L1322.4 864.1L1323.7 864.6L1325 865.0L1326.3 865.2L1327.6 865.2L1328.9 865.1L1330.2 864.9L1331.5 864.6L1332.8 864.5L1334.1 864.4L1335.4 864.8L1336.7 866.4L1338 866.9L1339.3 865.6L1340.6 865.0L1341.9 865.1L1343.2 865.2L1344.5 865.2L1345.8 865.1L1347.1 864.9L1348.4 864.8L1349.7 864.9L1351 865.0L1352.3 865.2L1353.6 865.3L1354.9 865.3L1356.2 865.1L1357.5 864.9L1358.8 864.7L1360.1 864.5L1361.4 864.3L1362.7 864.2L1364 864.2L1365.3 864.3L1366.6 864.4L1367.9 864.7L1368.3 864.7L1369.2 862.1L1370.5 858.4L1371.8 854.7L1372.2 852.9L1373.1 852.8L1374.4 852.8L1375.7 853.1L1377 853.4L1378.3 853.7L1379.6 853.9L1380.9 854.1L1382.2 854.3L1383.5 854.4L1384.8 853.6L1386.1 852.9L1387.4 853.0L1388.7 853.1L1390 853.3L1391.3 853.7L1392.6 854.1L1393.9 854.6L1395.2 854.9L1396.5 855.1L1397.8 854.9L1399.1 854.1L1400.4 853.6L1401.7 853.8L1403 854.0L1404.3 854.2L1405.6 854.3L1406.9 854.2L1408.2 854.2L1409.5 854.3L1410.8 854.5L1412.1 854.8L1413.4 855.5L1414.7 856.4L1416 855.8L1417.3 855.2L1418.6 855.1L1419.9 855.1L1421.2 855.1L1422.5 855.0L1423.8 855.0L1425.1 855.1L1426.4 855.4L1427.7 855.8L1429 856.2L1430.3 856.1L1431.6 855.3L1432.9 855.4L1434.2 855.4L1435.5 855.5L1436.8 855.5L1438.1 855.5L1439.4 855.5L1440.7 855.6L1442 855.8L1443.3 856.1L1444.6 856.3L1445.9 856.4L1446.4 856.5L1447.2 850.1L1448.5 839.6L1449.8 829.0L1451.1 819.3L1452.4 825.6L1453.7 825.9L1455 824.6L1456.3 825.6L1457.6 826.5L1458.9 827.5L1460.2 827.7L1461.5 826.9L1462.8 826.2L1464.1 826.0L1465.4 826.9L1466.7 826.8L1468 826.1L1469.3 825.3L1470.6 824.7L1471.9 825.3L1473.2 825.9L1474.5 826.6L1475.8 827.1L1477.1 827.6L1478.4 827.5L1479.7 827.4L1481 827.2L1482.3 827.0L1483.6 826.9L1484.9 826.8L1485.5 828.4L1486.2 823.3L1487.5 813.9L1488.8 804.5L1489.4 800.2L1490.1 795.9L1491.4 795.9L1491.7 795.0L1492.7 790.6L1494 785.0L1495.3 779.8L1496.6 777.3L1497.2 775.9L1497.9 776.4L1499.2 777.2L1500.5 778.2L1501.8 779.2L1503.1 778.3L1504.4 777.2L1505.7 776.0L1507 774.7L1508.3 773.5L1509.6 772.2L1510.9 771.5L1512.2 772.3L1513.5 773.2L1514.8 773.3L1516.1 773.6L1517.4 774.1L1518.7 775.4L1520 776.5L1521.3 777.4L1522.6 778.2L1523.9 778.8L1525.2 777.8L1526.5 776.6L1527.8 775.3L1529.1 774.3L1530.4 773.5L1531.7 772.9L1533 772.2L1534.3 773.6L1535.6 775.0L1536.9 776.5L1538.2 776.2L1539.5 775.6L1540.8 775.1L1542.1 774.8L1543.4 775.3L1544.7 776.3L1546 777.4L1547.3 778.6L1548.6 779.2L1549.9 778.8L1551.2 778.2L1552.5 777.7L1553.8 777.2L1555.1 776.7L1556.4 776.4L1557.7 776.2L1559 776.9L1560.3 861.6L1561.2 895.0L1561.6 895.0L1561.6 895Z" fill="#e06a30"/><path d="M1123.5 895L1123.5 864.0L1124.8 864.0L1126.1 863.9L1127.4 863.8L1128.7 863.7L1130 863.8L1131.3 863.8L1132.6 863.8L1133.9 863.8L1135.2 863.7L1136.5 863.7L1137.8 863.8L1139.1 863.8L1140.4 863.8L1141.7 863.8L1143 863.7L1144.3 863.7L1145.6 863.6L1146.9 863.6L1148.2 863.6L1149.5 863.6L1150.8 864.9L1152.1 865.0L1153.4 863.5L1154.7 863.5L1156 863.5L1157.3 863.5L1158.6 863.4L1159.9 863.4L1161.2 863.3L1162.5 863.3L1163.8 863.3L1165.1 863.3L1166.4 863.4L1167.7 863.6L1169 863.8L1170.3 864.1L1171.6 864.5L1172.9 864.7L1174.2 864.8L1175.5 864.8L1176.8 864.6L1178.1 864.4L1179.4 864.3L1180.7 864.2L1182 864.2L1183.3 864.1L1184.6 864.0L1185.9 863.9L1187.2 863.7L1188.5 863.5L1189.8 863.3L1191.1 863.1L1192.4 863.0L1193.7 862.9L1195 863.0L1196.3 863.1L1197.6 863.3L1198.9 863.5L1200.2 863.6L1201.5 863.6L1202.8 863.6L1204.1 863.6L1205.4 863.6L1206.7 863.4L1208 863.3L1209.3 863.3L1210.6 863.4L1211.9 863.6L1213.2 863.8L1214.5 864.0L1215.8 864.2L1217.1 864.3L1218.4 864.4L1219.7 864.4L1221 864.4L1222.3 864.3L1223.6 864.2L1224.9 864.1L1226.2 864.1L1227.5 864.1L1228.8 864.2L1230.1 864.2L1231.4 864.3L1232.7 864.3L1234 864.3L1235.3 864.3L1236.6 864.2L1237.9 864.1L1239.2 864.0L1240.5 864.0L1241.8 864.0L1243.1 864.0L1244.4 863.9L1245.7 863.8L1247 863.8L1248.3 865.5L1249.6 865.6L1250.9 863.8L1252.2 863.8L1253.5 863.8L1254.8 863.8L1256.1 863.9L1257.4 864.0L1258.7 864.2L1260 864.3L1261.3 864.5L1262.6 864.6L1263.9 864.6L1265.2 864.5L1266.5 864.3L1267.8 864.2L1269.1 864.1L1270.4 864.1L1271.7 864.2L1273 864.2L1274.3 864.3L1275.6 864.2L1276.9 864.1L1278.2 864.1L1279.5 864.1L1280.8 864.0L1282.1 864.0L1283.4 863.9L1284.7 863.8L1286 863.7L1287.3 863.6L1288.6 863.5L1289.9 863.4L1291.2 863.4L1292.5 863.4L1293.8 863.4L1295.1 863.5L1296.4 863.5L1297.7 863.5L1299 863.5L1300.3 863.6L1301.6 863.7L1302.9 863.9L1304.2 864.1L1305.5 864.3L1306.8 864.4L1308.1 864.4L1309.4 864.4L1310.7 864.3L1312 864.2L1313.3 864.1L1314.6 863.9L1315.9 863.8L1317.2 864.0L1318.5 864.3L1319.8 864.8L1321.1 865.3L1322.4 865.8L1323.7 866.2L1325 866.6L1326.3 867.0L1327.6 866.9L1328.9 866.8L1330.2 866.6L1331.5 866.4L1332.8 866.2L1334.1 866.1L1335.4 866.5L1336.7 868.1L1338 868.7L1339.3 867.4L1340.6 866.7L1341.9 866.8L1343.2 866.9L1344.5 866.9L1345.8 866.8L1347.1 866.6L1348.4 866.5L1349.7 866.6L1351 866.8L1352.3 867.0L1353.6 867.1L1354.9 867.1L1356.2 866.9L1357.5 866.6L1358.8 866.4L1360.1 866.2L1361.4 866.0L1362.7 865.9L1364 865.9L1365.3 866.0L1366.6 866.2L1367.9 866.4L1368.3 866.4L1369.2 863.8L1370.5 860.2L1371.8 856.6L1372.2 854.8L1373.1 854.7L1374.4 854.8L1375.7 855.0L1377 855.3L1378.3 855.5L1379.6 855.8L1380.9 856.0L1382.2 856.1L1383.5 856.3L1384.8 855.5L1386.1 854.8L1387.4 855.0L1388.7 855.1L1390 855.3L1391.3 855.6L1392.6 856.0L1393.9 856.5L1395.2 856.8L1396.5 857.0L1397.8 856.8L1399.1 856.1L1400.4 855.5L1401.7 855.7L1403 856.0L1404.3 856.2L1405.6 856.2L1406.9 856.1L1408.2 856.1L1409.5 856.2L1410.8 856.4L1412.1 856.6L1413.4 857.4L1414.7 858.2L1416 857.7L1417.3 857.1L1418.6 857.0L1419.9 857.0L1421.2 857.0L1422.5 856.9L1423.8 856.9L1425.1 857.0L1426.4 857.4L1427.7 857.8L1429 858.1L1430.3 858.1L1431.6 857.2L1432.9 857.2L1434.2 857.3L1435.5 857.4L1436.8 857.4L1438.1 857.4L1439.4 857.4L1440.7 857.4L1442 857.7L1443.3 857.9L1444.6 858.1L1445.9 858.3L1446.4 858.3L1447.2 851.9L1448.5 841.4L1449.8 830.8L1451.1 821.1L1452.4 827.3L1453.7 827.6L1455 826.3L1456.3 827.4L1457.6 828.4L1458.9 829.3L1460.2 829.6L1461.5 828.8L1462.8 828.1L1464.1 827.9L1465.4 828.8L1466.7 828.7L1468 828.0L1469.3 827.2L1470.6 826.5L1471.9 827.1L1473.2 827.8L1474.5 828.4L1475.8 829.0L1477.1 829.5L1478.4 829.4L1479.7 829.2L1481 829.0L1482.3 828.8L1483.6 828.6L1484.9 828.5L1485.5 830.2L1486.2 825.0L1487.5 815.7L1488.8 806.3L1489.4 801.9L1490.1 797.6L1491.4 797.7L1491.7 796.8L1492.7 792.4L1494 786.9L1495.3 781.7L1496.6 779.1L1497.2 777.7L1497.9 778.1L1499.2 779.0L1500.5 780.0L1501.8 781.0L1503.1 780.0L1504.4 778.9L1505.7 777.7L1507 776.5L1508.3 775.3L1509.6 774.0L1510.9 773.3L1512.2 774.1L1513.5 775.0L1514.8 775.1L1516.1 775.4L1517.4 775.9L1518.7 777.2L1520 778.3L1521.3 779.1L1522.6 779.9L1523.9 780.5L1525.2 779.5L1526.5 778.3L1527.8 777.0L1529.1 776.0L1530.4 775.2L1531.7 774.6L1533 774.0L1534.3 775.3L1535.6 776.7L1536.9 778.2L1538.2 777.8L1539.5 777.2L1540.8 776.8L1542.1 776.5L1543.4 777.0L1544.7 778.0L1546 779.1L1547.3 780.4L1548.6 781.0L1549.9 780.6L1551.2 780.0L1552.5 779.4L1553.8 778.9L1555.1 778.4L1556.4 778.1L1557.7 777.9L1559 778.5L1560.3 862.3L1561.2 895.0L1561.6 895.0L1561.6 895Z" fill="#e8907a"/><path d="M1123.5 895L1123.5 865.4L1124.8 865.3L1126.1 865.2L1127.4 865.1L1128.7 865.1L1130 865.1L1131.3 865.2L1132.6 865.1L1133.9 865.1L1135.2 865.1L1136.5 865.1L1137.8 865.1L1139.1 865.1L1140.4 865.1L1141.7 865.1L1143 865.1L1144.3 865.0L1145.6 865.0L1146.9 865.0L1148.2 865.1L1149.5 865.1L1150.8 866.4L1152.1 866.5L1153.4 865.0L1154.7 864.9L1156 864.9L1157.3 864.9L1158.6 864.9L1159.9 864.8L1161.2 864.7L1162.5 864.7L1163.8 864.7L1165.1 864.7L1166.4 864.7L1167.7 864.9L1169 865.2L1170.3 865.6L1171.6 865.9L1172.9 866.1L1174.2 866.2L1175.5 866.1L1176.8 866.0L1178.1 865.8L1179.4 865.7L1180.7 865.6L1182 865.5L1183.3 865.5L1184.6 865.4L1185.9 865.2L1187.2 865.1L1188.5 864.9L1189.8 864.7L1191.1 864.5L1192.4 864.4L1193.7 864.4L1195 864.5L1196.3 864.6L1197.6 864.8L1198.9 864.9L1200.2 865.0L1201.5 865.1L1202.8 865.1L1204.1 865.1L1205.4 865.0L1206.7 864.9L1208 864.8L1209.3 864.7L1210.6 864.8L1211.9 865.0L1213.2 865.2L1214.5 865.3L1215.8 865.5L1217.1 865.7L1218.4 865.8L1219.7 865.8L1221 865.7L1222.3 865.7L1223.6 865.6L1224.9 865.6L1226.2 865.5L1227.5 865.6L1228.8 865.6L1230.1 865.7L1231.4 865.7L1232.7 865.8L1234 865.8L1235.3 865.8L1236.6 865.7L1237.9 865.6L1239.2 865.5L1240.5 865.5L1241.8 865.5L1243.1 865.4L1244.4 865.3L1245.7 865.2L1247 865.1L1248.3 866.8L1249.6 867.0L1250.9 865.2L1252.2 865.2L1253.5 865.2L1254.8 865.3L1256.1 865.3L1257.4 865.5L1258.7 865.6L1260 865.7L1261.3 865.9L1262.6 865.9L1263.9 865.9L1265.2 865.8L1266.5 865.7L1267.8 865.6L1269.1 865.5L1270.4 865.5L1271.7 865.6L1273 865.6L1274.3 865.6L1275.6 865.5L1276.9 865.5L1278.2 865.5L1279.5 865.6L1280.8 865.5L1282.1 865.5L1283.4 865.4L1284.7 865.3L1286 865.2L1287.3 865.1L1288.6 864.9L1289.9 864.8L1291.2 864.8L1292.5 864.8L1293.8 864.8L1295.1 864.8L1296.4 864.8L1297.7 864.9L1299 865.0L1300.3 865.1L1301.6 865.2L1302.9 865.4L1304.2 865.5L1305.5 865.7L1306.8 865.8L1308.1 865.9L1309.4 865.8L1310.7 865.8L1312 865.7L1313.3 865.5L1314.6 865.4L1315.9 865.2L1317.2 865.4L1318.5 865.7L1319.8 866.2L1321.1 866.7L1322.4 867.2L1323.7 867.6L1325 868.0L1326.3 868.3L1327.6 868.3L1328.9 868.2L1330.2 868.0L1331.5 867.8L1332.8 867.6L1334.1 867.5L1335.4 867.9L1336.7 869.5L1338 870.0L1339.3 868.7L1340.6 868.0L1341.9 868.2L1343.2 868.3L1344.5 868.3L1345.8 868.2L1347.1 868.0L1348.4 868.0L1349.7 868.0L1351 868.2L1352.3 868.4L1353.6 868.5L1354.9 868.4L1356.2 868.2L1357.5 867.9L1358.8 867.7L1360.1 867.5L1361.4 867.3L1362.7 867.3L1364 867.3L1365.3 867.4L1366.6 867.6L1367.9 867.8L1368.3 867.7L1369.2 865.2L1370.5 861.6L1371.8 858.1L1372.2 856.3L1373.1 856.2L1374.4 856.3L1375.7 856.5L1377 856.8L1378.3 857.1L1379.6 857.3L1380.9 857.5L1382.2 857.7L1383.5 857.8L1384.8 857.0L1386.1 856.3L1387.4 856.5L1388.7 856.7L1390 856.9L1391.3 857.2L1392.6 857.6L1393.9 858.0L1395.2 858.3L1396.5 858.5L1397.8 858.3L1399.1 857.6L1400.4 857.0L1401.7 857.2L1403 857.5L1404.3 857.7L1405.6 857.7L1406.9 857.6L1408.2 857.6L1409.5 857.7L1410.8 857.9L1412.1 858.2L1413.4 858.9L1414.7 859.7L1416 859.1L1417.3 858.6L1418.6 858.5L1419.9 858.5L1421.2 858.5L1422.5 858.5L1423.8 858.5L1425.1 858.6L1426.4 858.9L1427.7 859.3L1429 859.6L1430.3 859.6L1431.6 858.7L1432.9 858.8L1434.2 858.8L1435.5 858.9L1436.8 858.9L1438.1 858.9L1439.4 859.0L1440.7 859.0L1442 859.2L1443.3 859.4L1444.6 859.6L1445.9 859.7L1446.4 859.8L1447.2 853.4L1448.5 842.8L1449.8 832.2L1451.1 822.5L1452.4 828.7L1453.7 829.0L1455 827.7L1456.3 828.8L1457.6 829.8L1458.9 830.8L1460.2 831.1L1461.5 830.3L1462.8 829.5L1464.1 829.4L1465.4 830.3L1466.7 830.1L1468 829.4L1469.3 828.7L1470.6 828.0L1471.9 828.6L1473.2 829.2L1474.5 829.8L1475.8 830.4L1477.1 830.9L1478.4 830.8L1479.7 830.6L1481 830.4L1482.3 830.2L1483.6 830.0L1484.9 829.9L1485.5 831.6L1486.2 826.5L1487.5 817.1L1488.8 807.6L1489.4 803.2L1490.1 798.9L1491.4 799.0L1491.7 798.1L1492.7 793.8L1494 788.3L1495.3 783.1L1496.6 780.5L1497.2 779.1L1497.9 779.6L1499.2 780.5L1500.5 781.4L1501.8 782.4L1503.1 781.5L1504.4 780.4L1505.7 779.2L1507 778.0L1508.3 776.7L1509.6 775.4L1510.9 774.8L1512.2 775.6L1513.5 776.4L1514.8 776.5L1516.1 776.8L1517.4 777.3L1518.7 778.5L1520 779.6L1521.3 780.4L1522.6 781.2L1523.9 781.8L1525.2 780.8L1526.5 779.7L1527.8 778.4L1529.1 777.4L1530.4 776.7L1531.7 776.0L1533 775.4L1534.3 776.7L1535.6 778.2L1536.9 779.6L1538.2 779.2L1539.5 778.6L1540.8 778.2L1542.1 777.9L1543.4 778.4L1544.7 779.4L1546 780.6L1547.3 781.9L1548.6 782.4L1549.9 782.0L1551.2 781.4L1552.5 780.9L1553.8 780.3L1555.1 779.9L1556.4 779.5L1557.7 779.3L1559 779.9L1560.3 862.8L1561.2 895.0L1561.6 895.0L1561.6 895Z" fill="#70c8a0"/><path d="M1123.5 895L1123.5 866.6L1124.8 866.5L1126.1 866.4L1127.4 866.4L1128.7 866.4L1130 866.4L1131.3 866.4L1132.6 866.4L1133.9 866.3L1135.2 866.3L1136.5 866.3L1137.8 866.3L1139.1 866.3L1140.4 866.3L1141.7 866.3L1143 866.3L1144.3 866.2L1145.6 866.2L1146.9 866.2L1148.2 866.3L1149.5 866.3L1150.8 867.6L1152.1 867.7L1153.4 866.3L1154.7 866.2L1156 866.3L1157.3 866.3L1158.6 866.2L1159.9 866.1L1161.2 866.0L1162.5 866.0L1163.8 866.0L1165.1 866.0L1166.4 866.0L1167.7 866.2L1169 866.5L1170.3 866.9L1171.6 867.1L1172.9 867.3L1174.2 867.4L1175.5 867.3L1176.8 867.2L1178.1 867.0L1179.4 866.9L1180.7 866.8L1182 866.8L1183.3 866.7L1184.6 866.6L1185.9 866.5L1187.2 866.3L1188.5 866.2L1189.8 865.9L1191.1 865.8L1192.4 865.7L1193.7 865.7L1195 865.8L1196.3 865.9L1197.6 866.1L1198.9 866.2L1200.2 866.3L1201.5 866.4L1202.8 866.3L1204.1 866.3L1205.4 866.2L1206.7 866.1L1208 866.0L1209.3 866.0L1210.6 866.1L1211.9 866.3L1213.2 866.4L1214.5 866.6L1215.8 866.8L1217.1 866.9L1218.4 867.0L1219.7 867.0L1221 867.0L1222.3 866.9L1223.6 866.8L1224.9 866.8L1226.2 866.7L1227.5 866.8L1228.8 866.9L1230.1 866.9L1231.4 867.0L1232.7 867.0L1234 867.0L1235.3 866.9L1236.6 866.9L1237.9 866.8L1239.2 866.8L1240.5 866.8L1241.8 866.8L1243.1 866.7L1244.4 866.6L1245.7 866.5L1247 866.4L1248.3 868.1L1249.6 868.3L1250.9 866.5L1252.2 866.5L1253.5 866.5L1254.8 866.5L1256.1 866.6L1257.4 866.7L1258.7 866.9L1260 867.1L1261.3 867.2L1262.6 867.2L1263.9 867.2L1265.2 867.1L1266.5 866.9L1267.8 866.9L1269.1 866.8L1270.4 866.8L1271.7 866.9L1273 866.9L1274.3 866.9L1275.6 866.8L1276.9 866.8L1278.2 866.8L1279.5 866.8L1280.8 866.8L1282.1 866.7L1283.4 866.6L1284.7 866.5L1286 866.4L1287.3 866.3L1288.6 866.2L1289.9 866.1L1291.2 866.0L1292.5 866.0L1293.8 866.1L1295.1 866.1L1296.4 866.1L1297.7 866.1L1299 866.2L1300.3 866.2L1301.6 866.4L1302.9 866.6L1304.2 866.7L1305.5 866.9L1306.8 867.0L1308.1 867.1L1309.4 867.1L1310.7 867.1L1312 866.9L1313.3 866.7L1314.6 866.6L1315.9 866.4L1317.2 866.6L1318.5 866.9L1319.8 867.4L1321.1 867.9L1322.4 868.4L1323.7 868.9L1325 869.3L1326.3 869.6L1327.6 869.6L1328.9 869.5L1330.2 869.3L1331.5 869.0L1332.8 868.8L1334.1 868.7L1335.4 869.2L1336.7 870.8L1338 871.3L1339.3 869.9L1340.6 869.3L1341.9 869.4L1343.2 869.5L1344.5 869.5L1345.8 869.4L1347.1 869.3L1348.4 869.3L1349.7 869.4L1351 869.5L1352.3 869.7L1353.6 869.7L1354.9 869.6L1356.2 869.4L1357.5 869.2L1358.8 868.9L1360.1 868.7L1361.4 868.6L1362.7 868.5L1364 868.5L1365.3 868.6L1366.6 868.8L1367.9 869.0L1368.3 869.0L1369.2 866.5L1370.5 863.0L1371.8 859.4L1372.2 857.6L1373.1 857.6L1374.4 857.6L1375.7 857.8L1377 858.1L1378.3 858.4L1379.6 858.6L1380.9 858.8L1382.2 859.0L1383.5 859.2L1384.8 858.4L1386.1 857.7L1387.4 857.9L1388.7 858.0L1390 858.2L1391.3 858.5L1392.6 858.9L1393.9 859.3L1395.2 859.7L1396.5 859.9L1397.8 859.7L1399.1 859.0L1400.4 858.4L1401.7 858.6L1403 858.8L1404.3 859.0L1405.6 859.0L1406.9 858.9L1408.2 858.9L1409.5 859.0L1410.8 859.2L1412.1 859.5L1413.4 860.2L1414.7 861.0L1416 860.5L1417.3 859.9L1418.6 859.8L1419.9 859.9L1421.2 859.9L1422.5 859.9L1423.8 859.9L1425.1 860.0L1426.4 860.3L1427.7 860.6L1429 860.9L1430.3 860.9L1431.6 860.0L1432.9 860.1L1434.2 860.1L1435.5 860.2L1436.8 860.3L1438.1 860.3L1439.4 860.3L1440.7 860.3L1442 860.5L1443.3 860.7L1444.6 861.0L1445.9 861.1L1446.4 861.1L1447.2 854.7L1448.5 844.1L1449.8 833.5L1451.1 823.7L1452.4 830.0L1453.7 830.3L1455 829.1L1456.3 830.2L1457.6 831.2L1458.9 832.2L1460.2 832.5L1461.5 831.7L1462.8 830.9L1464.1 830.8L1465.4 831.6L1466.7 831.5L1468 830.7L1469.3 830.0L1470.6 829.3L1471.9 829.9L1473.2 830.6L1474.5 831.2L1475.8 831.8L1477.1 832.2L1478.4 832.0L1479.7 831.9L1481 831.7L1482.3 831.5L1483.6 831.3L1484.9 831.2L1485.5 832.9L1486.2 827.7L1487.5 818.4L1488.8 809.0L1489.4 804.6L1490.1 800.3L1491.4 800.4L1491.7 799.5L1492.7 795.2L1494 789.6L1495.3 784.4L1496.6 781.8L1497.2 780.4L1497.9 780.8L1499.2 781.7L1500.5 782.6L1501.8 783.7L1503.1 782.8L1504.4 781.7L1505.7 780.5L1507 779.3L1508.3 778.0L1509.6 776.7L1510.9 776.0L1512.2 776.8L1513.5 777.7L1514.8 777.8L1516.1 778.1L1517.4 778.6L1518.7 779.8L1520 780.8L1521.3 781.6L1522.6 782.4L1523.9 783.0L1525.2 782.0L1526.5 780.9L1527.8 779.7L1529.1 778.6L1530.4 777.9L1531.7 777.3L1533 776.6L1534.3 777.9L1535.6 779.3L1536.9 780.8L1538.2 780.4L1539.5 779.8L1540.8 779.4L1542.1 779.1L1543.4 779.7L1544.7 780.8L1546 781.9L1547.3 783.1L1548.6 783.6L1549.9 783.2L1551.2 782.6L1552.5 782.0L1553.8 781.5L1555.1 781.0L1556.4 780.7L1557.7 780.4L1559 781.0L1560.3 863.2L1561.2 895.0L1561.6 895.0L1561.6 895Z" fill="#e04848"/><path d="M1123.5 895L1123.5 867.8L1124.8 867.7L1126.1 867.6L1127.4 867.6L1128.7 867.6L1130 867.6L1131.3 867.7L1132.6 867.7L1133.9 867.6L1135.2 867.6L1136.5 867.6L1137.8 867.6L1139.1 867.6L1140.4 867.6L1141.7 867.6L1143 867.6L1144.3 867.5L1145.6 867.5L1146.9 867.5L1148.2 867.5L1149.5 867.5L1150.8 868.8L1152.1 868.9L1153.4 867.5L1154.7 867.5L1156 867.5L1157.3 867.5L1158.6 867.4L1159.9 867.3L1161.2 867.3L1162.5 867.2L1163.8 867.2L1165.1 867.2L1166.4 867.2L1167.7 867.4L1169 867.7L1170.3 868.0L1171.6 868.3L1172.9 868.5L1174.2 868.6L1175.5 868.5L1176.8 868.4L1178.1 868.3L1179.4 868.2L1180.7 868.1L1182 868.1L1183.3 868.0L1184.6 867.9L1185.9 867.8L1187.2 867.6L1188.5 867.5L1189.8 867.2L1191.1 867.1L1192.4 867.0L1193.7 867.0L1195 867.1L1196.3 867.2L1197.6 867.3L1198.9 867.4L1200.2 867.5L1201.5 867.6L1202.8 867.5L1204.1 867.5L1205.4 867.4L1206.7 867.3L1208 867.2L1209.3 867.3L1210.6 867.4L1211.9 867.5L1213.2 867.7L1214.5 867.9L1215.8 868.1L1217.1 868.2L1218.4 868.3L1219.7 868.4L1221 868.3L1222.3 868.2L1223.6 868.1L1224.9 868.1L1226.2 868.0L1227.5 868.0L1228.8 868.1L1230.1 868.1L1231.4 868.2L1232.7 868.2L1234 868.2L1235.3 868.2L1236.6 868.2L1237.9 868.1L1239.2 868.1L1240.5 868.1L1241.8 868.1L1243.1 868.0L1244.4 867.8L1245.7 867.7L1247 867.7L1248.3 869.3L1249.6 869.5L1250.9 867.7L1252.2 867.7L1253.5 867.7L1254.8 867.7L1256.1 867.8L1257.4 867.9L1258.7 868.1L1260 868.2L1261.3 868.4L1262.6 868.5L1263.9 868.5L1265.2 868.4L1266.5 868.3L1267.8 868.2L1269.1 868.1L1270.4 868.2L1271.7 868.2L1273 868.2L1274.3 868.2L1275.6 868.1L1276.9 868.0L1278.2 868.0L1279.5 868.0L1280.8 868.0L1282.1 868.0L1283.4 867.9L1284.7 867.9L1286 867.8L1287.3 867.6L1288.6 867.4L1289.9 867.3L1291.2 867.3L1292.5 867.3L1293.8 867.4L1295.1 867.4L1296.4 867.4L1297.7 867.4L1299 867.5L1300.3 867.6L1301.6 867.7L1302.9 867.8L1304.2 868.0L1305.5 868.2L1306.8 868.3L1308.1 868.4L1309.4 868.4L1310.7 868.3L1312 868.2L1313.3 868.0L1314.6 867.8L1315.9 867.7L1317.2 867.8L1318.5 868.2L1319.8 868.6L1321.1 869.1L1322.4 869.6L1323.7 870.1L1325 870.5L1326.3 870.8L1327.6 870.8L1328.9 870.7L1330.2 870.5L1331.5 870.3L1332.8 870.1L1334.1 870.0L1335.4 870.5L1336.7 872.0L1338 872.5L1339.3 871.1L1340.6 870.5L1341.9 870.6L1343.2 870.7L1344.5 870.7L1345.8 870.6L1347.1 870.5L1348.4 870.5L1349.7 870.6L1351 870.8L1352.3 870.9L1353.6 870.9L1354.9 870.9L1356.2 870.6L1357.5 870.4L1358.8 870.2L1360.1 870.0L1361.4 869.8L1362.7 869.7L1364 869.7L1365.3 869.9L1366.6 870.0L1367.9 870.2L1368.3 870.2L1369.2 867.8L1370.5 864.3L1371.8 860.8L1372.2 859.0L1373.1 859.0L1374.4 859.1L1375.7 859.3L1377 859.5L1378.3 859.7L1379.6 860.0L1380.9 860.2L1382.2 860.3L1383.5 860.6L1384.8 859.7L1386.1 859.1L1387.4 859.2L1388.7 859.4L1390 859.5L1391.3 859.9L1392.6 860.3L1393.9 860.7L1395.2 861.0L1396.5 861.3L1397.8 861.0L1399.1 860.3L1400.4 859.8L1401.7 859.9L1403 860.2L1404.3 860.3L1405.6 860.3L1406.9 860.3L1408.2 860.3L1409.5 860.4L1410.8 860.6L1412.1 860.8L1413.4 861.5L1414.7 862.3L1416 861.8L1417.3 861.3L1418.6 861.2L1419.9 861.2L1421.2 861.3L1422.5 861.3L1423.8 861.3L1425.1 861.4L1426.4 861.7L1427.7 862.0L1429 862.2L1430.3 862.2L1431.6 861.3L1432.9 861.4L1434.2 861.4L1435.5 861.5L1436.8 861.6L1438.1 861.6L1439.4 861.6L1440.7 861.7L1442 861.9L1443.3 862.1L1444.6 862.4L1445.9 862.5L1446.4 862.5L1447.2 856.1L1448.5 845.5L1449.8 834.8L1451.1 825.0L1452.4 831.3L1453.7 831.6L1455 830.3L1456.3 831.4L1457.6 832.4L1458.9 833.4L1460.2 833.7L1461.5 832.9L1462.8 832.2L1464.1 832.0L1465.4 832.9L1466.7 832.8L1468 832.0L1469.3 831.3L1470.6 830.6L1471.9 831.2L1473.2 831.8L1474.5 832.4L1475.8 833.0L1477.1 833.5L1478.4 833.3L1479.7 833.2L1481 833.0L1482.3 832.8L1483.6 832.6L1484.9 832.6L1485.5 834.2L1486.2 829.1L1487.5 819.7L1488.8 810.3L1489.4 805.9L1490.1 801.6L1491.4 801.7L1491.7 800.8L1492.7 796.5L1494 790.9L1495.3 785.7L1496.6 783.1L1497.2 781.7L1497.9 782.1L1499.2 783.0L1500.5 784.0L1501.8 785.0L1503.1 784.0L1504.4 782.8L1505.7 781.7L1507 780.4L1508.3 779.2L1509.6 777.9L1510.9 777.2L1512.2 778.1L1513.5 779.0L1514.8 779.2L1516.1 779.4L1517.4 779.9L1518.7 781.1L1520 782.1L1521.3 782.9L1522.6 783.6L1523.9 784.2L1525.2 783.2L1526.5 782.1L1527.8 780.9L1529.1 780.0L1530.4 779.2L1531.7 778.6L1533 777.9L1534.3 779.2L1535.6 780.6L1536.9 782.1L1538.2 781.7L1539.5 781.1L1540.8 780.7L1542.1 780.4L1543.4 780.9L1544.7 782.0L1546 783.1L1547.3 784.3L1548.6 784.8L1549.9 784.4L1551.2 783.8L1552.5 783.2L1553.8 782.7L1555.1 782.2L1556.4 781.9L1557.7 781.6L1559 782.2L1560.3 863.6L1561.2 895.0L1561.6 895.0L1561.6 895Z" fill="#80c8e8"/><path d="M1123.5 895L1123.5 869.7L1124.8 869.7L1126.1 869.6L1127.4 869.5L1128.7 869.5L1130 869.5L1131.3 869.5L1132.6 869.5L1133.9 869.5L1135.2 869.5L1136.5 869.5L1137.8 869.5L1139.1 869.5L1140.4 869.5L1141.7 869.5L1143 869.4L1144.3 869.4L1145.6 869.4L1146.9 869.3L1148.2 869.3L1149.5 869.3L1150.8 870.6L1152.1 870.8L1153.4 869.3L1154.7 869.3L1156 869.4L1157.3 869.3L1158.6 869.3L1159.9 869.2L1161.2 869.2L1162.5 869.2L1163.8 869.1L1165.1 869.1L1166.4 869.2L1167.7 869.4L1169 869.7L1170.3 870.0L1171.6 870.3L1172.9 870.5L1174.2 870.5L1175.5 870.5L1176.8 870.4L1178.1 870.2L1179.4 870.1L1180.7 870.0L1182 869.9L1183.3 869.9L1184.6 869.8L1185.9 869.7L1187.2 869.5L1188.5 869.3L1189.8 869.1L1191.1 869.0L1192.4 868.9L1193.7 868.9L1195 869.0L1196.3 869.2L1197.6 869.3L1198.9 869.4L1200.2 869.5L1201.5 869.5L1202.8 869.5L1204.1 869.5L1205.4 869.4L1206.7 869.3L1208 869.2L1209.3 869.2L1210.6 869.2L1211.9 869.4L1213.2 869.6L1214.5 869.8L1215.8 870.0L1217.1 870.1L1218.4 870.3L1219.7 870.3L1221 870.2L1222.3 870.1L1223.6 870.1L1224.9 870.0L1226.2 870.0L1227.5 869.9L1228.8 870.0L1230.1 870.0L1231.4 870.0L1232.7 870.1L1234 870.1L1235.3 870.1L1236.6 870.1L1237.9 870.0L1239.2 870.0L1240.5 869.9L1241.8 869.9L1243.1 869.8L1244.4 869.7L1245.7 869.6L1247 869.6L1248.3 871.3L1249.6 871.5L1250.9 869.7L1252.2 869.7L1253.5 869.7L1254.8 869.7L1256.1 869.7L1257.4 869.8L1258.7 870.0L1260 870.1L1261.3 870.3L1262.6 870.3L1263.9 870.4L1265.2 870.3L1266.5 870.2L1267.8 870.2L1269.1 870.1L1270.4 870.1L1271.7 870.1L1273 870.1L1274.3 870.1L1275.6 870.0L1276.9 870.0L1278.2 870.0L1279.5 870.0L1280.8 870.0L1282.1 869.9L1283.4 869.9L1284.7 869.8L1286 869.7L1287.3 869.5L1288.6 869.3L1289.9 869.2L1291.2 869.2L1292.5 869.2L1293.8 869.2L1295.1 869.3L1296.4 869.3L1297.7 869.3L1299 869.4L1300.3 869.5L1301.6 869.6L1302.9 869.7L1304.2 869.9L1305.5 870.0L1306.8 870.1L1308.1 870.2L1309.4 870.2L1310.7 870.2L1312 870.0L1313.3 869.9L1314.6 869.7L1315.9 869.6L1317.2 869.8L1318.5 870.1L1319.8 870.5L1321.1 871.0L1322.4 871.4L1323.7 871.9L1325 872.3L1326.3 872.6L1327.6 872.6L1328.9 872.5L1330.2 872.3L1331.5 872.2L1332.8 872.0L1334.1 871.9L1335.4 872.4L1336.7 873.9L1338 874.3L1339.3 873.0L1340.6 872.3L1341.9 872.5L1343.2 872.6L1344.5 872.6L1345.8 872.5L1347.1 872.4L1348.4 872.4L1349.7 872.5L1351 872.7L1352.3 872.8L1353.6 872.8L1354.9 872.8L1356.2 872.6L1357.5 872.4L1358.8 872.2L1360.1 871.9L1361.4 871.7L1362.7 871.6L1364 871.6L1365.3 871.7L1366.6 871.9L1367.9 872.1L1368.3 872.1L1369.2 869.7L1370.5 866.2L1371.8 862.8L1372.2 861.0L1373.1 861.0L1374.4 861.1L1375.7 861.3L1377 861.6L1378.3 861.8L1379.6 862.0L1380.9 862.2L1382.2 862.4L1383.5 862.6L1384.8 861.7L1386.1 861.1L1387.4 861.3L1388.7 861.4L1390 861.6L1391.3 862.0L1392.6 862.4L1393.9 862.8L1395.2 863.1L1396.5 863.3L1397.8 863.1L1399.1 862.4L1400.4 861.8L1401.7 862.0L1403 862.2L1404.3 862.4L1405.6 862.4L1406.9 862.4L1408.2 862.4L1409.5 862.5L1410.8 862.7L1412.1 862.8L1413.4 863.5L1414.7 864.3L1416 863.8L1417.3 863.3L1418.6 863.2L1419.9 863.2L1421.2 863.3L1422.5 863.3L1423.8 863.3L1425.1 863.5L1426.4 863.8L1427.7 864.1L1429 864.3L1430.3 864.3L1431.6 863.4L1432.9 863.5L1434.2 863.5L1435.5 863.6L1436.8 863.6L1438.1 863.6L1439.4 863.6L1440.7 863.7L1442 863.9L1443.3 864.2L1444.6 864.4L1445.9 864.5L1446.4 864.6L1447.2 858.1L1448.5 847.4L1449.8 836.8L1451.1 827.0L1452.4 833.3L1453.7 833.6L1455 832.3L1456.3 833.3L1457.6 834.3L1458.9 835.4L1460.2 835.7L1461.5 834.9L1462.8 834.2L1464.1 834.0L1465.4 834.9L1466.7 834.8L1468 834.1L1469.3 833.3L1470.6 832.6L1471.9 833.2L1473.2 833.9L1474.5 834.5L1475.8 835.1L1477.1 835.5L1478.4 835.4L1479.7 835.2L1481 835.1L1482.3 834.9L1483.6 834.7L1484.9 834.6L1485.5 836.2L1486.2 831.0L1487.5 821.6L1488.8 812.1L1489.4 807.8L1490.1 803.5L1491.4 803.6L1491.7 802.7L1492.7 798.3L1494 792.8L1495.3 787.6L1496.6 785.0L1497.2 783.6L1497.9 784.1L1499.2 785.0L1500.5 785.9L1501.8 786.9L1503.1 785.9L1504.4 784.7L1505.7 783.6L1507 782.3L1508.3 781.1L1509.6 779.8L1510.9 779.1L1512.2 780.0L1513.5 781.0L1514.8 781.1L1516.1 781.3L1517.4 781.8L1518.7 783.0L1520 784.0L1521.3 784.8L1522.6 785.6L1523.9 786.1L1525.2 785.1L1526.5 784.0L1527.8 782.8L1529.1 781.8L1530.4 781.1L1531.7 780.4L1533 779.7L1534.3 781.0L1535.6 782.4L1536.9 784.0L1538.2 783.6L1539.5 783.0L1540.8 782.5L1542.1 782.2L1543.4 782.8L1544.7 783.8L1546 784.9L1547.3 786.2L1548.6 786.7L1549.9 786.3L1551.2 785.8L1552.5 785.2L1553.8 784.7L1555.1 784.2L1556.4 783.8L1557.7 783.5L1559 784.0L1560.3 864.4L1561.2 895.0L1561.6 895.0L1561.6 895Z" fill="#b05a28"/><path d="M1123.5 895L1123.5 871.7L1124.8 871.7L1126.1 871.6L1127.4 871.6L1128.7 871.6L1130 871.6L1131.3 871.6L1132.6 871.5L1133.9 871.5L1135.2 871.5L1136.5 871.5L1137.8 871.5L1139.1 871.6L1140.4 871.6L1141.7 871.5L1143 871.5L1144.3 871.5L1145.6 871.5L1146.9 871.5L1148.2 871.5L1149.5 871.5L1150.8 872.8L1152.1 872.9L1153.4 871.5L1154.7 871.5L1156 871.5L1157.3 871.5L1158.6 871.4L1159.9 871.3L1161.2 871.3L1162.5 871.2L1163.8 871.2L1165.1 871.2L1166.4 871.3L1167.7 871.5L1169 871.8L1170.3 872.1L1171.6 872.3L1172.9 872.5L1174.2 872.6L1175.5 872.5L1176.8 872.4L1178.1 872.3L1179.4 872.2L1180.7 872.1L1182 872.0L1183.3 871.9L1184.6 871.8L1185.9 871.7L1187.2 871.6L1188.5 871.4L1189.8 871.2L1191.1 871.1L1192.4 871.1L1193.7 871.1L1195 871.2L1196.3 871.3L1197.6 871.4L1198.9 871.5L1200.2 871.6L1201.5 871.7L1202.8 871.7L1204.1 871.6L1205.4 871.5L1206.7 871.4L1208 871.4L1209.3 871.3L1210.6 871.3L1211.9 871.4L1213.2 871.6L1214.5 871.8L1215.8 872.0L1217.1 872.2L1218.4 872.3L1219.7 872.4L1221 872.3L1222.3 872.3L1223.6 872.2L1224.9 872.1L1226.2 872.1L1227.5 872.1L1228.8 872.1L1230.1 872.1L1231.4 872.2L1232.7 872.2L1234 872.2L1235.3 872.2L1236.6 872.2L1237.9 872.2L1239.2 872.1L1240.5 872.0L1241.8 871.9L1243.1 871.8L1244.4 871.7L1245.7 871.7L1247 871.7L1248.3 873.4L1249.6 873.6L1250.9 871.8L1252.2 871.8L1253.5 871.8L1254.8 871.8L1256.1 871.8L1257.4 871.9L1258.7 872.1L1260 872.2L1261.3 872.3L1262.6 872.4L1263.9 872.4L1265.2 872.4L1266.5 872.3L1267.8 872.3L1269.1 872.2L1270.4 872.2L1271.7 872.1L1273 872.1L1274.3 872.1L1275.6 872.2L1276.9 872.2L1278.2 872.2L1279.5 872.2L1280.8 872.1L1282.1 872.1L1283.4 872.1L1284.7 872.0L1286 871.8L1287.3 871.6L1288.6 871.5L1289.9 871.3L1291.2 871.3L1292.5 871.3L1293.8 871.3L1295.1 871.4L1296.4 871.4L1297.7 871.5L1299 871.6L1300.3 871.6L1301.6 871.7L1302.9 871.8L1304.2 872.0L1305.5 872.2L1306.8 872.3L1308.1 872.4L1309.4 872.4L1310.7 872.3L1312 872.2L1313.3 872.0L1314.6 871.9L1315.9 871.7L1317.2 871.9L1318.5 872.2L1319.8 872.6L1321.1 873.1L1322.4 873.5L1323.7 874.0L1325 874.4L1326.3 874.7L1327.6 874.7L1328.9 874.6L1330.2 874.4L1331.5 874.2L1332.8 874.1L1334.1 874.0L1335.4 874.4L1336.7 875.9L1338 876.4L1339.3 875.0L1340.6 874.4L1341.9 874.5L1343.2 874.7L1344.5 874.7L1345.8 874.6L1347.1 874.6L1348.4 874.6L1349.7 874.7L1351 874.7L1352.3 874.8L1353.6 874.8L1354.9 874.8L1356.2 874.6L1357.5 874.4L1358.8 874.2L1360.1 874.0L1361.4 873.8L1362.7 873.7L1364 873.7L1365.3 873.8L1366.6 874.0L1367.9 874.2L1368.3 874.2L1369.2 871.8L1370.5 868.4L1371.8 865.1L1372.2 863.3L1373.1 863.3L1374.4 863.4L1375.7 863.6L1377 863.9L1378.3 864.1L1379.6 864.3L1380.9 864.5L1382.2 864.6L1383.5 864.8L1384.8 864.0L1386.1 863.5L1387.4 863.6L1388.7 863.8L1390 863.9L1391.3 864.2L1392.6 864.6L1393.9 865.1L1395.2 865.4L1396.5 865.6L1397.8 865.4L1399.1 864.6L1400.4 864.1L1401.7 864.3L1403 864.5L1404.3 864.6L1405.6 864.7L1406.9 864.7L1408.2 864.7L1409.5 864.8L1410.8 864.9L1412.1 865.1L1413.4 865.8L1414.7 866.6L1416 866.1L1417.3 865.5L1418.6 865.5L1419.9 865.5L1421.2 865.6L1422.5 865.6L1423.8 865.7L1425.1 865.8L1426.4 866.1L1427.7 866.4L1429 866.6L1430.3 866.5L1431.6 865.7L1432.9 865.8L1434.2 865.8L1435.5 865.9L1436.8 865.9L1438.1 865.9L1439.4 865.9L1440.7 866.0L1442 866.1L1443.3 866.4L1444.6 866.6L1445.9 866.7L1446.4 866.8L1447.2 860.3L1448.5 849.6L1449.8 838.9L1451.1 829.1L1452.4 835.4L1453.7 835.7L1455 834.4L1456.3 835.5L1457.6 836.6L1458.9 837.6L1460.2 837.9L1461.5 837.1L1462.8 836.4L1464.1 836.2L1465.4 837.1L1466.7 836.9L1468 836.2L1469.3 835.5L1470.6 834.8L1471.9 835.4L1473.2 836.0L1474.5 836.6L1475.8 837.2L1477.1 837.6L1478.4 837.5L1479.7 837.4L1481 837.2L1482.3 837.0L1483.6 836.9L1484.9 836.7L1485.5 838.4L1486.2 833.1L1487.5 823.7L1488.8 814.2L1489.4 809.8L1490.1 805.5L1491.4 805.7L1491.7 804.8L1492.7 800.5L1494 794.9L1495.3 789.7L1496.6 787.2L1497.2 785.8L1497.9 786.3L1499.2 787.1L1500.5 788.1L1501.8 789.0L1503.1 788.1L1504.4 786.9L1505.7 785.7L1507 784.4L1508.3 783.2L1509.6 781.9L1510.9 781.3L1512.2 782.2L1513.5 783.1L1514.8 783.2L1516.1 783.4L1517.4 783.8L1518.7 785.0L1520 786.0L1521.3 786.8L1522.6 787.6L1523.9 788.2L1525.2 787.2L1526.5 786.1L1527.8 784.9L1529.1 784.0L1530.4 783.2L1531.7 782.5L1533 781.8L1534.3 783.1L1535.6 784.5L1536.9 786.0L1538.2 785.6L1539.5 785.1L1540.8 784.6L1542.1 784.4L1543.4 784.9L1544.7 785.9L1546 787.1L1547.3 788.3L1548.6 788.8L1549.9 788.4L1551.2 787.9L1552.5 787.3L1553.8 786.8L1555.1 786.3L1556.4 785.8L1557.7 785.5L1559 786.1L1560.3 865.2L1561.2 895.0L1561.6 895.0L1561.6 895Z" fill="#6a9a30"/><path d="M1123.5 895L1123.5 873.8L1124.8 873.8L1126.1 873.7L1127.4 873.7L1128.7 873.7L1130 873.7L1131.3 873.6L1132.6 873.6L1133.9 873.6L1135.2 873.6L1136.5 873.6L1137.8 873.6L1139.1 873.6L1140.4 873.6L1141.7 873.6L1143 873.5L1144.3 873.5L1145.6 873.5L1146.9 873.5L1148.2 873.6L1149.5 873.6L1150.8 874.9L1152.1 875.1L1153.4 873.7L1154.7 873.7L1156 873.7L1157.3 873.6L1158.6 873.6L1159.9 873.5L1161.2 873.4L1162.5 873.4L1163.8 873.4L1165.1 873.4L1166.4 873.4L1167.7 873.6L1169 873.9L1170.3 874.2L1171.6 874.4L1172.9 874.6L1174.2 874.7L1175.5 874.6L1176.8 874.5L1178.1 874.4L1179.4 874.3L1180.7 874.2L1182 874.1L1183.3 874.0L1184.6 874.0L1185.9 873.8L1187.2 873.7L1188.5 873.5L1189.8 873.4L1191.1 873.3L1192.4 873.3L1193.7 873.3L1195 873.4L1196.3 873.5L1197.6 873.6L1198.9 873.7L1200.2 873.7L1201.5 873.7L1202.8 873.7L1204.1 873.7L1205.4 873.6L1206.7 873.5L1208 873.5L1209.3 873.5L1210.6 873.5L1211.9 873.6L1213.2 873.7L1214.5 873.9L1215.8 874.1L1217.1 874.3L1218.4 874.4L1219.7 874.4L1221 874.4L1222.3 874.3L1223.6 874.2L1224.9 874.2L1226.2 874.2L1227.5 874.2L1228.8 874.2L1230.1 874.2L1231.4 874.2L1232.7 874.3L1234 874.3L1235.3 874.4L1236.6 874.4L1237.9 874.4L1239.2 874.3L1240.5 874.2L1241.8 874.1L1243.1 874.0L1244.4 873.9L1245.7 873.8L1247 873.9L1248.3 875.5L1249.6 875.7L1250.9 873.9L1252.2 873.9L1253.5 873.9L1254.8 873.9L1256.1 874.0L1257.4 874.1L1258.7 874.2L1260 874.3L1261.3 874.4L1262.6 874.5L1263.9 874.5L1265.2 874.5L1266.5 874.5L1267.8 874.4L1269.1 874.4L1270.4 874.3L1271.7 874.3L1273 874.3L1274.3 874.3L1275.6 874.3L1276.9 874.3L1278.2 874.3L1279.5 874.3L1280.8 874.2L1282.1 874.2L1283.4 874.2L1284.7 874.1L1286 873.9L1287.3 873.7L1288.6 873.6L1289.9 873.4L1291.2 873.4L1292.5 873.4L1293.8 873.4L1295.1 873.4L1296.4 873.5L1297.7 873.5L1299 873.6L1300.3 873.7L1301.6 873.8L1302.9 873.9L1304.2 874.1L1305.5 874.3L1306.8 874.5L1308.1 874.5L1309.4 874.5L1310.7 874.4L1312 874.2L1313.3 874.0L1314.6 873.9L1315.9 873.7L1317.2 873.9L1318.5 874.3L1319.8 874.7L1321.1 875.2L1322.4 875.6L1323.7 876.1L1325 876.5L1326.3 876.8L1327.6 876.8L1328.9 876.7L1330.2 876.5L1331.5 876.4L1332.8 876.2L1334.1 876.1L1335.4 876.5L1336.7 878.0L1338 878.5L1339.3 877.1L1340.6 876.5L1341.9 876.6L1343.2 876.7L1344.5 876.8L1345.8 876.8L1347.1 876.8L1348.4 876.7L1349.7 876.8L1351 876.8L1352.3 876.9L1353.6 876.9L1354.9 876.9L1356.2 876.7L1357.5 876.5L1358.8 876.2L1360.1 876.0L1361.4 875.9L1362.7 875.8L1364 875.8L1365.3 875.9L1366.6 876.1L1367.9 876.3L1368.3 876.3L1369.2 873.9L1370.5 870.6L1371.8 867.3L1372.2 865.6L1373.1 865.5L1374.4 865.6L1375.7 865.9L1377 866.1L1378.3 866.4L1379.6 866.6L1380.9 866.8L1382.2 867.0L1383.5 867.2L1384.8 866.3L1386.1 865.7L1387.4 865.9L1388.7 866.0L1390 866.2L1391.3 866.5L1392.6 866.9L1393.9 867.4L1395.2 867.7L1396.5 868.0L1397.8 867.7L1399.1 866.9L1400.4 866.3L1401.7 866.5L1403 866.7L1404.3 866.8L1405.6 866.9L1406.9 866.9L1408.2 866.9L1409.5 867.0L1410.8 867.2L1412.1 867.3L1413.4 868.0L1414.7 868.9L1416 868.4L1417.3 867.9L1418.6 867.8L1419.9 867.8L1421.2 867.9L1422.5 867.9L1423.8 867.9L1425.1 868.1L1426.4 868.3L1427.7 868.6L1429 868.9L1430.3 868.8L1431.6 868.0L1432.9 868.0L1434.2 868.1L1435.5 868.1L1436.8 868.2L1438.1 868.2L1439.4 868.2L1440.7 868.2L1442 868.4L1443.3 868.7L1444.6 868.9L1445.9 869.0L1446.4 869.0L1447.2 862.5L1448.5 851.8L1449.8 841.1L1451.1 831.3L1452.4 837.6L1453.7 837.9L1455 836.7L1456.3 837.8L1457.6 838.8L1458.9 839.8L1460.2 840.2L1461.5 839.4L1462.8 838.7L1464.1 838.5L1465.4 839.3L1466.7 839.2L1468 838.4L1469.3 837.7L1470.6 837.0L1471.9 837.7L1473.2 838.3L1474.5 838.8L1475.8 839.3L1477.1 839.7L1478.4 839.6L1479.7 839.5L1481 839.4L1482.3 839.2L1483.6 839.0L1484.9 839.0L1485.5 840.6L1486.2 835.4L1487.5 825.9L1488.8 816.4L1489.4 812.0L1490.1 807.7L1491.4 807.9L1491.7 807.0L1492.7 802.6L1494 797.0L1495.3 791.8L1496.6 789.2L1497.2 787.9L1497.9 788.3L1499.2 789.2L1500.5 790.2L1501.8 791.2L1503.1 790.2L1504.4 789.0L1505.7 787.8L1507 786.5L1508.3 785.3L1509.6 784.0L1510.9 783.4L1512.2 784.3L1513.5 785.2L1514.8 785.3L1516.1 785.4L1517.4 785.8L1518.7 787.0L1520 788.1L1521.3 788.9L1522.6 789.6L1523.9 790.2L1525.2 789.3L1526.5 788.2L1527.8 787.0L1529.1 786.0L1530.4 785.2L1531.7 784.5L1533 783.8L1534.3 785.1L1535.6 786.6L1536.9 788.1L1538.2 787.7L1539.5 787.2L1540.8 786.8L1542.1 786.5L1543.4 787.1L1544.7 788.0L1546 789.1L1547.3 790.3L1548.6 790.8L1549.9 790.4L1551.2 789.9L1552.5 789.3L1553.8 788.8L1555.1 788.2L1556.4 787.8L1557.7 787.5L1559 788.1L1560.3 866.0L1561.2 895.0L1561.6 895.0L1561.6 895Z" fill="#a078d8"/><path d="M1123.5 895L1123.5 875.3L1124.8 875.3L1126.1 875.3L1127.4 875.3L1128.7 875.3L1130 875.3L1131.3 875.3L1132.6 875.3L1133.9 875.3L1135.2 875.2L1136.5 875.2L1137.8 875.2L1139.1 875.3L1140.4 875.2L1141.7 875.2L1143 875.2L1144.3 875.1L1145.6 875.1L1146.9 875.1L1148.2 875.1L1149.5 875.2L1150.8 876.5L1152.1 876.7L1153.4 875.3L1154.7 875.2L1156 875.2L1157.3 875.2L1158.6 875.1L1159.9 875.0L1161.2 875.0L1162.5 874.9L1163.8 874.9L1165.1 874.9L1166.4 875.0L1167.7 875.2L1169 875.4L1170.3 875.7L1171.6 875.9L1172.9 876.1L1174.2 876.2L1175.5 876.2L1176.8 876.1L1178.1 876.0L1179.4 875.9L1180.7 875.8L1182 875.8L1183.3 875.7L1184.6 875.6L1185.9 875.5L1187.2 875.3L1188.5 875.2L1189.8 875.0L1191.1 874.9L1192.4 874.9L1193.7 874.9L1195 875.0L1196.3 875.1L1197.6 875.1L1198.9 875.2L1200.2 875.3L1201.5 875.3L1202.8 875.3L1204.1 875.3L1205.4 875.2L1206.7 875.2L1208 875.1L1209.3 875.1L1210.6 875.1L1211.9 875.2L1213.2 875.4L1214.5 875.6L1215.8 875.8L1217.1 876.0L1218.4 876.1L1219.7 876.1L1221 876.0L1222.3 876.0L1223.6 875.9L1224.9 875.8L1226.2 875.8L1227.5 875.7L1228.8 875.7L1230.1 875.7L1231.4 875.8L1232.7 875.9L1234 875.9L1235.3 876.0L1236.6 876.0L1237.9 876.0L1239.2 875.9L1240.5 875.8L1241.8 875.7L1243.1 875.6L1244.4 875.5L1245.7 875.4L1247 875.4L1248.3 877.1L1249.6 877.2L1250.9 875.4L1252.2 875.4L1253.5 875.5L1254.8 875.5L1256.1 875.6L1257.4 875.6L1258.7 875.8L1260 875.9L1261.3 876.1L1262.6 876.2L1263.9 876.2L1265.2 876.2L1266.5 876.1L1267.8 876.1L1269.1 876.0L1270.4 876.0L1271.7 875.9L1273 875.9L1274.3 875.9L1275.6 875.8L1276.9 875.8L1278.2 875.8L1279.5 875.8L1280.8 875.8L1282.1 875.9L1283.4 875.8L1284.7 875.7L1286 875.6L1287.3 875.4L1288.6 875.2L1289.9 875.1L1291.2 875.0L1292.5 875.0L1293.8 875.1L1295.1 875.1L1296.4 875.1L1297.7 875.2L1299 875.3L1300.3 875.3L1301.6 875.4L1302.9 875.5L1304.2 875.7L1305.5 875.9L1306.8 876.0L1308.1 876.1L1309.4 876.1L1310.7 876.0L1312 875.8L1313.3 875.7L1314.6 875.5L1315.9 875.3L1317.2 875.5L1318.5 875.8L1319.8 876.3L1321.1 876.7L1322.4 877.2L1323.7 877.6L1325 878.0L1326.3 878.3L1327.6 878.3L1328.9 878.3L1330.2 878.1L1331.5 878.0L1332.8 877.9L1334.1 877.7L1335.4 878.1L1336.7 879.6L1338 880.0L1339.3 878.6L1340.6 878.0L1341.9 878.1L1343.2 878.3L1344.5 878.3L1345.8 878.4L1347.1 878.4L1348.4 878.4L1349.7 878.4L1351 878.4L1352.3 878.4L1353.6 878.4L1354.9 878.4L1356.2 878.3L1357.5 878.1L1358.8 877.9L1360.1 877.6L1361.4 877.5L1362.7 877.4L1364 877.4L1365.3 877.5L1366.6 877.7L1367.9 877.9L1368.3 877.9L1369.2 875.4L1370.5 871.8L1371.8 868.3L1372.2 866.6L1373.1 866.5L1374.4 866.6L1375.7 866.8L1377 867.0L1378.3 867.2L1379.6 867.5L1380.9 867.7L1382.2 867.9L1383.5 868.0L1384.8 867.2L1386.1 866.6L1387.4 866.7L1388.7 866.9L1390 867.1L1391.3 867.4L1392.6 867.9L1393.9 868.3L1395.2 868.6L1396.5 868.8L1397.8 868.6L1399.1 867.8L1400.4 867.2L1401.7 867.4L1403 867.6L1404.3 867.7L1405.6 867.8L1406.9 867.9L1408.2 867.9L1409.5 868.0L1410.8 868.1L1412.1 868.2L1413.4 868.9L1414.7 869.8L1416 869.3L1417.3 868.8L1418.6 868.7L1419.9 868.8L1421.2 868.9L1422.5 868.9L1423.8 868.9L1425.1 869.0L1426.4 869.2L1427.7 869.4L1429 869.7L1430.3 869.6L1431.6 868.8L1432.9 868.8L1434.2 868.9L1435.5 869.0L1436.8 869.0L1438.1 869.0L1439.4 869.1L1440.7 869.2L1442 869.4L1443.3 869.6L1444.6 869.8L1445.9 869.9L1446.4 869.9L1447.2 863.5L1448.5 853.0L1449.8 842.4L1451.1 832.8L1452.4 839.1L1453.7 839.4L1455 838.1L1456.3 839.6L1457.6 840.5L1458.9 841.4L1460.2 841.8L1461.5 841.3L1462.8 840.9L1464.1 840.7L1465.4 841.1L1466.7 840.9L1468 840.4L1469.3 839.9L1470.6 839.3L1471.9 839.8L1473.2 840.2L1474.5 840.6L1475.8 840.9L1477.1 841.3L1478.4 841.3L1479.7 841.3L1481 841.3L1482.3 841.3L1483.6 841.3L1484.9 841.3L1485.5 842.2L1486.2 837.1L1487.5 827.7L1488.8 818.4L1489.4 814.1L1490.1 809.8L1491.4 809.9L1491.7 809.0L1492.7 804.7L1494 799.2L1495.3 794.1L1496.6 791.6L1497.2 790.2L1497.9 790.7L1499.2 791.6L1500.5 792.5L1501.8 793.4L1503.1 792.4L1504.4 791.2L1505.7 790.0L1507 788.8L1508.3 787.6L1509.6 786.3L1510.9 785.8L1512.2 786.7L1513.5 787.6L1514.8 787.7L1516.1 787.8L1517.4 788.2L1518.7 789.3L1520 790.4L1521.3 791.2L1522.6 791.9L1523.9 792.5L1525.2 791.6L1526.5 790.5L1527.8 789.4L1529.1 788.4L1530.4 787.6L1531.7 786.9L1533 786.2L1534.3 787.5L1535.6 788.9L1536.9 790.4L1538.2 790.1L1539.5 789.5L1540.8 789.1L1542.1 788.8L1543.4 789.3L1544.7 790.3L1546 791.4L1547.3 792.6L1548.6 793.1L1549.9 792.7L1551.2 792.1L1552.5 791.6L1553.8 791.1L1555.1 790.5L1556.4 790.1L1557.7 789.8L1559 790.3L1560.3 866.8L1561.2 895.0L1561.6 895.0L1561.6 895Z" fill="#9a7a2c"/><path d="M1123.5 895L1123.5 875.3L1124.8 875.3L1126.1 875.3L1127.4 875.3L1128.7 875.3L1130 875.3L1131.3 875.3L1132.6 875.3L1133.9 875.3L1135.2 875.2L1136.5 875.2L1137.8 875.2L1139.1 875.3L1140.4 875.2L1141.7 875.2L1143 875.2L1144.3 875.1L1145.6 875.1L1146.9 875.1L1148.2 875.1L1149.5 875.2L1150.8 876.5L1152.1 876.7L1153.4 875.3L1154.7 875.2L1156 875.2L1157.3 875.2L1158.6 875.1L1159.9 875.0L1161.2 875.0L1162.5 874.9L1163.8 874.9L1165.1 874.9L1166.4 875.0L1167.7 875.2L1169 875.4L1170.3 875.7L1171.6 875.9L1172.9 876.1L1174.2 876.2L1175.5 876.2L1176.8 876.1L1178.1 876.0L1179.4 875.9L1180.7 875.8L1182 875.8L1183.3 875.7L1184.6 875.6L1185.9 875.5L1187.2 875.3L1188.5 875.2L1189.8 875.0L1191.1 874.9L1192.4 874.9L1193.7 874.9L1195 875.0L1196.3 875.1L1197.6 875.1L1198.9 875.2L1200.2 875.3L1201.5 875.3L1202.8 875.3L1204.1 875.3L1205.4 875.2L1206.7 875.2L1208 875.1L1209.3 875.1L1210.6 875.1L1211.9 875.2L1213.2 875.4L1214.5 875.6L1215.8 875.8L1217.1 876.0L1218.4 876.1L1219.7 876.1L1221 876.0L1222.3 876.0L1223.6 875.9L1224.9 875.8L1226.2 875.8L1227.5 875.7L1228.8 875.7L1230.1 875.7L1231.4 875.8L1232.7 875.9L1234 875.9L1235.3 876.0L1236.6 876.0L1237.9 876.0L1239.2 875.9L1240.5 875.8L1241.8 875.7L1243.1 875.6L1244.4 875.5L1245.7 875.4L1247 875.4L1248.3 877.1L1249.6 877.2L1250.9 875.4L1252.2 875.4L1253.5 875.5L1254.8 875.5L1256.1 875.6L1257.4 875.6L1258.7 875.8L1260 875.9L1261.3 876.1L1262.6 876.2L1263.9 876.2L1265.2 876.2L1266.5 876.1L1267.8 876.1L1269.1 876.0L1270.4 876.0L1271.7 875.9L1273 875.9L1274.3 875.9L1275.6 875.8L1276.9 875.8L1278.2 875.8L1279.5 875.8L1280.8 875.8L1282.1 875.9L1283.4 875.8L1284.7 875.7L1286 875.6L1287.3 875.4L1288.6 875.2L1289.9 875.1L1291.2 875.0L1292.5 875.0L1293.8 875.1L1295.1 875.1L1296.4 875.1L1297.7 875.2L1299 875.3L1300.3 875.3L1301.6 875.4L1302.9 875.5L1304.2 875.7L1305.5 875.9L1306.8 876.0L1308.1 876.1L1309.4 876.1L1310.7 876.0L1312 875.8L1313.3 875.7L1314.6 875.5L1315.9 875.3L1317.2 875.5L1318.5 875.8L1319.8 876.3L1321.1 876.7L1322.4 877.2L1323.7 877.6L1325 878.0L1326.3 878.3L1327.6 878.3L1328.9 878.3L1330.2 878.1L1331.5 878.0L1332.8 877.9L1334.1 877.7L1335.4 878.1L1336.7 879.6L1338 880.0L1339.3 878.6L1340.6 878.0L1341.9 878.1L1343.2 878.3L1344.5 878.3L1345.8 878.4L1347.1 878.4L1348.4 878.4L1349.7 878.4L1351 878.4L1352.3 878.4L1353.6 878.4L1354.9 878.4L1356.2 878.3L1357.5 878.1L1358.8 877.9L1360.1 877.6L1361.4 877.5L1362.7 877.4L1364 877.4L1365.3 877.5L1366.6 877.7L1367.9 877.9L1368.3 877.9L1369.2 875.4L1370.5 871.8L1371.8 868.3L1372.2 866.6L1373.1 866.5L1374.4 866.6L1375.7 866.8L1377 867.0L1378.3 867.2L1379.6 867.5L1380.9 867.7L1382.2 867.9L1383.5 868.0L1384.8 867.2L1386.1 866.6L1387.4 866.7L1388.7 866.9L1390 867.1L1391.3 867.4L1392.6 867.9L1393.9 868.3L1395.2 868.6L1396.5 868.8L1397.8 868.6L1399.1 867.8L1400.4 867.2L1401.7 867.4L1403 867.6L1404.3 867.7L1405.6 867.8L1406.9 867.9L1408.2 867.9L1409.5 868.0L1410.8 868.1L1412.1 868.2L1413.4 868.9L1414.7 869.8L1416 869.3L1417.3 868.8L1418.6 868.7L1419.9 868.8L1421.2 868.9L1422.5 868.9L1423.8 868.9L1425.1 869.0L1426.4 869.2L1427.7 869.4L1429 869.7L1430.3 869.6L1431.6 868.8L1432.9 868.8L1434.2 868.9L1435.5 869.0L1436.8 869.0L1438.1 869.0L1439.4 869.1L1440.7 869.2L1442 869.4L1443.3 869.6L1444.6 869.8L1445.9 869.9L1446.4 869.9L1447.2 863.5L1448.5 853.0L1449.8 842.4L1451.1 832.8L1452.4 839.1L1453.7 839.4L1455 838.1L1456.3 839.6L1457.6 840.5L1458.9 841.4L1460.2 841.8L1461.5 841.3L1462.8 840.9L1464.1 840.7L1465.4 841.1L1466.7 840.9L1468 840.4L1469.3 839.9L1470.6 839.3L1471.9 839.8L1473.2 840.2L1474.5 840.6L1475.8 840.9L1477.1 841.3L1478.4 841.3L1479.7 841.3L1481 841.3L1482.3 841.3L1483.6 841.3L1484.9 841.3L1485.5 842.2L1486.2 837.1L1487.5 827.7L1488.8 818.4L1489.4 814.1L1490.1 809.8L1491.4 809.9L1491.7 810.0L1492.7 810.1L1494 810.2L1495.3 810.6L1496.6 811.1L1497.2 810.4L1497.9 810.8L1499.2 811.5L1500.5 812.2L1501.8 813.0L1503.1 812.2L1504.4 811.3L1505.7 810.3L1507 809.3L1508.3 808.4L1509.6 807.4L1510.9 806.9L1512.2 807.5L1513.5 808.2L1514.8 808.2L1516.1 808.4L1517.4 808.7L1518.7 809.6L1520 810.5L1521.3 811.2L1522.6 811.8L1523.9 812.3L1525.2 811.6L1526.5 810.7L1527.8 809.8L1529.1 809.0L1530.4 808.3L1531.7 807.7L1533 807.1L1534.3 808.0L1535.6 809.0L1536.9 810.1L1538.2 810.0L1539.5 809.8L1540.8 809.4L1542.1 809.0L1543.4 809.4L1544.7 810.3L1546 811.3L1547.3 812.3L1548.6 812.9L1549.9 812.5L1551.2 812.0L1552.5 811.5L1553.8 811.0L1555.1 810.6L1556.4 810.1L1557.7 809.8L1559 809.9L1560.3 874.9L1561.2 895.0L1561.6 895.0L1561.6 895Z" fill="#3b7196"/><path d="M1123.5 895L1123.5 875.3L1124.8 875.3L1126.1 875.3L1127.4 875.3L1128.7 875.3L1130 875.3L1131.3 875.3L1132.6 875.3L1133.9 875.3L1135.2 875.2L1136.5 875.2L1137.8 875.2L1139.1 875.3L1140.4 875.2L1141.7 875.2L1143 875.2L1144.3 875.1L1145.6 875.1L1146.9 875.1L1148.2 875.1L1149.5 875.2L1150.8 876.5L1152.1 876.7L1153.4 875.3L1154.7 875.2L1156 875.2L1157.3 875.2L1158.6 875.1L1159.9 875.0L1161.2 875.0L1162.5 874.9L1163.8 874.9L1165.1 874.9L1166.4 875.0L1167.7 875.2L1169 875.4L1170.3 875.7L1171.6 875.9L1172.9 876.1L1174.2 876.2L1175.5 876.2L1176.8 876.1L1178.1 876.0L1179.4 875.9L1180.7 875.8L1182 875.8L1183.3 875.7L1184.6 875.6L1185.9 875.5L1187.2 875.3L1188.5 875.2L1189.8 875.0L1191.1 874.9L1192.4 874.9L1193.7 874.9L1195 875.0L1196.3 875.1L1197.6 875.1L1198.9 875.2L1200.2 875.3L1201.5 875.3L1202.8 875.3L1204.1 875.3L1205.4 875.2L1206.7 875.2L1208 875.1L1209.3 875.1L1210.6 875.1L1211.9 875.2L1213.2 875.4L1214.5 875.6L1215.8 875.8L1217.1 876.0L1218.4 876.1L1219.7 876.1L1221 876.0L1222.3 876.0L1223.6 875.9L1224.9 875.8L1226.2 875.8L1227.5 875.7L1228.8 875.7L1230.1 875.7L1231.4 875.8L1232.7 875.9L1234 875.9L1235.3 876.0L1236.6 876.0L1237.9 876.0L1239.2 875.9L1240.5 875.8L1241.8 875.7L1243.1 875.6L1244.4 875.5L1245.7 875.4L1247 875.4L1248.3 877.1L1249.6 877.2L1250.9 875.4L1252.2 875.4L1253.5 875.5L1254.8 875.5L1256.1 875.6L1257.4 875.6L1258.7 875.8L1260 875.9L1261.3 876.1L1262.6 876.2L1263.9 876.2L1265.2 876.2L1266.5 876.1L1267.8 876.1L1269.1 876.0L1270.4 876.0L1271.7 875.9L1273 875.9L1274.3 875.9L1275.6 875.8L1276.9 875.8L1278.2 875.8L1279.5 875.8L1280.8 875.8L1282.1 875.9L1283.4 875.8L1284.7 875.7L1286 875.6L1287.3 875.4L1288.6 875.2L1289.9 875.1L1291.2 875.0L1292.5 875.0L1293.8 875.1L1295.1 875.1L1296.4 875.1L1297.7 875.2L1299 875.3L1300.3 875.3L1301.6 875.4L1302.9 875.5L1304.2 875.7L1305.5 875.9L1306.8 876.0L1308.1 876.1L1309.4 876.1L1310.7 876.0L1312 875.8L1313.3 875.7L1314.6 875.5L1315.9 875.3L1317.2 875.5L1318.5 875.8L1319.8 876.3L1321.1 876.7L1322.4 877.2L1323.7 877.6L1325 878.0L1326.3 878.3L1327.6 878.3L1328.9 878.3L1330.2 878.1L1331.5 878.0L1332.8 877.9L1334.1 877.7L1335.4 878.1L1336.7 879.6L1338 880.0L1339.3 878.6L1340.6 878.0L1341.9 878.1L1343.2 878.3L1344.5 878.3L1345.8 878.4L1347.1 878.4L1348.4 878.4L1349.7 878.4L1351 878.4L1352.3 878.4L1353.6 878.4L1354.9 878.4L1356.2 878.3L1357.5 878.1L1358.8 877.9L1360.1 877.6L1361.4 877.5L1362.7 877.4L1364 877.4L1365.3 877.5L1366.6 877.7L1367.9 877.9L1368.3 877.9L1369.2 878.5L1370.5 879.4L1371.8 880.3L1372.2 880.5L1373.1 880.5L1374.4 880.5L1375.7 880.5L1377 880.5L1378.3 880.5L1379.6 880.6L1380.9 880.6L1382.2 880.6L1383.5 880.5L1384.8 880.5L1386.1 880.5L1387.4 880.5L1388.7 880.5L1390 880.5L1391.3 880.5L1392.6 880.5L1393.9 880.5L1395.2 880.5L1396.5 880.5L1397.8 880.5L1399.1 880.5L1400.4 880.4L1401.7 880.4L1403 880.4L1404.3 880.5L1405.6 880.5L1406.9 880.5L1408.2 880.6L1409.5 880.6L1410.8 880.7L1412.1 880.6L1413.4 880.6L1414.7 880.6L1416 880.6L1417.3 880.6L1418.6 880.6L1419.9 880.5L1421.2 880.5L1422.5 880.5L1423.8 880.5L1425.1 880.4L1426.4 880.4L1427.7 880.5L1429 880.5L1430.3 880.5L1431.6 880.5L1432.9 880.5L1434.2 880.6L1435.5 880.6L1436.8 880.6L1438.1 880.6L1439.4 880.6L1440.7 880.6L1442 880.6L1443.3 880.6L1444.6 880.6L1445.9 880.6L1446.4 880.6L1447.2 873.8L1448.5 862.7L1449.8 851.6L1451.1 840.0L1452.4 839.7L1453.7 839.4L1455 839.1L1456.3 839.6L1457.6 840.5L1458.9 841.4L1460.2 841.8L1461.5 841.3L1462.8 840.9L1464.1 840.7L1465.4 841.1L1466.7 840.9L1468 840.4L1469.3 839.9L1470.6 839.3L1471.9 839.8L1473.2 840.2L1474.5 840.6L1475.8 840.9L1477.1 841.3L1478.4 841.3L1479.7 841.3L1481 841.3L1482.3 841.3L1483.6 841.3L1484.9 841.3L1485.5 842.2L1486.2 837.1L1487.5 827.7L1488.8 818.4L1489.4 814.1L1490.1 809.8L1491.4 809.9L1491.7 810.0L1492.7 810.1L1494 810.2L1495.3 810.6L1496.6 811.1L1497.2 810.4L1497.9 810.8L1499.2 811.5L1500.5 812.2L1501.8 813.0L1503.1 812.2L1504.4 811.3L1505.7 810.3L1507 809.3L1508.3 808.4L1509.6 807.4L1510.9 806.9L1512.2 807.5L1513.5 808.2L1514.8 808.2L1516.1 808.4L1517.4 808.7L1518.7 809.6L1520 810.5L1521.3 811.2L1522.6 811.8L1523.9 812.3L1525.2 811.6L1526.5 810.7L1527.8 809.8L1529.1 809.0L1530.4 808.3L1531.7 807.7L1533 807.1L1534.3 808.0L1535.6 809.0L1536.9 810.1L1538.2 810.0L1539.5 809.8L1540.8 809.4L1542.1 809.0L1543.4 809.4L1544.7 810.3L1546 811.3L1547.3 812.3L1548.6 812.9L1549.9 812.5L1551.2 812.0L1552.5 811.5L1553.8 811.0L1555.1 810.6L1556.4 810.1L1557.7 809.8L1559 809.9L1560.3 874.9L1561.2 895.0L1561.6 895.0L1561.6 895Z" fill="#80808e"/><path d="M1123.5 895L1123.5 879.4L1124.8 879.4L1126.1 879.4L1127.4 879.3L1128.7 879.4L1130 879.4L1131.3 879.4L1132.6 879.4L1133.9 879.3L1135.2 879.3L1136.5 879.3L1137.8 879.3L1139.1 879.3L1140.4 879.3L1141.7 879.3L1143 879.2L1144.3 879.2L1145.6 879.2L1146.9 879.1L1148.2 879.2L1149.5 879.2L1150.8 880.6L1152.1 880.8L1153.4 879.4L1154.7 879.4L1156 879.4L1157.3 879.4L1158.6 879.3L1159.9 879.2L1161.2 879.1L1162.5 879.1L1163.8 879.1L1165.1 879.0L1166.4 879.1L1167.7 879.3L1169 879.6L1170.3 879.8L1171.6 880.1L1172.9 880.3L1174.2 880.3L1175.5 880.3L1176.8 880.2L1178.1 880.1L1179.4 880.0L1180.7 879.9L1182 879.8L1183.3 879.8L1184.6 879.7L1185.9 879.6L1187.2 879.5L1188.5 879.3L1189.8 879.2L1191.1 879.1L1192.4 879.1L1193.7 879.1L1195 879.1L1196.3 879.2L1197.6 879.3L1198.9 879.4L1200.2 879.4L1201.5 879.4L1202.8 879.4L1204.1 879.3L1205.4 879.3L1206.7 879.2L1208 879.2L1209.3 879.2L1210.6 879.2L1211.9 879.3L1213.2 879.5L1214.5 879.7L1215.8 879.9L1217.1 880.1L1218.4 880.2L1219.7 880.2L1221 880.1L1222.3 880.1L1223.6 880.0L1224.9 879.9L1226.2 879.8L1227.5 879.8L1228.8 879.8L1230.1 879.8L1231.4 879.9L1232.7 880.0L1234 880.0L1235.3 880.0L1236.6 880.1L1237.9 880.1L1239.2 880.0L1240.5 880.0L1241.8 879.9L1243.1 879.8L1244.4 879.6L1245.7 879.6L1247 879.6L1248.3 881.2L1249.6 881.4L1250.9 879.5L1252.2 879.5L1253.5 879.6L1254.8 879.6L1256.1 879.6L1257.4 879.7L1258.7 879.9L1260 880.1L1261.3 880.2L1262.6 880.3L1263.9 880.3L1265.2 880.3L1266.5 880.3L1267.8 880.2L1269.1 880.2L1270.4 880.1L1271.7 880.1L1273 880.1L1274.3 880.0L1275.6 880.0L1276.9 880.0L1278.2 880.0L1279.5 880.0L1280.8 880.0L1282.1 880.0L1283.4 879.9L1284.7 879.8L1286 879.6L1287.3 879.4L1288.6 879.3L1289.9 879.2L1291.2 879.1L1292.5 879.1L1293.8 879.2L1295.1 879.2L1296.4 879.2L1297.7 879.3L1299 879.3L1300.3 879.3L1301.6 879.4L1302.9 879.6L1304.2 879.8L1305.5 880.0L1306.8 880.1L1308.1 880.2L1309.4 880.2L1310.7 880.1L1312 880.0L1313.3 879.8L1314.6 879.5L1315.9 879.4L1317.2 879.5L1318.5 879.9L1319.8 880.3L1321.1 880.7L1322.4 881.2L1323.7 881.7L1325 882.2L1326.3 882.5L1327.6 882.5L1328.9 882.3L1330.2 882.2L1331.5 882.0L1332.8 881.9L1334.1 881.8L1335.4 882.2L1336.7 883.7L1338 884.1L1339.3 882.7L1340.6 882.1L1341.9 882.2L1343.2 882.3L1344.5 882.4L1345.8 882.4L1347.1 882.5L1348.4 882.5L1349.7 882.5L1351 882.6L1352.3 882.6L1353.6 882.6L1354.9 882.5L1356.2 882.3L1357.5 882.1L1358.8 881.9L1360.1 881.7L1361.4 881.5L1362.7 881.4L1364 881.4L1365.3 881.5L1366.6 881.7L1367.9 881.9L1368.3 881.9L1369.2 882.3L1370.5 882.9L1371.8 883.5L1372.2 883.6L1373.1 883.6L1374.4 883.6L1375.7 883.6L1377 883.6L1378.3 883.6L1379.6 883.6L1380.9 883.6L1382.2 883.6L1383.5 883.6L1384.8 883.6L1386.1 883.6L1387.4 883.6L1388.7 883.6L1390 883.6L1391.3 883.6L1392.6 883.6L1393.9 883.6L1395.2 883.6L1396.5 883.6L1397.8 883.6L1399.1 883.6L1400.4 883.6L1401.7 883.6L1403 883.6L1404.3 883.5L1405.6 883.5L1406.9 883.5L1408.2 883.6L1409.5 883.6L1410.8 883.7L1412.1 883.7L1413.4 883.7L1414.7 883.7L1416 883.7L1417.3 883.7L1418.6 883.7L1419.9 883.7L1421.2 883.6L1422.5 883.6L1423.8 883.6L1425.1 883.6L1426.4 883.6L1427.7 883.6L1429 883.6L1430.3 883.6L1431.6 883.6L1432.9 883.6L1434.2 883.6L1435.5 883.6L1436.8 883.6L1438.1 883.6L1439.4 883.6L1440.7 883.6L1442 883.6L1443.3 883.6L1444.6 883.7L1445.9 883.7L1446.4 883.7L1447.2 876.9L1448.5 865.8L1449.8 854.7L1451.1 843.2L1452.4 842.9L1453.7 842.6L1455 842.3L1456.3 843.2L1457.6 844.0L1458.9 844.8L1460.2 845.2L1461.5 845.1L1462.8 845.0L1464.1 844.8L1465.4 844.7L1466.7 844.4L1468 844.1L1469.3 843.8L1470.6 843.4L1471.9 843.7L1473.2 843.9L1474.5 844.2L1475.8 844.4L1477.1 844.5L1478.4 844.7L1479.7 844.8L1481 844.9L1482.3 845.0L1483.6 845.1L1484.9 845.3L1485.5 845.3L1486.2 840.2L1487.5 830.9L1488.8 821.6L1489.4 817.3L1490.1 813.0L1491.4 813.2L1491.7 813.2L1492.7 813.3L1494 813.3L1495.3 813.8L1496.6 814.3L1497.2 813.5L1497.9 813.9L1499.2 814.6L1500.5 815.3L1501.8 816.1L1503.1 815.3L1504.4 814.4L1505.7 813.5L1507 812.5L1508.3 811.5L1509.6 810.5L1510.9 810.0L1512.2 810.6L1513.5 811.3L1514.8 811.4L1516.1 811.5L1517.4 811.8L1518.7 812.7L1520 813.5L1521.3 814.2L1522.6 814.9L1523.9 815.4L1525.2 814.6L1526.5 813.7L1527.8 812.9L1529.1 812.1L1530.4 811.4L1531.7 810.8L1533 810.1L1534.3 811.0L1535.6 812.1L1536.9 813.1L1538.2 813.1L1539.5 812.9L1540.8 812.4L1542.1 812.1L1543.4 812.6L1544.7 813.5L1546 814.5L1547.3 815.5L1548.6 816.0L1549.9 815.6L1551.2 815.1L1552.5 814.6L1553.8 814.1L1555.1 813.6L1556.4 813.2L1557.7 812.8L1559 812.9L1560.3 876.1L1561.2 895.0L1561.6 895.0L1561.6 895Z" fill="#e0508c"/><path d="M1123.5 895L1123.5 883.5L1124.8 883.4L1126.1 883.4L1127.4 883.4L1128.7 883.4L1130 883.4L1131.3 883.3L1132.6 883.3L1133.9 883.3L1135.2 883.3L1136.5 883.3L1137.8 883.3L1139.1 883.3L1140.4 883.3L1141.7 883.2L1143 883.2L1144.3 883.1L1145.6 883.1L1146.9 883.1L1148.2 883.1L1149.5 883.1L1150.8 884.5L1152.1 884.7L1153.4 883.3L1154.7 883.3L1156 883.4L1157.3 883.3L1158.6 883.3L1159.9 883.3L1161.2 883.2L1162.5 883.2L1163.8 883.1L1165.1 883.1L1166.4 883.2L1167.7 883.4L1169 883.6L1170.3 883.9L1171.6 884.1L1172.9 884.3L1174.2 884.4L1175.5 884.3L1176.8 884.2L1178.1 884.1L1179.4 884.0L1180.7 883.8L1182 883.8L1183.3 883.7L1184.6 883.7L1185.9 883.6L1187.2 883.4L1188.5 883.3L1189.8 883.2L1191.1 883.1L1192.4 883.1L1193.7 883.1L1195 883.2L1196.3 883.3L1197.6 883.4L1198.9 883.4L1200.2 883.5L1201.5 883.5L1202.8 883.5L1204.1 883.4L1205.4 883.3L1206.7 883.2L1208 883.2L1209.3 883.1L1210.6 883.2L1211.9 883.3L1213.2 883.5L1214.5 883.7L1215.8 883.9L1217.1 884.1L1218.4 884.2L1219.7 884.2L1221 884.2L1222.3 884.1L1223.6 884.0L1224.9 883.9L1226.2 883.8L1227.5 883.7L1228.8 883.8L1230.1 883.8L1231.4 883.8L1232.7 883.9L1234 884.0L1235.3 884.0L1236.6 884.1L1237.9 884.0L1239.2 884.0L1240.5 883.9L1241.8 883.8L1243.1 883.7L1244.4 883.7L1245.7 883.6L1247 883.6L1248.3 885.3L1249.6 885.4L1250.9 883.6L1252.2 883.6L1253.5 883.6L1254.8 883.6L1256.1 883.6L1257.4 883.7L1258.7 883.9L1260 884.1L1261.3 884.2L1262.6 884.3L1263.9 884.4L1265.2 884.4L1266.5 884.3L1267.8 884.3L1269.1 884.2L1270.4 884.2L1271.7 884.1L1273 884.1L1274.3 884.1L1275.6 884.1L1276.9 884.1L1278.2 884.0L1279.5 884.0L1280.8 884.0L1282.1 884.0L1283.4 884.0L1284.7 883.8L1286 883.6L1287.3 883.4L1288.6 883.3L1289.9 883.2L1291.2 883.1L1292.5 883.1L1293.8 883.2L1295.1 883.2L1296.4 883.3L1297.7 883.3L1299 883.3L1300.3 883.3L1301.6 883.4L1302.9 883.5L1304.2 883.7L1305.5 883.9L1306.8 884.0L1308.1 884.2L1309.4 884.2L1310.7 884.1L1312 883.9L1313.3 883.8L1314.6 883.6L1315.9 883.4L1317.2 883.6L1318.5 883.8L1319.8 884.2L1321.1 884.7L1322.4 885.1L1323.7 885.6L1325 886.1L1326.3 886.4L1327.6 886.4L1328.9 886.3L1330.2 886.2L1331.5 886.1L1332.8 885.9L1334.1 885.8L1335.4 886.2L1336.7 887.7L1338 888.1L1339.3 886.7L1340.6 886.1L1341.9 886.2L1343.2 886.4L1344.5 886.4L1345.8 886.4L1347.1 886.4L1348.4 886.5L1349.7 886.5L1351 886.6L1352.3 886.6L1353.6 886.6L1354.9 886.6L1356.2 886.4L1357.5 886.2L1358.8 885.9L1360.1 885.7L1361.4 885.5L1362.7 885.4L1364 885.4L1365.3 885.5L1366.6 885.7L1367.9 885.9L1368.3 885.9L1369.2 886.0L1370.5 886.1L1371.8 886.2L1372.2 886.2L1373.1 886.2L1374.4 886.2L1375.7 886.2L1377 886.2L1378.3 886.2L1379.6 886.2L1380.9 886.2L1382.2 886.2L1383.5 886.2L1384.8 886.2L1386.1 886.2L1387.4 886.2L1388.7 886.2L1390 886.2L1391.3 886.2L1392.6 886.2L1393.9 886.2L1395.2 886.2L1396.5 886.2L1397.8 886.2L1399.1 886.2L1400.4 886.2L1401.7 886.2L1403 886.2L1404.3 886.2L1405.6 886.2L1406.9 886.2L1408.2 886.2L1409.5 886.2L1410.8 886.2L1412.1 886.2L1413.4 886.2L1414.7 886.2L1416 886.2L1417.3 886.2L1418.6 886.2L1419.9 886.2L1421.2 886.2L1422.5 886.2L1423.8 886.2L1425.1 886.2L1426.4 886.2L1427.7 886.2L1429 886.2L1430.3 886.2L1431.6 886.2L1432.9 886.2L1434.2 886.2L1435.5 886.2L1436.8 886.2L1438.1 886.2L1439.4 886.2L1440.7 886.2L1442 886.2L1443.3 886.2L1444.6 886.2L1445.9 886.2L1446.4 886.2L1447.2 879.5L1448.5 868.5L1449.8 857.6L1451.1 846.2L1452.4 845.8L1453.7 845.5L1455 845.2L1456.3 846.1L1457.6 846.9L1458.9 847.8L1460.2 848.3L1461.5 848.1L1462.8 848.0L1464.1 847.9L1465.4 847.7L1466.7 847.5L1468 847.2L1469.3 846.8L1470.6 846.5L1471.9 846.8L1473.2 847.0L1474.5 847.2L1475.8 847.4L1477.1 847.6L1478.4 847.7L1479.7 847.9L1481 848.0L1482.3 848.0L1483.6 848.1L1484.9 848.2L1485.5 848.3L1486.2 843.1L1487.5 833.8L1488.8 824.6L1489.4 820.3L1490.1 816.0L1491.4 816.2L1491.7 816.2L1492.7 816.3L1494 816.5L1495.3 817.0L1496.6 817.4L1497.2 816.7L1497.9 817.1L1499.2 817.7L1500.5 818.5L1501.8 819.3L1503.1 818.5L1504.4 817.5L1505.7 816.6L1507 815.6L1508.3 814.6L1509.6 813.7L1510.9 813.2L1512.2 813.8L1513.5 814.4L1514.8 814.5L1516.1 814.7L1517.4 815.0L1518.7 815.8L1520 816.7L1521.3 817.4L1522.6 818.0L1523.9 818.5L1525.2 817.7L1526.5 816.8L1527.8 815.9L1529.1 815.1L1530.4 814.5L1531.7 813.8L1533 813.2L1534.3 814.1L1535.6 815.2L1536.9 816.2L1538.2 816.2L1539.5 816.0L1540.8 815.5L1542.1 815.1L1543.4 815.6L1544.7 816.6L1546 817.5L1547.3 818.6L1548.6 819.2L1549.9 818.8L1551.2 818.3L1552.5 817.8L1553.8 817.2L1555.1 816.7L1556.4 816.2L1557.7 815.9L1559 816.0L1560.3 877.3L1561.2 895.0L1561.6 895.0L1561.6 895Z" fill="#2d6e54"/><path d="M1123.5 895L1123.5 883.5L1124.8 883.4L1126.1 883.4L1127.4 883.4L1128.7 883.4L1130 883.4L1131.3 883.3L1132.6 883.3L1133.9 883.3L1135.2 883.3L1136.5 883.3L1137.8 883.3L1139.1 883.3L1140.4 883.3L1141.7 883.2L1143 883.2L1144.3 883.1L1145.6 883.1L1146.9 883.1L1148.2 883.1L1149.5 883.1L1150.8 884.5L1152.1 884.7L1153.4 883.3L1154.7 883.3L1156 883.4L1157.3 883.3L1158.6 883.3L1159.9 883.3L1161.2 883.2L1162.5 883.2L1163.8 883.1L1165.1 883.1L1166.4 883.2L1167.7 883.4L1169 883.6L1170.3 883.9L1171.6 884.1L1172.9 884.3L1174.2 884.4L1175.5 884.3L1176.8 884.2L1178.1 884.1L1179.4 884.0L1180.7 883.8L1182 883.8L1183.3 883.7L1184.6 883.7L1185.9 883.6L1187.2 883.4L1188.5 883.3L1189.8 883.2L1191.1 883.1L1192.4 883.1L1193.7 883.1L1195 883.2L1196.3 883.3L1197.6 883.4L1198.9 883.4L1200.2 883.5L1201.5 883.5L1202.8 883.5L1204.1 883.4L1205.4 883.3L1206.7 883.2L1208 883.2L1209.3 883.1L1210.6 883.2L1211.9 883.3L1213.2 883.5L1214.5 883.7L1215.8 883.9L1217.1 884.1L1218.4 884.2L1219.7 884.2L1221 884.2L1222.3 884.1L1223.6 884.0L1224.9 883.9L1226.2 883.8L1227.5 883.7L1228.8 883.8L1230.1 883.8L1231.4 883.8L1232.7 883.9L1234 884.0L1235.3 884.0L1236.6 884.1L1237.9 884.0L1239.2 884.0L1240.5 883.9L1241.8 883.8L1243.1 883.7L1244.4 883.7L1245.7 883.6L1247 883.6L1248.3 885.3L1249.6 885.4L1250.9 883.6L1252.2 883.6L1253.5 883.6L1254.8 883.6L1256.1 883.6L1257.4 883.7L1258.7 883.9L1260 884.1L1261.3 884.2L1262.6 884.3L1263.9 884.4L1265.2 884.4L1266.5 884.3L1267.8 884.3L1269.1 884.2L1270.4 884.2L1271.7 884.1L1273 884.1L1274.3 884.1L1275.6 884.1L1276.9 884.1L1278.2 884.0L1279.5 884.0L1280.8 884.0L1282.1 884.0L1283.4 884.0L1284.7 883.8L1286 883.6L1287.3 883.4L1288.6 883.3L1289.9 883.2L1291.2 883.1L1292.5 883.1L1293.8 883.2L1295.1 883.2L1296.4 883.3L1297.7 883.3L1299 883.3L1300.3 883.3L1301.6 883.4L1302.9 883.5L1304.2 883.7L1305.5 883.9L1306.8 884.0L1308.1 884.2L1309.4 884.2L1310.7 884.1L1312 883.9L1313.3 883.8L1314.6 883.6L1315.9 883.4L1317.2 883.6L1318.5 883.8L1319.8 884.2L1321.1 884.7L1322.4 885.1L1323.7 885.6L1325 886.1L1326.3 886.4L1327.6 886.4L1328.9 886.3L1330.2 886.2L1331.5 886.1L1332.8 885.9L1334.1 885.8L1335.4 886.2L1336.7 887.7L1338 888.1L1339.3 886.7L1340.6 886.1L1341.9 886.2L1343.2 886.4L1344.5 886.4L1345.8 886.4L1347.1 886.4L1348.4 886.5L1349.7 886.5L1351 886.6L1352.3 886.6L1353.6 886.6L1354.9 886.6L1356.2 886.4L1357.5 886.2L1358.8 885.9L1360.1 885.7L1361.4 885.5L1362.7 885.4L1364 885.4L1365.3 885.5L1366.6 885.7L1367.9 885.9L1368.3 885.9L1369.2 886.0L1370.5 886.1L1371.8 886.2L1372.2 886.2L1373.1 886.2L1374.4 886.2L1375.7 886.2L1377 886.2L1378.3 886.2L1379.6 886.2L1380.9 886.2L1382.2 886.2L1383.5 886.2L1384.8 886.2L1386.1 886.2L1387.4 886.2L1388.7 886.2L1390 886.2L1391.3 886.2L1392.6 886.2L1393.9 886.2L1395.2 886.2L1396.5 886.2L1397.8 886.2L1399.1 886.2L1400.4 886.2L1401.7 886.2L1403 886.2L1404.3 886.2L1405.6 886.2L1406.9 886.2L1408.2 886.2L1409.5 886.2L1410.8 886.2L1412.1 886.2L1413.4 886.2L1414.7 886.2L1416 886.2L1417.3 886.2L1418.6 886.2L1419.9 886.2L1421.2 886.2L1422.5 886.2L1423.8 886.2L1425.1 886.2L1426.4 886.2L1427.7 886.2L1429 886.2L1430.3 886.2L1431.6 886.2L1432.9 886.2L1434.2 886.2L1435.5 886.2L1436.8 886.2L1438.1 886.2L1439.4 886.2L1440.7 886.2L1442 886.2L1443.3 886.2L1444.6 886.2L1445.9 886.2L1446.4 886.2L1447.2 879.5L1448.5 868.5L1449.8 857.6L1451.1 846.2L1452.4 845.8L1453.7 845.5L1455 845.2L1456.3 846.1L1457.6 846.9L1458.9 847.8L1460.2 848.3L1461.5 848.1L1462.8 848.0L1464.1 847.9L1465.4 847.7L1466.7 847.5L1468 847.2L1469.3 846.8L1470.6 846.5L1471.9 846.8L1473.2 847.0L1474.5 847.2L1475.8 847.4L1477.1 847.6L1478.4 847.7L1479.7 847.9L1481 848.0L1482.3 848.0L1483.6 848.1L1484.9 848.2L1485.5 848.3L1486.2 848.3L1487.5 848.5L1488.8 848.6L1489.4 848.7L1490.1 848.7L1491.4 848.9L1491.7 848.9L1492.7 849.1L1494 849.2L1495.3 849.7L1496.6 850.2L1497.2 850.4L1497.9 850.7L1499.2 851.2L1500.5 851.7L1501.8 852.2L1503.1 851.7L1504.4 851.1L1505.7 850.4L1507 849.8L1508.3 849.1L1509.6 848.5L1510.9 848.1L1512.2 848.3L1513.5 848.6L1514.8 848.8L1516.1 849.0L1517.4 849.2L1518.7 849.7L1520 850.2L1521.3 850.7L1522.6 851.2L1523.9 851.6L1525.2 851.0L1526.5 850.5L1527.8 850.0L1529.1 849.4L1530.4 848.9L1531.7 848.3L1533 847.8L1534.3 848.2L1535.6 848.6L1536.9 849.1L1538.2 849.5L1539.5 849.9L1540.8 849.4L1542.1 848.9L1543.4 849.3L1544.7 850.0L1546 850.8L1547.3 851.5L1548.6 852.3L1549.9 852.0L1551.2 851.6L1552.5 851.1L1553.8 850.7L1555.1 850.3L1556.4 849.8L1557.7 849.4L1559 848.8L1560.3 890.7L1561.2 895.0L1561.6 895.0L1561.6 895Z" fill="#c1c2cd" stroke="#ecedf4" stroke-width="1"/><path d="M1123.5 895L1123.5 883.5L1124.8 883.4L1126.1 883.4L1127.4 883.4L1128.7 883.4L1130 883.4L1131.3 883.3L1132.6 883.3L1133.9 883.3L1135.2 883.3L1136.5 883.3L1137.8 883.3L1139.1 883.3L1140.4 883.3L1141.7 883.2L1143 883.2L1144.3 883.1L1145.6 883.1L1146.9 883.1L1148.2 883.1L1149.5 883.1L1150.8 884.5L1152.1 884.7L1153.4 883.3L1154.7 883.3L1156 883.4L1157.3 883.3L1158.6 883.3L1159.9 883.3L1161.2 883.2L1162.5 883.2L1163.8 883.1L1165.1 883.1L1166.4 883.2L1167.7 883.4L1169 883.6L1170.3 883.9L1171.6 884.1L1172.9 884.3L1174.2 884.4L1175.5 884.3L1176.8 884.2L1178.1 884.1L1179.4 884.0L1180.7 883.8L1182 883.8L1183.3 883.7L1184.6 883.7L1185.9 883.6L1187.2 883.4L1188.5 883.3L1189.8 883.2L1191.1 883.1L1192.4 883.1L1193.7 883.1L1195 883.2L1196.3 883.3L1197.6 883.4L1198.9 883.4L1200.2 883.5L1201.5 883.5L1202.8 883.5L1204.1 883.4L1205.4 883.3L1206.7 883.2L1208 883.2L1209.3 883.1L1210.6 883.2L1211.9 883.3L1213.2 883.5L1214.5 883.7L1215.8 883.9L1217.1 884.1L1218.4 884.2L1219.7 884.2L1221 884.2L1222.3 884.1L1223.6 884.0L1224.9 883.9L1226.2 883.8L1227.5 883.7L1228.8 883.8L1230.1 883.8L1231.4 883.8L1232.7 883.9L1234 884.0L1235.3 884.0L1236.6 884.1L1237.9 884.0L1239.2 884.0L1240.5 883.9L1241.8 883.8L1243.1 883.7L1244.4 883.7L1245.7 883.6L1247 883.6L1248.3 885.3L1249.6 885.4L1250.9 883.6L1252.2 883.6L1253.5 883.6L1254.8 883.6L1256.1 883.6L1257.4 883.7L1258.7 883.9L1260 884.1L1261.3 884.2L1262.6 884.3L1263.9 884.4L1265.2 884.4L1266.5 884.3L1267.8 884.3L1269.1 884.2L1270.4 884.2L1271.7 884.1L1273 884.1L1274.3 884.1L1275.6 884.1L1276.9 884.1L1278.2 884.0L1279.5 884.0L1280.8 884.0L1282.1 884.0L1283.4 884.0L1284.7 883.8L1286 883.6L1287.3 883.4L1288.6 883.3L1289.9 883.2L1291.2 883.1L1292.5 883.1L1293.8 883.2L1295.1 883.2L1296.4 883.3L1297.7 883.3L1299 883.3L1300.3 883.3L1301.6 883.4L1302.9 883.5L1304.2 883.7L1305.5 883.9L1306.8 884.0L1308.1 884.2L1309.4 884.2L1310.7 884.1L1312 883.9L1313.3 883.8L1314.6 883.6L1315.9 883.4L1317.2 883.6L1318.5 883.8L1319.8 884.2L1321.1 884.7L1322.4 885.1L1323.7 885.6L1325 886.1L1326.3 886.4L1327.6 886.4L1328.9 886.3L1330.2 886.2L1331.5 886.1L1332.8 885.9L1334.1 885.8L1335.4 886.2L1336.7 887.7L1338 888.1L1339.3 886.7L1340.6 886.1L1341.9 886.2L1343.2 886.4L1344.5 886.4L1345.8 886.4L1347.1 886.4L1348.4 886.5L1349.7 886.5L1351 886.6L1352.3 886.6L1353.6 886.6L1354.9 886.6L1356.2 886.4L1357.5 886.2L1358.8 885.9L1360.1 885.7L1361.4 885.5L1362.7 885.4L1364 885.4L1365.3 885.5L1366.6 885.7L1367.9 885.9L1368.3 885.9L1369.2 886.0L1370.5 886.1L1371.8 886.2L1372.2 886.2L1373.1 886.2L1374.4 886.2L1375.7 886.2L1377 886.2L1378.3 886.2L1379.6 886.2L1380.9 886.2L1382.2 886.2L1383.5 886.2L1384.8 886.2L1386.1 886.2L1387.4 886.2L1388.7 886.2L1390 886.2L1391.3 886.2L1392.6 886.2L1393.9 886.2L1395.2 886.2L1396.5 886.2L1397.8 886.2L1399.1 886.2L1400.4 886.2L1401.7 886.2L1403 886.2L1404.3 886.2L1405.6 886.2L1406.9 886.2L1408.2 886.2L1409.5 886.2L1410.8 886.2L1412.1 886.2L1413.4 886.2L1414.7 886.2L1416 886.2L1417.3 886.2L1418.6 886.2L1419.9 886.2L1421.2 886.2L1422.5 886.2L1423.8 886.2L1425.1 886.2L1426.4 886.2L1427.7 886.2L1429 886.2L1430.3 886.2L1431.6 886.2L1432.9 886.2L1434.2 886.2L1435.5 886.2L1436.8 886.2L1438.1 886.2L1439.4 886.2L1440.7 886.2L1442 886.2L1443.3 886.2L1444.6 886.2L1445.9 886.2L1446.4 886.2L1447.2 891.9L1448.5 895.0L1449.8 895.0L1451.1 895.0L1452.4 895.0L1453.7 895.0L1455 895.0L1456.3 895.0L1457.6 895.0L1458.9 895.0L1460.2 895.0L1461.5 895.0L1462.8 895.0L1464.1 895.0L1465.4 895.0L1466.7 895.0L1468 895.0L1469.3 895.0L1470.6 895.0L1471.9 895.0L1473.2 895.0L1474.5 895.0L1475.8 895.0L1477.1 895.0L1478.4 895.0L1479.7 895.0L1481 895.0L1482.3 895.0L1483.6 895.0L1484.9 895.0L1485.5 895.0L1486.2 895.0L1487.5 895.0L1488.8 895.0L1489.4 895.0L1490.1 895.0L1491.4 895.0L1491.7 895.0L1492.7 895.0L1494 895.0L1495.3 895.0L1496.6 895.0L1497.2 895.0L1497.9 895.0L1499.2 895.0L1500.5 895.0L1501.8 895.0L1503.1 895.0L1504.4 895.0L1505.7 895.0L1507 895.0L1508.3 895.0L1509.6 895.0L1510.9 895.0L1512.2 895.0L1513.5 895.0L1514.8 895.0L1516.1 895.0L1517.4 895.0L1518.7 895.0L1520 895.0L1521.3 895.0L1522.6 895.0L1523.9 895.0L1525.2 895.0L1526.5 895.0L1527.8 895.0L1529.1 895.0L1530.4 895.0L1531.7 895.0L1533 895.0L1534.3 895.0L1535.6 895.0L1536.9 895.0L1538.2 895.0L1539.5 895.0L1540.8 895.0L1542.1 895.0L1543.4 895.0L1544.7 895.0L1546 895.0L1547.3 895.0L1548.6 895.0L1549.9 895.0L1551.2 895.0L1552.5 895.0L1553.8 895.0L1555.1 895.0L1556.4 895.0L1557.7 895.0L1559 895.0L1560.3 895.0L1561.2 895.0L1561.6 895.0L1561.6 895Z" fill="#2f62d6"/></svg>
</div>
</div></body></html>
